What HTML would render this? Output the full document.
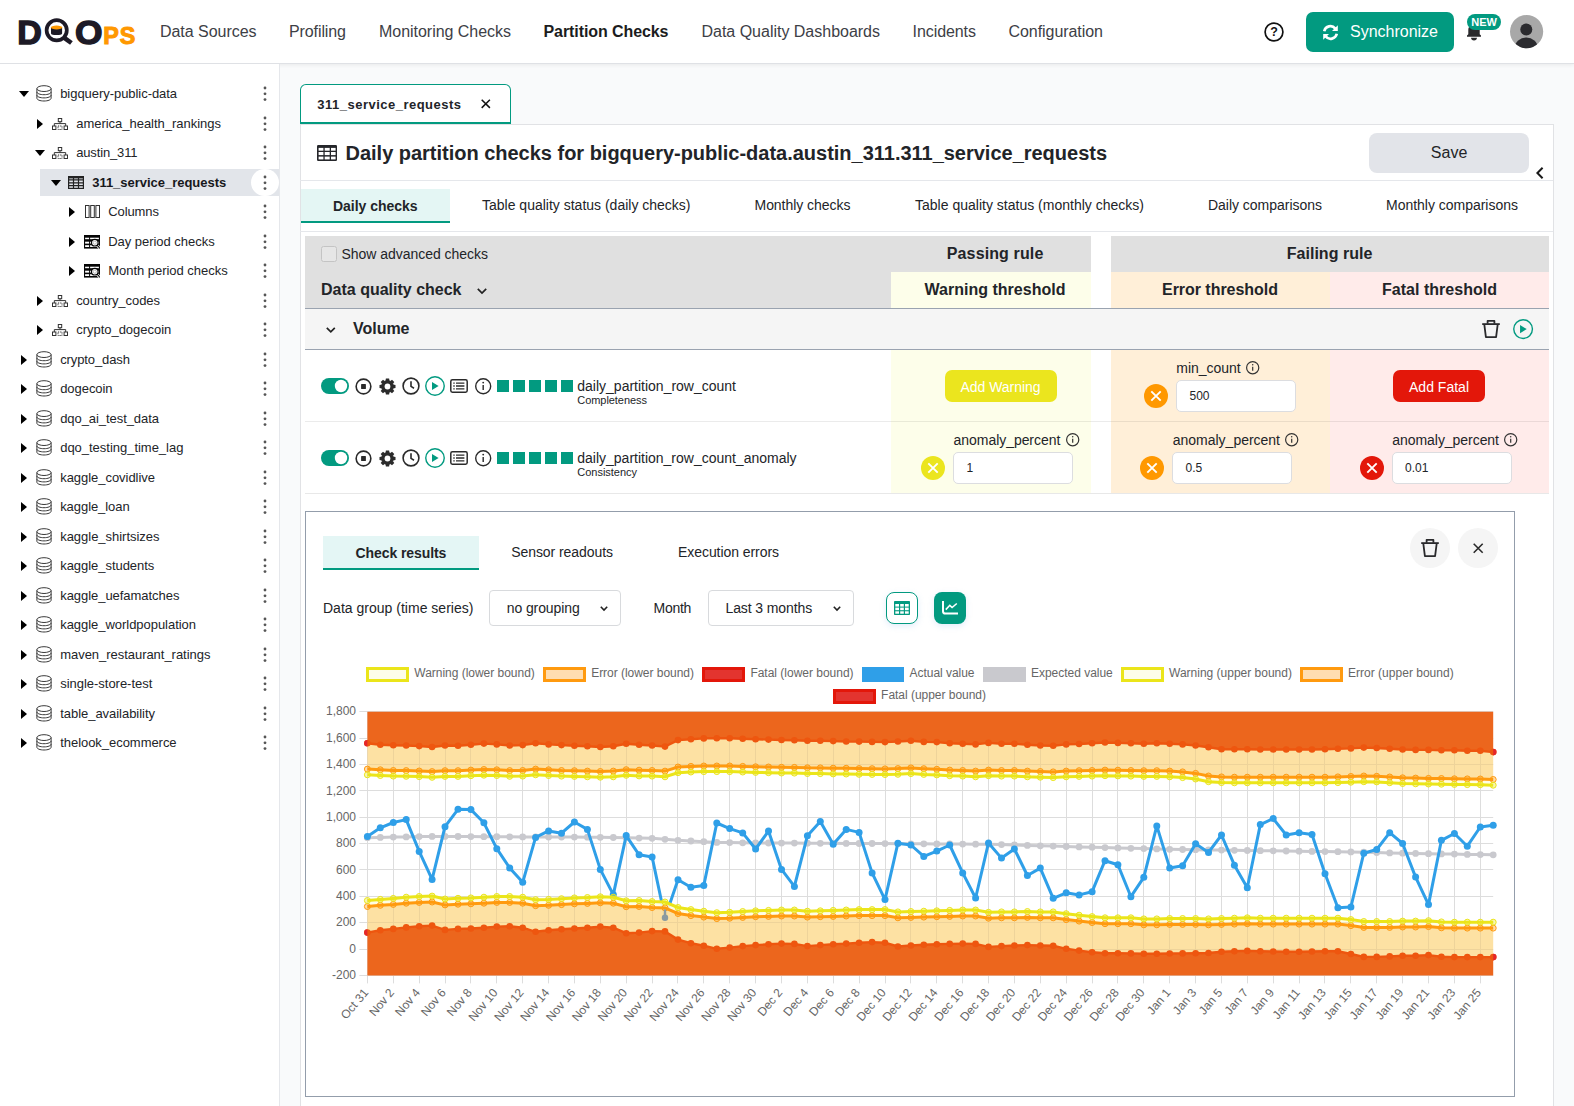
<!DOCTYPE html>
<html lang="en"><head><meta charset="utf-8"><title>DQOps - Partition Checks</title>
<style>
html,body{margin:0;padding:0}
body{width:1574px;height:1106px;overflow:hidden;background:#f9fafb;position:relative;font-family:"Liberation Sans",sans-serif;color:#1f2937}
.t{position:absolute;white-space:pre}
.b{position:absolute;box-sizing:border-box}
svg{overflow:visible}
svg text{font-family:"Liberation Sans",sans-serif}
</style></head>
<body>
<header><div class="b" style="left:0.0px;top:0.0px;width:1574.0px;height:64.0px;background:#fff;border-bottom:1px solid #dfe1e5;box-shadow:0 1px 4px rgba(0,0,0,0.07)"></div><div class="logo"><div class="t" style="left:17.3px;top:8px;font-size:34px;line-height:48px;font-weight:700;color:#1d1a26;letter-spacing:0.000px;-webkit-text-stroke:1.4px #1d1a26;">D</div><div class="t" style="left:44.0px;top:8px;font-size:34px;line-height:48px;font-weight:700;color:transparent;letter-spacing:0.000px;">Q</div><svg class="b" style="left:43.5px;top:18.0px;" width="30" height="30" viewBox="0 0 30 30"><circle cx="12.7" cy="12.3" r="10.1" fill="none" stroke="#1d1a26" stroke-width="3.7"/><path d="M19.6 19.3L27.4 25" stroke="#1d1a26" stroke-width="4.6" stroke-linecap="butt"/><path d="M7 9.8V15.4C7 16.3 9.5 17 12.55 17S18.1 16.3 18.1 15.4V9.8Z" fill="#1d1a26"/><ellipse cx="12.55" cy="9.5" rx="5.8" ry="1.9" fill="#ff9800"/></svg><div class="t" style="left:74.6px;top:8px;font-size:34px;line-height:48px;font-weight:700;color:#1d1a26;letter-spacing:0.000px;-webkit-text-stroke:1.4px #1d1a26;transform:scaleX(1.04);transform-origin:left center;">O</div><div class="t" style="left:103.2px;top:20px;font-size:23.4px;line-height:33px;font-weight:700;color:#ff9800;letter-spacing:0.897px;-webkit-text-stroke:1px #ff9800;">PS</div></div><div class="t" style="left:160.0px;top:21px;font-size:16px;line-height:22px;font-weight:400;color:#3d4046;letter-spacing:-0.040px;">Data Sources</div><div class="t" style="left:289.0px;top:21px;font-size:16px;line-height:22px;font-weight:400;color:#3d4046;letter-spacing:-0.102px;">Profiling</div><div class="t" style="left:379.0px;top:21px;font-size:16px;line-height:22px;font-weight:400;color:#3d4046;letter-spacing:-0.031px;">Monitoring Checks</div><div class="t" style="left:543.5px;top:21px;font-size:16px;line-height:22px;font-weight:700;color:#1b1c20;letter-spacing:-0.084px;">Partition Checks</div><div class="t" style="left:701.5px;top:21px;font-size:16px;line-height:22px;font-weight:400;color:#3d4046;letter-spacing:-0.012px;">Data Quality Dashboards</div><div class="t" style="left:912.5px;top:21px;font-size:16px;line-height:22px;font-weight:400;color:#3d4046;letter-spacing:-0.068px;">Incidents</div><div class="t" style="left:1008.5px;top:21px;font-size:16px;line-height:22px;font-weight:400;color:#3d4046;letter-spacing:-0.056px;">Configuration</div><svg class="b" style="left:1264.0px;top:22.0px;" width="20" height="20" viewBox="0 0 20 20"><circle cx="10" cy="10" r="8.9" fill="none" stroke="#111" stroke-width="1.7"/><text x="10" y="14.3" text-anchor="middle" font-size="12.5" font-weight="700" fill="#111">?</text></svg><div class="b" style="left:1306.0px;top:12.0px;width:148.0px;height:39.5px;background:#029a80;border-radius:7px"></div><svg class="b" style="left:1322.0px;top:23.5px;" width="17" height="17" viewBox="0 0 17 17"><g fill="none" stroke="#fff" stroke-width="2.6" stroke-linecap="butt"><path d="M2.2 7.2A6.3 6.3 0 0 1 13.3 4.6"/><path d="M14.8 9.8A6.3 6.3 0 0 1 3.7 12.4"/></g><path d="M15.8 1.2V7H10Z" fill="#fff"/><path d="M1.2 15.8V10H7Z" fill="#fff"/></svg><div class="t" style="left:1350.0px;top:21px;font-size:16px;line-height:22px;font-weight:400;color:#fff;letter-spacing:-0.005px;">Synchronize</div><svg class="b" style="left:1467.0px;top:23.5px;" width="14" height="17" viewBox="0 0 14 17"><path d="M7 0.5C3.6 0.5 1.3 2.8 1.3 6V10.2L0 11.6V12.7H14V11.6L12.7 10.2V6C12.7 2.8 10.4 0.5 7 0.5Z" fill="#2a2a2c"/><path d="M4 13.7H10C10 15.3 8.7 16.5 7 16.5S4 15.3 4 13.7Z" fill="#2a2a2c"/></svg><div class="b" style="left:1467.0px;top:14.0px;width:34.0px;height:16.0px;background:#029a80;border-radius:8px"></div><div class="t" style="left:1471.3px;top:15px;font-size:11px;line-height:15px;font-weight:700;color:#fff;letter-spacing:0.014px;">NEW</div><svg class="b" style="left:1509.8px;top:15.4px;" width="33.2" height="33.2" viewBox="0 0 33.2 33.2"><defs><clipPath id="avc"><circle cx="16.6" cy="16.6" r="16.6"/></clipPath></defs><circle cx="16.6" cy="16.6" r="16.6" fill="#a8a8a8"/><g clip-path="url(#avc)"><circle cx="16.3" cy="14.4" r="6" fill="#2b2b2f"/><ellipse cx="16.3" cy="32.8" rx="11.4" ry="10.2" fill="#2b2b2f"/></g></svg></header>
<aside><div class="b" style="left:0.0px;top:64.0px;width:279.5px;height:1042.0px;background:#fff;border-right:1px solid #e5e7eb"></div><svg class="b" style="left:19.0px;top:90.8px;" width="10" height="6" viewBox="0 0 10 6"><path d="M0 0H10L5 6Z" fill="#000"/></svg><svg class="b" style="left:36.0px;top:85.1px;" width="16" height="17" viewBox="0 0 16 17"><g fill="none" stroke="#3a3a3a" stroke-width="1"><ellipse cx="8" cy="3.6" rx="7.1" ry="2.9"/><path d="M0.9 3.6V13.2C0.9 14.8 4 16 8 16S15.1 14.8 15.1 13.2V3.6"/><path d="M0.9 6.9C0.9 8.5 4 9.7 8 9.7S15.1 8.5 15.1 6.9"/><path d="M0.9 10.1C0.9 11.7 4 12.9 8 12.9S15.1 11.7 15.1 10.1"/></g></svg><div class="t" style="left:60.2px;top:85px;font-size:13px;line-height:18px;font-weight:400;color:#222428;letter-spacing:-0.047px;">bigquery-public-data</div><svg class="b" style="left:262.5px;top:86.0px;" width="4" height="15.6" viewBox="0 0 4 15.6"><circle cx="2" cy="2" r="1.4" fill="#555"/><circle cx="2" cy="7.8" r="1.4" fill="#555"/><circle cx="2" cy="13.6" r="1.4" fill="#555"/></svg><svg class="b" style="left:36.9px;top:118.8px;" width="6" height="10" viewBox="0 0 6 10"><path d="M0 0V10L6 5Z" fill="#000"/></svg><svg class="b" style="left:52.0px;top:118.0px;" width="16" height="12" viewBox="0 0 16 12"><g fill="none" stroke="#333" stroke-width="1"><rect x="6.3" y="0.5" width="3.4" height="3.2"/><path d="M8 3.7V5.6M2.3 8V5.6H13.7V8"/><rect x="0.5" y="8" width="3.4" height="3.5"/><rect x="12.1" y="8" width="3.4" height="3.5"/><rect x="6" y="8" width="4" height="3.5" stroke-dasharray="1.2 1"/></g></svg><div class="t" style="left:76.2px;top:115px;font-size:13px;line-height:18px;font-weight:400;color:#222428;letter-spacing:-0.021px;">america_health_rankings</div><svg class="b" style="left:262.5px;top:116.0px;" width="4" height="15.6" viewBox="0 0 4 15.6"><circle cx="2" cy="2" r="1.4" fill="#555"/><circle cx="2" cy="7.8" r="1.4" fill="#555"/><circle cx="2" cy="13.6" r="1.4" fill="#555"/></svg><svg class="b" style="left:35.0px;top:149.8px;" width="10" height="6" viewBox="0 0 10 6"><path d="M0 0H10L5 6Z" fill="#000"/></svg><svg class="b" style="left:52.0px;top:147.0px;" width="16" height="12" viewBox="0 0 16 12"><g fill="none" stroke="#333" stroke-width="1"><rect x="6.3" y="0.5" width="3.4" height="3.2"/><path d="M8 3.7V5.6M2.3 8V5.6H13.7V8"/><rect x="0.5" y="8" width="3.4" height="3.5"/><rect x="12.1" y="8" width="3.4" height="3.5"/><rect x="6" y="8" width="4" height="3.5" stroke-dasharray="1.2 1"/></g></svg><div class="t" style="left:76.2px;top:144px;font-size:13px;line-height:18px;font-weight:400;color:#222428;letter-spacing:-0.151px;">austin_311</div><svg class="b" style="left:262.5px;top:145.0px;" width="4" height="15.6" viewBox="0 0 4 15.6"><circle cx="2" cy="2" r="1.4" fill="#555"/><circle cx="2" cy="7.8" r="1.4" fill="#555"/><circle cx="2" cy="13.6" r="1.4" fill="#555"/></svg><div class="b" style="left:40.0px;top:169.0px;width:239.0px;height:27.0px;background:#e2e5ea"></div><div class="b" style="left:251.0px;top:168.6px;width:27.6px;height:27.6px;background:#fff;border-radius:14px"></div><svg class="b" style="left:51.0px;top:179.8px;" width="10" height="6" viewBox="0 0 10 6"><path d="M0 0H10L5 6Z" fill="#000"/></svg><svg class="b" style="left:67.8px;top:176.2px;" width="16.0" height="13.0" viewBox="0 0 16 13"><g fill="none" stroke="#222" stroke-width="1.2"><rect x="0.6" y="0.6" width="14.8" height="11.8"/><path d="M0.6 3.9H15.4M0.6 6.8H15.4M0.6 9.7H15.4M5.5 2V12.4M10.5 2V12.4"/></g><rect x="0" y="0" width="16" height="2.4" fill="#222"/></svg><div class="t" style="left:92.2px;top:174px;font-size:13px;line-height:18px;font-weight:700;color:#17181c;letter-spacing:-0.024px;">311_service_requests</div><svg class="b" style="left:262.5px;top:175.0px;" width="4" height="15.6" viewBox="0 0 4 15.6"><circle cx="2" cy="2" r="1.4" fill="#555"/><circle cx="2" cy="7.8" r="1.4" fill="#555"/><circle cx="2" cy="13.6" r="1.4" fill="#555"/></svg><svg class="b" style="left:68.9px;top:206.8px;" width="6" height="10" viewBox="0 0 6 10"><path d="M0 0V10L6 5Z" fill="#000"/></svg><svg class="b" style="left:84.5px;top:205.3px;" width="15" height="13" viewBox="0 0 15 13"><g fill="none" stroke="#333" stroke-width="1"><rect x="0.5" y="0.5" width="3.6" height="12"/><rect x="5.7" y="0.5" width="3.6" height="12"/><rect x="10.9" y="0.5" width="3.6" height="12"/></g></svg><div class="t" style="left:108.2px;top:203px;font-size:13px;line-height:18px;font-weight:400;color:#222428;letter-spacing:-0.083px;">Columns</div><svg class="b" style="left:262.5px;top:204.0px;" width="4" height="15.6" viewBox="0 0 4 15.6"><circle cx="2" cy="2" r="1.4" fill="#555"/><circle cx="2" cy="7.8" r="1.4" fill="#555"/><circle cx="2" cy="13.6" r="1.4" fill="#555"/></svg><svg class="b" style="left:68.9px;top:236.8px;" width="6" height="10" viewBox="0 0 6 10"><path d="M0 0V10L6 5Z" fill="#000"/></svg><svg class="b" style="left:84.0px;top:235.0px;" width="16" height="13.6" viewBox="0 0 16 13.6"><rect x="0" y="0" width="16" height="13.6" fill="#050505"/><rect x="1.1" y="2.7" width="4.0" height="1.5" fill="#fff"/><rect x="1.1" y="6.7" width="4.0" height="1.9" fill="#fff"/><rect x="1.1" y="10.2" width="4.0" height="1.8" fill="#fff"/><rect x="6.1" y="2.7" width="8.8" height="1.5" fill="#fff"/><rect x="6.1" y="6.7" width="8.8" height="1.9" fill="#fff"/><rect x="6.1" y="10.2" width="8.8" height="1.8" fill="#fff"/><path d="M13 10.2L15.6 13" stroke="#fff" stroke-width="2.6"/><circle cx="10.8" cy="7.7" r="3.3" fill="#fff" stroke="#050505" stroke-width="1.2"/><circle cx="10.8" cy="7.7" r="1.6" fill="none" stroke="#999" stroke-width="0.6"/><path d="M13.1 10.2L15.6 12.9" stroke="#050505" stroke-width="1.2"/></svg><div class="t" style="left:108.2px;top:233px;font-size:13px;line-height:18px;font-weight:400;color:#222428;letter-spacing:-0.028px;">Day period checks</div><svg class="b" style="left:262.5px;top:234.0px;" width="4" height="15.6" viewBox="0 0 4 15.6"><circle cx="2" cy="2" r="1.4" fill="#555"/><circle cx="2" cy="7.8" r="1.4" fill="#555"/><circle cx="2" cy="13.6" r="1.4" fill="#555"/></svg><svg class="b" style="left:68.9px;top:265.8px;" width="6" height="10" viewBox="0 0 6 10"><path d="M0 0V10L6 5Z" fill="#000"/></svg><svg class="b" style="left:84.0px;top:264.0px;" width="16" height="13.6" viewBox="0 0 16 13.6"><rect x="0" y="0" width="16" height="13.6" fill="#050505"/><rect x="1.1" y="2.7" width="4.0" height="1.5" fill="#fff"/><rect x="1.1" y="6.7" width="4.0" height="1.9" fill="#fff"/><rect x="1.1" y="10.2" width="4.0" height="1.8" fill="#fff"/><rect x="6.1" y="2.7" width="8.8" height="1.5" fill="#fff"/><rect x="6.1" y="6.7" width="8.8" height="1.9" fill="#fff"/><rect x="6.1" y="10.2" width="8.8" height="1.8" fill="#fff"/><path d="M13 10.2L15.6 13" stroke="#fff" stroke-width="2.6"/><circle cx="10.8" cy="7.7" r="3.3" fill="#fff" stroke="#050505" stroke-width="1.2"/><circle cx="10.8" cy="7.7" r="1.6" fill="none" stroke="#999" stroke-width="0.6"/><path d="M13.1 10.2L15.6 12.9" stroke="#050505" stroke-width="1.2"/></svg><div class="t" style="left:108.2px;top:262px;font-size:13px;line-height:18px;font-weight:400;color:#222428;letter-spacing:-0.025px;">Month period checks</div><svg class="b" style="left:262.5px;top:263.0px;" width="4" height="15.6" viewBox="0 0 4 15.6"><circle cx="2" cy="2" r="1.4" fill="#555"/><circle cx="2" cy="7.8" r="1.4" fill="#555"/><circle cx="2" cy="13.6" r="1.4" fill="#555"/></svg><svg class="b" style="left:36.9px;top:295.8px;" width="6" height="10" viewBox="0 0 6 10"><path d="M0 0V10L6 5Z" fill="#000"/></svg><svg class="b" style="left:52.0px;top:295.0px;" width="16" height="12" viewBox="0 0 16 12"><g fill="none" stroke="#333" stroke-width="1"><rect x="6.3" y="0.5" width="3.4" height="3.2"/><path d="M8 3.7V5.6M2.3 8V5.6H13.7V8"/><rect x="0.5" y="8" width="3.4" height="3.5"/><rect x="12.1" y="8" width="3.4" height="3.5"/><rect x="6" y="8" width="4" height="3.5" stroke-dasharray="1.2 1"/></g></svg><div class="t" style="left:76.2px;top:292px;font-size:13px;line-height:18px;font-weight:400;color:#222428;letter-spacing:-0.064px;">country_codes</div><svg class="b" style="left:262.5px;top:293.0px;" width="4" height="15.6" viewBox="0 0 4 15.6"><circle cx="2" cy="2" r="1.4" fill="#555"/><circle cx="2" cy="7.8" r="1.4" fill="#555"/><circle cx="2" cy="13.6" r="1.4" fill="#555"/></svg><svg class="b" style="left:36.9px;top:324.8px;" width="6" height="10" viewBox="0 0 6 10"><path d="M0 0V10L6 5Z" fill="#000"/></svg><svg class="b" style="left:52.0px;top:324.0px;" width="16" height="12" viewBox="0 0 16 12"><g fill="none" stroke="#333" stroke-width="1"><rect x="6.3" y="0.5" width="3.4" height="3.2"/><path d="M8 3.7V5.6M2.3 8V5.6H13.7V8"/><rect x="0.5" y="8" width="3.4" height="3.5"/><rect x="12.1" y="8" width="3.4" height="3.5"/><rect x="6" y="8" width="4" height="3.5" stroke-dasharray="1.2 1"/></g></svg><div class="t" style="left:76.2px;top:321px;font-size:13px;line-height:18px;font-weight:400;color:#222428;letter-spacing:-0.022px;">crypto_dogecoin</div><svg class="b" style="left:262.5px;top:322.0px;" width="4" height="15.6" viewBox="0 0 4 15.6"><circle cx="2" cy="2" r="1.4" fill="#555"/><circle cx="2" cy="7.8" r="1.4" fill="#555"/><circle cx="2" cy="13.6" r="1.4" fill="#555"/></svg><svg class="b" style="left:20.9px;top:354.8px;" width="6" height="10" viewBox="0 0 6 10"><path d="M0 0V10L6 5Z" fill="#000"/></svg><svg class="b" style="left:36.0px;top:351.1px;" width="16" height="17" viewBox="0 0 16 17"><g fill="none" stroke="#3a3a3a" stroke-width="1"><ellipse cx="8" cy="3.6" rx="7.1" ry="2.9"/><path d="M0.9 3.6V13.2C0.9 14.8 4 16 8 16S15.1 14.8 15.1 13.2V3.6"/><path d="M0.9 6.9C0.9 8.5 4 9.7 8 9.7S15.1 8.5 15.1 6.9"/><path d="M0.9 10.1C0.9 11.7 4 12.9 8 12.9S15.1 11.7 15.1 10.1"/></g></svg><div class="t" style="left:60.2px;top:351px;font-size:13px;line-height:18px;font-weight:400;color:#222428;letter-spacing:-0.103px;">crypto_dash</div><svg class="b" style="left:262.5px;top:352.0px;" width="4" height="15.6" viewBox="0 0 4 15.6"><circle cx="2" cy="2" r="1.4" fill="#555"/><circle cx="2" cy="7.8" r="1.4" fill="#555"/><circle cx="2" cy="13.6" r="1.4" fill="#555"/></svg><svg class="b" style="left:20.9px;top:383.8px;" width="6" height="10" viewBox="0 0 6 10"><path d="M0 0V10L6 5Z" fill="#000"/></svg><svg class="b" style="left:36.0px;top:380.1px;" width="16" height="17" viewBox="0 0 16 17"><g fill="none" stroke="#3a3a3a" stroke-width="1"><ellipse cx="8" cy="3.6" rx="7.1" ry="2.9"/><path d="M0.9 3.6V13.2C0.9 14.8 4 16 8 16S15.1 14.8 15.1 13.2V3.6"/><path d="M0.9 6.9C0.9 8.5 4 9.7 8 9.7S15.1 8.5 15.1 6.9"/><path d="M0.9 10.1C0.9 11.7 4 12.9 8 12.9S15.1 11.7 15.1 10.1"/></g></svg><div class="t" style="left:60.2px;top:380px;font-size:13px;line-height:18px;font-weight:400;color:#222428;letter-spacing:-0.054px;">dogecoin</div><svg class="b" style="left:262.5px;top:381.0px;" width="4" height="15.6" viewBox="0 0 4 15.6"><circle cx="2" cy="2" r="1.4" fill="#555"/><circle cx="2" cy="7.8" r="1.4" fill="#555"/><circle cx="2" cy="13.6" r="1.4" fill="#555"/></svg><svg class="b" style="left:20.9px;top:413.8px;" width="6" height="10" viewBox="0 0 6 10"><path d="M0 0V10L6 5Z" fill="#000"/></svg><svg class="b" style="left:36.0px;top:410.1px;" width="16" height="17" viewBox="0 0 16 17"><g fill="none" stroke="#3a3a3a" stroke-width="1"><ellipse cx="8" cy="3.6" rx="7.1" ry="2.9"/><path d="M0.9 3.6V13.2C0.9 14.8 4 16 8 16S15.1 14.8 15.1 13.2V3.6"/><path d="M0.9 6.9C0.9 8.5 4 9.7 8 9.7S15.1 8.5 15.1 6.9"/><path d="M0.9 10.1C0.9 11.7 4 12.9 8 12.9S15.1 11.7 15.1 10.1"/></g></svg><div class="t" style="left:60.2px;top:410px;font-size:13px;line-height:18px;font-weight:400;color:#222428;letter-spacing:-0.064px;">dqo_ai_test_data</div><svg class="b" style="left:262.5px;top:411.0px;" width="4" height="15.6" viewBox="0 0 4 15.6"><circle cx="2" cy="2" r="1.4" fill="#555"/><circle cx="2" cy="7.8" r="1.4" fill="#555"/><circle cx="2" cy="13.6" r="1.4" fill="#555"/></svg><svg class="b" style="left:20.9px;top:442.8px;" width="6" height="10" viewBox="0 0 6 10"><path d="M0 0V10L6 5Z" fill="#000"/></svg><svg class="b" style="left:36.0px;top:439.1px;" width="16" height="17" viewBox="0 0 16 17"><g fill="none" stroke="#3a3a3a" stroke-width="1"><ellipse cx="8" cy="3.6" rx="7.1" ry="2.9"/><path d="M0.9 3.6V13.2C0.9 14.8 4 16 8 16S15.1 14.8 15.1 13.2V3.6"/><path d="M0.9 6.9C0.9 8.5 4 9.7 8 9.7S15.1 8.5 15.1 6.9"/><path d="M0.9 10.1C0.9 11.7 4 12.9 8 12.9S15.1 11.7 15.1 10.1"/></g></svg><div class="t" style="left:60.2px;top:439px;font-size:13px;line-height:18px;font-weight:400;color:#222428;letter-spacing:-0.021px;">dqo_testing_time_lag</div><svg class="b" style="left:262.5px;top:440.0px;" width="4" height="15.6" viewBox="0 0 4 15.6"><circle cx="2" cy="2" r="1.4" fill="#555"/><circle cx="2" cy="7.8" r="1.4" fill="#555"/><circle cx="2" cy="13.6" r="1.4" fill="#555"/></svg><svg class="b" style="left:20.9px;top:472.8px;" width="6" height="10" viewBox="0 0 6 10"><path d="M0 0V10L6 5Z" fill="#000"/></svg><svg class="b" style="left:36.0px;top:469.1px;" width="16" height="17" viewBox="0 0 16 17"><g fill="none" stroke="#3a3a3a" stroke-width="1"><ellipse cx="8" cy="3.6" rx="7.1" ry="2.9"/><path d="M0.9 3.6V13.2C0.9 14.8 4 16 8 16S15.1 14.8 15.1 13.2V3.6"/><path d="M0.9 6.9C0.9 8.5 4 9.7 8 9.7S15.1 8.5 15.1 6.9"/><path d="M0.9 10.1C0.9 11.7 4 12.9 8 12.9S15.1 11.7 15.1 10.1"/></g></svg><div class="t" style="left:60.2px;top:469px;font-size:13px;line-height:18px;font-weight:400;color:#222428;letter-spacing:-0.040px;">kaggle_covidlive</div><svg class="b" style="left:262.5px;top:470.0px;" width="4" height="15.6" viewBox="0 0 4 15.6"><circle cx="2" cy="2" r="1.4" fill="#555"/><circle cx="2" cy="7.8" r="1.4" fill="#555"/><circle cx="2" cy="13.6" r="1.4" fill="#555"/></svg><svg class="b" style="left:20.9px;top:501.8px;" width="6" height="10" viewBox="0 0 6 10"><path d="M0 0V10L6 5Z" fill="#000"/></svg><svg class="b" style="left:36.0px;top:498.1px;" width="16" height="17" viewBox="0 0 16 17"><g fill="none" stroke="#3a3a3a" stroke-width="1"><ellipse cx="8" cy="3.6" rx="7.1" ry="2.9"/><path d="M0.9 3.6V13.2C0.9 14.8 4 16 8 16S15.1 14.8 15.1 13.2V3.6"/><path d="M0.9 6.9C0.9 8.5 4 9.7 8 9.7S15.1 8.5 15.1 6.9"/><path d="M0.9 10.1C0.9 11.7 4 12.9 8 12.9S15.1 11.7 15.1 10.1"/></g></svg><div class="t" style="left:60.2px;top:498px;font-size:13px;line-height:18px;font-weight:400;color:#222428;letter-spacing:-0.063px;">kaggle_loan</div><svg class="b" style="left:262.5px;top:499.0px;" width="4" height="15.6" viewBox="0 0 4 15.6"><circle cx="2" cy="2" r="1.4" fill="#555"/><circle cx="2" cy="7.8" r="1.4" fill="#555"/><circle cx="2" cy="13.6" r="1.4" fill="#555"/></svg><svg class="b" style="left:20.9px;top:531.8px;" width="6" height="10" viewBox="0 0 6 10"><path d="M0 0V10L6 5Z" fill="#000"/></svg><svg class="b" style="left:36.0px;top:528.1px;" width="16" height="17" viewBox="0 0 16 17"><g fill="none" stroke="#3a3a3a" stroke-width="1"><ellipse cx="8" cy="3.6" rx="7.1" ry="2.9"/><path d="M0.9 3.6V13.2C0.9 14.8 4 16 8 16S15.1 14.8 15.1 13.2V3.6"/><path d="M0.9 6.9C0.9 8.5 4 9.7 8 9.7S15.1 8.5 15.1 6.9"/><path d="M0.9 10.1C0.9 11.7 4 12.9 8 12.9S15.1 11.7 15.1 10.1"/></g></svg><div class="t" style="left:60.2px;top:528px;font-size:13px;line-height:18px;font-weight:400;color:#222428;letter-spacing:-0.026px;">kaggle_shirtsizes</div><svg class="b" style="left:262.5px;top:529.0px;" width="4" height="15.6" viewBox="0 0 4 15.6"><circle cx="2" cy="2" r="1.4" fill="#555"/><circle cx="2" cy="7.8" r="1.4" fill="#555"/><circle cx="2" cy="13.6" r="1.4" fill="#555"/></svg><svg class="b" style="left:20.9px;top:560.8px;" width="6" height="10" viewBox="0 0 6 10"><path d="M0 0V10L6 5Z" fill="#000"/></svg><svg class="b" style="left:36.0px;top:557.1px;" width="16" height="17" viewBox="0 0 16 17"><g fill="none" stroke="#3a3a3a" stroke-width="1"><ellipse cx="8" cy="3.6" rx="7.1" ry="2.9"/><path d="M0.9 3.6V13.2C0.9 14.8 4 16 8 16S15.1 14.8 15.1 13.2V3.6"/><path d="M0.9 6.9C0.9 8.5 4 9.7 8 9.7S15.1 8.5 15.1 6.9"/><path d="M0.9 10.1C0.9 11.7 4 12.9 8 12.9S15.1 11.7 15.1 10.1"/></g></svg><div class="t" style="left:60.2px;top:557px;font-size:13px;line-height:18px;font-weight:400;color:#222428;letter-spacing:-0.042px;">kaggle_students</div><svg class="b" style="left:262.5px;top:558.0px;" width="4" height="15.6" viewBox="0 0 4 15.6"><circle cx="2" cy="2" r="1.4" fill="#555"/><circle cx="2" cy="7.8" r="1.4" fill="#555"/><circle cx="2" cy="13.6" r="1.4" fill="#555"/></svg><svg class="b" style="left:20.9px;top:590.8px;" width="6" height="10" viewBox="0 0 6 10"><path d="M0 0V10L6 5Z" fill="#000"/></svg><svg class="b" style="left:36.0px;top:587.1px;" width="16" height="17" viewBox="0 0 16 17"><g fill="none" stroke="#3a3a3a" stroke-width="1"><ellipse cx="8" cy="3.6" rx="7.1" ry="2.9"/><path d="M0.9 3.6V13.2C0.9 14.8 4 16 8 16S15.1 14.8 15.1 13.2V3.6"/><path d="M0.9 6.9C0.9 8.5 4 9.7 8 9.7S15.1 8.5 15.1 6.9"/><path d="M0.9 10.1C0.9 11.7 4 12.9 8 12.9S15.1 11.7 15.1 10.1"/></g></svg><div class="t" style="left:60.2px;top:587px;font-size:13px;line-height:18px;font-weight:400;color:#222428;letter-spacing:-0.046px;">kaggle_uefamatches</div><svg class="b" style="left:262.5px;top:588.0px;" width="4" height="15.6" viewBox="0 0 4 15.6"><circle cx="2" cy="2" r="1.4" fill="#555"/><circle cx="2" cy="7.8" r="1.4" fill="#555"/><circle cx="2" cy="13.6" r="1.4" fill="#555"/></svg><svg class="b" style="left:20.9px;top:619.8px;" width="6" height="10" viewBox="0 0 6 10"><path d="M0 0V10L6 5Z" fill="#000"/></svg><svg class="b" style="left:36.0px;top:616.1px;" width="16" height="17" viewBox="0 0 16 17"><g fill="none" stroke="#3a3a3a" stroke-width="1"><ellipse cx="8" cy="3.6" rx="7.1" ry="2.9"/><path d="M0.9 3.6V13.2C0.9 14.8 4 16 8 16S15.1 14.8 15.1 13.2V3.6"/><path d="M0.9 6.9C0.9 8.5 4 9.7 8 9.7S15.1 8.5 15.1 6.9"/><path d="M0.9 10.1C0.9 11.7 4 12.9 8 12.9S15.1 11.7 15.1 10.1"/></g></svg><div class="t" style="left:60.2px;top:616px;font-size:13px;line-height:18px;font-weight:400;color:#222428;letter-spacing:-0.039px;">kaggle_worldpopulation</div><svg class="b" style="left:262.5px;top:617.0px;" width="4" height="15.6" viewBox="0 0 4 15.6"><circle cx="2" cy="2" r="1.4" fill="#555"/><circle cx="2" cy="7.8" r="1.4" fill="#555"/><circle cx="2" cy="13.6" r="1.4" fill="#555"/></svg><svg class="b" style="left:20.9px;top:649.8px;" width="6" height="10" viewBox="0 0 6 10"><path d="M0 0V10L6 5Z" fill="#000"/></svg><svg class="b" style="left:36.0px;top:646.1px;" width="16" height="17" viewBox="0 0 16 17"><g fill="none" stroke="#3a3a3a" stroke-width="1"><ellipse cx="8" cy="3.6" rx="7.1" ry="2.9"/><path d="M0.9 3.6V13.2C0.9 14.8 4 16 8 16S15.1 14.8 15.1 13.2V3.6"/><path d="M0.9 6.9C0.9 8.5 4 9.7 8 9.7S15.1 8.5 15.1 6.9"/><path d="M0.9 10.1C0.9 11.7 4 12.9 8 12.9S15.1 11.7 15.1 10.1"/></g></svg><div class="t" style="left:60.2px;top:646px;font-size:13px;line-height:18px;font-weight:400;color:#222428;letter-spacing:-0.036px;">maven_restaurant_ratings</div><svg class="b" style="left:262.5px;top:647.0px;" width="4" height="15.6" viewBox="0 0 4 15.6"><circle cx="2" cy="2" r="1.4" fill="#555"/><circle cx="2" cy="7.8" r="1.4" fill="#555"/><circle cx="2" cy="13.6" r="1.4" fill="#555"/></svg><svg class="b" style="left:20.9px;top:678.8px;" width="6" height="10" viewBox="0 0 6 10"><path d="M0 0V10L6 5Z" fill="#000"/></svg><svg class="b" style="left:36.0px;top:675.1px;" width="16" height="17" viewBox="0 0 16 17"><g fill="none" stroke="#3a3a3a" stroke-width="1"><ellipse cx="8" cy="3.6" rx="7.1" ry="2.9"/><path d="M0.9 3.6V13.2C0.9 14.8 4 16 8 16S15.1 14.8 15.1 13.2V3.6"/><path d="M0.9 6.9C0.9 8.5 4 9.7 8 9.7S15.1 8.5 15.1 6.9"/><path d="M0.9 10.1C0.9 11.7 4 12.9 8 12.9S15.1 11.7 15.1 10.1"/></g></svg><div class="t" style="left:60.2px;top:675px;font-size:13px;line-height:18px;font-weight:400;color:#222428;letter-spacing:-0.024px;">single-store-test</div><svg class="b" style="left:262.5px;top:676.0px;" width="4" height="15.6" viewBox="0 0 4 15.6"><circle cx="2" cy="2" r="1.4" fill="#555"/><circle cx="2" cy="7.8" r="1.4" fill="#555"/><circle cx="2" cy="13.6" r="1.4" fill="#555"/></svg><svg class="b" style="left:20.9px;top:708.8px;" width="6" height="10" viewBox="0 0 6 10"><path d="M0 0V10L6 5Z" fill="#000"/></svg><svg class="b" style="left:36.0px;top:705.1px;" width="16" height="17" viewBox="0 0 16 17"><g fill="none" stroke="#3a3a3a" stroke-width="1"><ellipse cx="8" cy="3.6" rx="7.1" ry="2.9"/><path d="M0.9 3.6V13.2C0.9 14.8 4 16 8 16S15.1 14.8 15.1 13.2V3.6"/><path d="M0.9 6.9C0.9 8.5 4 9.7 8 9.7S15.1 8.5 15.1 6.9"/><path d="M0.9 10.1C0.9 11.7 4 12.9 8 12.9S15.1 11.7 15.1 10.1"/></g></svg><div class="t" style="left:60.2px;top:705px;font-size:13px;line-height:18px;font-weight:400;color:#222428;letter-spacing:-0.036px;">table_availability</div><svg class="b" style="left:262.5px;top:706.0px;" width="4" height="15.6" viewBox="0 0 4 15.6"><circle cx="2" cy="2" r="1.4" fill="#555"/><circle cx="2" cy="7.8" r="1.4" fill="#555"/><circle cx="2" cy="13.6" r="1.4" fill="#555"/></svg><svg class="b" style="left:20.9px;top:737.8px;" width="6" height="10" viewBox="0 0 6 10"><path d="M0 0V10L6 5Z" fill="#000"/></svg><svg class="b" style="left:36.0px;top:734.1px;" width="16" height="17" viewBox="0 0 16 17"><g fill="none" stroke="#3a3a3a" stroke-width="1"><ellipse cx="8" cy="3.6" rx="7.1" ry="2.9"/><path d="M0.9 3.6V13.2C0.9 14.8 4 16 8 16S15.1 14.8 15.1 13.2V3.6"/><path d="M0.9 6.9C0.9 8.5 4 9.7 8 9.7S15.1 8.5 15.1 6.9"/><path d="M0.9 10.1C0.9 11.7 4 12.9 8 12.9S15.1 11.7 15.1 10.1"/></g></svg><div class="t" style="left:60.2px;top:734px;font-size:13px;line-height:18px;font-weight:400;color:#222428;letter-spacing:-0.041px;">thelook_ecommerce</div><svg class="b" style="left:262.5px;top:735.0px;" width="4" height="15.6" viewBox="0 0 4 15.6"><circle cx="2" cy="2" r="1.4" fill="#555"/><circle cx="2" cy="7.8" r="1.4" fill="#555"/><circle cx="2" cy="13.6" r="1.4" fill="#555"/></svg></aside>
<main><div class="b" style="left:300.0px;top:84.0px;width:211.0px;height:40.0px;background:#fff;border:1px solid #029a80;border-bottom:2px solid #029a80;border-radius:6px 6px 0 0"></div><div class="t" style="left:317.3px;top:96px;font-size:13px;line-height:18px;font-weight:700;color:#222428;letter-spacing:0.487px;">311_service_requests</div><svg class="b" style="left:481.2px;top:99.2px;" width="9.6" height="9.6" viewBox="0 0 9.6 9.6"><path d="M0.7 0.7L8.9 8.9M8.9 0.7L0.7 8.9" stroke="#111" stroke-width="1.5" fill="none"/></svg><div class="b" style="left:300.0px;top:124.0px;width:1254.0px;height:986.0px;background:#fff;border:1px solid #e1e2e5"></div><div class="b" style="left:300.0px;top:180.0px;width:1253.0px;height:1.0px;background:#e5e7eb"></div><svg class="b" style="left:317.0px;top:145.0px;" width="20" height="16" viewBox="0 0 20 16"><rect x="0" y="0" width="20" height="16" rx="1.2" fill="#25262a"/><rect x="1.6" y="2.9" width="4.8" height="2.8" fill="#fff"/><rect x="1.6" y="7.0" width="4.8" height="3.1" fill="#fff"/><rect x="1.6" y="11.6" width="4.8" height="2.8" fill="#fff"/><rect x="7.7" y="2.9" width="5.0" height="2.8" fill="#fff"/><rect x="7.7" y="7.0" width="5.0" height="3.1" fill="#fff"/><rect x="7.7" y="11.6" width="5.0" height="2.8" fill="#fff"/><rect x="14.0" y="2.9" width="4.6" height="2.8" fill="#fff"/><rect x="14.0" y="7.0" width="4.6" height="3.1" fill="#fff"/><rect x="14.0" y="11.6" width="4.6" height="2.8" fill="#fff"/></svg><div class="t" style="left:345.5px;top:139px;font-size:20px;line-height:28px;font-weight:700;color:#222428;letter-spacing:-0.013px;">Daily partition checks for bigquery-public-data.austin_311.311_service_requests</div><div class="b" style="left:1369.0px;top:133.0px;width:160.0px;height:40.0px;background:#e2e4e9;border-radius:8px"></div><div class="t" style="left:1430.8px;top:142px;font-size:16px;line-height:22px;font-weight:400;color:#222428;letter-spacing:0.010px;">Save</div><svg class="b" style="left:1535.5px;top:167.0px;" width="7.4" height="12" viewBox="0 0 7.4 12"><path d="M6.6000000000000005 0.8L1.4 6.0L6.6000000000000005 11.2" fill="none" stroke="#1a1a1a" stroke-width="2.0"/></svg><div class="b" style="left:300.0px;top:231.0px;width:1253.0px;height:1.0px;background:#e5e7eb"></div><div class="b" style="left:301.0px;top:189.0px;width:149.0px;height:34.0px;background:#e4f6f4;border-bottom:2px solid #029a80"></div><div class="t" style="left:333.0px;top:196px;font-size:14px;line-height:20px;font-weight:700;color:#222428;letter-spacing:-0.031px;">Daily checks</div><div class="t" style="left:482.0px;top:195px;font-size:14px;line-height:20px;font-weight:400;color:#222428;letter-spacing:-0.001px;">Table quality status (daily checks)</div><div class="t" style="left:754.5px;top:195px;font-size:14px;line-height:20px;font-weight:400;color:#222428;letter-spacing:-0.037px;">Monthly checks</div><div class="t" style="left:915.0px;top:195px;font-size:14px;line-height:20px;font-weight:400;color:#222428;letter-spacing:0.007px;">Table quality status (monthly checks)</div><div class="t" style="left:1208.0px;top:195px;font-size:14px;line-height:20px;font-weight:400;color:#222428;letter-spacing:-0.023px;">Daily comparisons</div><div class="t" style="left:1386.0px;top:195px;font-size:14px;line-height:20px;font-weight:400;color:#222428;letter-spacing:-0.016px;">Monthly comparisons</div>
<section class="checks"><div class="b" style="left:305.0px;top:236.0px;width:786.0px;height:36.0px;background:#e0e0e0"></div><div class="b" style="left:1111.0px;top:236.0px;width:438.0px;height:36.0px;background:#e0e0e0"></div><div class="b" style="left:305.0px;top:272.0px;width:586.0px;height:36.0px;background:#e0e0e0"></div><div class="b" style="left:891.0px;top:272.0px;width:200.0px;height:36.0px;background:#fdfeea"></div><div class="b" style="left:1111.0px;top:272.0px;width:219.0px;height:36.0px;background:#ffefd8"></div><div class="b" style="left:1330.0px;top:272.0px;width:219.0px;height:36.0px;background:#ffebea"></div><div class="b" style="left:305.0px;top:308.0px;width:1244.0px;height:1.0px;background:#9aa3b0"></div><div class="b" style="left:321.0px;top:246.0px;width:16.0px;height:16.0px;background:#e6e6e6;border:1px solid #c4c4c4;border-radius:2.5px"></div><div class="t" style="left:341.5px;top:244px;font-size:14px;line-height:20px;font-weight:400;color:#222428;letter-spacing:-0.031px;">Show advanced checks</div><div class="t" style="left:946.8px;top:243px;font-size:16px;line-height:22px;font-weight:700;color:#222428;letter-spacing:0.122px;">Passing rule</div><div class="t" style="left:1286.8px;top:243px;font-size:16px;line-height:22px;font-weight:700;color:#222428;letter-spacing:0.014px;">Failing rule</div><div class="t" style="left:321.0px;top:279px;font-size:16px;line-height:22px;font-weight:700;color:#222428;letter-spacing:0.000px;">Data quality check</div><svg class="b" style="left:477.0px;top:288.0px;" width="10" height="6.0" viewBox="0 0 10 6.0"><path d="M0.8 0.8L5.0 5.0L9.2 0.8" fill="none" stroke="#222" stroke-width="1.7"/></svg><div class="t" style="left:924.5px;top:279px;font-size:16px;line-height:22px;font-weight:700;color:#222428;letter-spacing:0.017px;">Warning threshold</div><div class="t" style="left:1162.0px;top:279px;font-size:16px;line-height:22px;font-weight:700;color:#222428;letter-spacing:-0.033px;">Error threshold</div><div class="t" style="left:1382.0px;top:279px;font-size:16px;line-height:22px;font-weight:700;color:#222428;letter-spacing:0.022px;">Fatal threshold</div><div class="b" style="left:305.0px;top:309.0px;width:1244.0px;height:40.0px;background:#f5f5f5"></div><div class="b" style="left:305.0px;top:349.0px;width:1244.0px;height:1.0px;background:#9aa3b0"></div><svg class="b" style="left:326.2px;top:327.1px;" width="9.6" height="5.8" viewBox="0 0 9.6 5.8"><path d="M0.8 0.8L4.8 4.8L8.799999999999999 0.8" fill="none" stroke="#222" stroke-width="1.7"/></svg><div class="t" style="left:353.0px;top:318px;font-size:16px;line-height:22px;font-weight:700;color:#222428;letter-spacing:-0.022px;">Volume</div><svg class="b" style="left:1482.0px;top:320.0px;" width="18.0" height="18.0" viewBox="0 0 18 18"><g fill="none" stroke="#2a2a2c" stroke-width="1.8" stroke-linejoin="round"><path d="M0.2 4.1H17.8"/><path d="M5.6 3.8V0.9H12.4V3.8"/><path d="M2.3 4.4L3.9 17.1H14.1L15.7 4.4"/></g></svg><svg class="b" style="left:1512.9px;top:318.9px;" width="20.2" height="20.2" viewBox="0 0 20.2 20.2"><circle cx="10.1" cy="10.1" r="9.35" fill="none" stroke="#029a80" stroke-width="1.4"/><path d="M7.07 5.96L13.74 10.1L7.07 14.24Z" fill="#029a80"/></svg><div class="b" style="left:891.0px;top:350.0px;width:200.0px;height:143.0px;background:#fdfeea"></div><div class="b" style="left:1111.0px;top:350.0px;width:219.0px;height:143.0px;background:#ffefd8"></div><div class="b" style="left:1330.0px;top:350.0px;width:219.0px;height:143.0px;background:#ffebea"></div><div class="b" style="left:305.0px;top:421.0px;width:1244.0px;height:1.0px;background:rgba(0,0,0,0.08)"></div><div class="b" style="left:305.0px;top:493.0px;width:1244.0px;height:1.0px;background:rgba(0,0,0,0.09)"></div><svg class="b" style="left:321.0px;top:378.0px;" width="28" height="16" viewBox="0 0 28 16"><rect x="0" y="0" width="28" height="16" rx="8" fill="#029a80"/><circle cx="20" cy="8" r="6.2" fill="#fff"/></svg><svg class="b" style="left:354.5px;top:377.5px;" width="17" height="17" viewBox="0 0 17 17"><circle cx="8.5" cy="8.5" r="7.35" fill="none" stroke="#2a2a2a" stroke-width="1.6"/><rect x="6.1" y="6.1" width="4.8" height="4.8" rx="0.5" fill="#2a2a2a"/></svg><svg class="b" style="left:378.5px;top:377.5px;" width="17" height="17" viewBox="0 0 17 17"><g transform="translate(8.5 8.5)"><path d="M-2.1 -5.5L-1.6 -8H1.6L2.1 -5.5Z" transform="rotate(0)" fill="#2b2b2b"/><path d="M-2.1 -5.5L-1.6 -8H1.6L2.1 -5.5Z" transform="rotate(45)" fill="#2b2b2b"/><path d="M-2.1 -5.5L-1.6 -8H1.6L2.1 -5.5Z" transform="rotate(90)" fill="#2b2b2b"/><path d="M-2.1 -5.5L-1.6 -8H1.6L2.1 -5.5Z" transform="rotate(135)" fill="#2b2b2b"/><path d="M-2.1 -5.5L-1.6 -8H1.6L2.1 -5.5Z" transform="rotate(180)" fill="#2b2b2b"/><path d="M-2.1 -5.5L-1.6 -8H1.6L2.1 -5.5Z" transform="rotate(225)" fill="#2b2b2b"/><path d="M-2.1 -5.5L-1.6 -8H1.6L2.1 -5.5Z" transform="rotate(270)" fill="#2b2b2b"/><path d="M-2.1 -5.5L-1.6 -8H1.6L2.1 -5.5Z" transform="rotate(315)" fill="#2b2b2b"/><circle r="6.2" fill="#2b2b2b"/><circle r="2.9" fill="#fff"/></g></svg><svg class="b" style="left:402.0px;top:377.0px;" width="18" height="18" viewBox="0 0 18 18"><circle cx="9" cy="9" r="7.9" fill="none" stroke="#2a2a2a" stroke-width="1.6"/><path d="M9 4.2V9.4L12 11.2" fill="none" stroke="#2a2a2a" stroke-width="1.6"/></svg><svg class="b" style="left:425.0px;top:376.0px;" width="20" height="20" viewBox="0 0 20 20"><circle cx="10" cy="10" r="9.25" fill="none" stroke="#029a80" stroke-width="1.4"/><path d="M7.00 5.90L13.60 10L7.00 14.10Z" fill="#029a80"/></svg><svg class="b" style="left:450.0px;top:379.0px;" width="18" height="14" viewBox="0 0 18 14"><rect x="0.8" y="0.8" width="16.4" height="12.4" rx="1.6" fill="none" stroke="#2a2a2a" stroke-width="1.5"/><path d="M6 4.1H14.4M6 7H14.4M6 9.9H14.4" stroke="#2a2a2a" stroke-width="1.4"/><path d="M3.3 4.1H4.7M3.3 7H4.7M3.3 9.9H4.7" stroke="#2a2a2a" stroke-width="1.4"/></svg><svg class="b" style="left:474.8px;top:377.8px;" width="16.4" height="16.4" viewBox="0 0 16.4 16.4"><circle cx="8.2" cy="8.2" r="7.50" fill="none" stroke="#2a2a2a" stroke-width="1.4"/><path d="M8.2 6.97V11.99" stroke="#2a2a2a" stroke-width="1.43"/><circle cx="8.2" cy="4.61" r="0.92" fill="#2a2a2a"/></svg><div class="b" style="left:497.0px;top:379.8px;width:12.2px;height:12.2px;background:#029a80"></div><div class="b" style="left:513.0px;top:379.8px;width:12.2px;height:12.2px;background:#029a80"></div><div class="b" style="left:529.0px;top:379.8px;width:12.2px;height:12.2px;background:#029a80"></div><div class="b" style="left:545.0px;top:379.8px;width:12.2px;height:12.2px;background:#029a80"></div><div class="b" style="left:561.0px;top:379.8px;width:12.2px;height:12.2px;background:#029a80"></div><div class="t" style="left:577.3px;top:376px;font-size:14px;line-height:20px;font-weight:400;color:#222428;letter-spacing:-0.003px;">daily_partition_row_count</div><div class="t" style="left:577.3px;top:393px;font-size:11px;line-height:15px;font-weight:400;color:#222428;letter-spacing:-0.057px;">Completeness</div><svg class="b" style="left:321.0px;top:450.0px;" width="28" height="16" viewBox="0 0 28 16"><rect x="0" y="0" width="28" height="16" rx="8" fill="#029a80"/><circle cx="20" cy="8" r="6.2" fill="#fff"/></svg><svg class="b" style="left:354.5px;top:449.5px;" width="17" height="17" viewBox="0 0 17 17"><circle cx="8.5" cy="8.5" r="7.35" fill="none" stroke="#2a2a2a" stroke-width="1.6"/><rect x="6.1" y="6.1" width="4.8" height="4.8" rx="0.5" fill="#2a2a2a"/></svg><svg class="b" style="left:378.5px;top:449.5px;" width="17" height="17" viewBox="0 0 17 17"><g transform="translate(8.5 8.5)"><path d="M-2.1 -5.5L-1.6 -8H1.6L2.1 -5.5Z" transform="rotate(0)" fill="#2b2b2b"/><path d="M-2.1 -5.5L-1.6 -8H1.6L2.1 -5.5Z" transform="rotate(45)" fill="#2b2b2b"/><path d="M-2.1 -5.5L-1.6 -8H1.6L2.1 -5.5Z" transform="rotate(90)" fill="#2b2b2b"/><path d="M-2.1 -5.5L-1.6 -8H1.6L2.1 -5.5Z" transform="rotate(135)" fill="#2b2b2b"/><path d="M-2.1 -5.5L-1.6 -8H1.6L2.1 -5.5Z" transform="rotate(180)" fill="#2b2b2b"/><path d="M-2.1 -5.5L-1.6 -8H1.6L2.1 -5.5Z" transform="rotate(225)" fill="#2b2b2b"/><path d="M-2.1 -5.5L-1.6 -8H1.6L2.1 -5.5Z" transform="rotate(270)" fill="#2b2b2b"/><path d="M-2.1 -5.5L-1.6 -8H1.6L2.1 -5.5Z" transform="rotate(315)" fill="#2b2b2b"/><circle r="6.2" fill="#2b2b2b"/><circle r="2.9" fill="#fff"/></g></svg><svg class="b" style="left:402.0px;top:449.0px;" width="18" height="18" viewBox="0 0 18 18"><circle cx="9" cy="9" r="7.9" fill="none" stroke="#2a2a2a" stroke-width="1.6"/><path d="M9 4.2V9.4L12 11.2" fill="none" stroke="#2a2a2a" stroke-width="1.6"/></svg><svg class="b" style="left:425.0px;top:448.0px;" width="20" height="20" viewBox="0 0 20 20"><circle cx="10" cy="10" r="9.25" fill="none" stroke="#029a80" stroke-width="1.4"/><path d="M7.00 5.90L13.60 10L7.00 14.10Z" fill="#029a80"/></svg><svg class="b" style="left:450.0px;top:451.0px;" width="18" height="14" viewBox="0 0 18 14"><rect x="0.8" y="0.8" width="16.4" height="12.4" rx="1.6" fill="none" stroke="#2a2a2a" stroke-width="1.5"/><path d="M6 4.1H14.4M6 7H14.4M6 9.9H14.4" stroke="#2a2a2a" stroke-width="1.4"/><path d="M3.3 4.1H4.7M3.3 7H4.7M3.3 9.9H4.7" stroke="#2a2a2a" stroke-width="1.4"/></svg><svg class="b" style="left:474.8px;top:449.8px;" width="16.4" height="16.4" viewBox="0 0 16.4 16.4"><circle cx="8.2" cy="8.2" r="7.50" fill="none" stroke="#2a2a2a" stroke-width="1.4"/><path d="M8.2 6.97V11.99" stroke="#2a2a2a" stroke-width="1.43"/><circle cx="8.2" cy="4.61" r="0.92" fill="#2a2a2a"/></svg><div class="b" style="left:497.0px;top:451.8px;width:12.2px;height:12.2px;background:#029a80"></div><div class="b" style="left:513.0px;top:451.8px;width:12.2px;height:12.2px;background:#029a80"></div><div class="b" style="left:529.0px;top:451.8px;width:12.2px;height:12.2px;background:#029a80"></div><div class="b" style="left:545.0px;top:451.8px;width:12.2px;height:12.2px;background:#029a80"></div><div class="b" style="left:561.0px;top:451.8px;width:12.2px;height:12.2px;background:#029a80"></div><div class="t" style="left:577.3px;top:448px;font-size:14px;line-height:20px;font-weight:400;color:#222428;letter-spacing:-0.008px;">daily_partition_row_count_anomaly</div><div class="t" style="left:577.3px;top:465px;font-size:11px;line-height:15px;font-weight:400;color:#222428;letter-spacing:-0.022px;">Consistency</div><div class="b" style="left:945.0px;top:370.0px;width:112.0px;height:32.0px;background:#ebe51e;border-radius:7px"></div><div class="t" style="left:960.5px;top:377px;font-size:14px;line-height:20px;font-weight:400;color:#fff;letter-spacing:-0.042px;">Add Warning</div><div class="t" style="left:1176.3px;top:358px;font-size:14px;line-height:20px;font-weight:400;color:#222428;letter-spacing:-0.024px;">min_count</div><svg class="b" style="left:1246.3px;top:361.3px;" width="13.4" height="13.4" viewBox="0 0 13.4 13.4"><circle cx="6.7" cy="6.7" r="6.10" fill="none" stroke="#333" stroke-width="1.2"/><path d="M6.7 5.70V9.80" stroke="#333" stroke-width="1.21"/><circle cx="6.7" cy="3.77" r="0.78" fill="#333"/></svg><svg class="b" style="left:1144.0px;top:383.8px;" width="24" height="24" viewBox="0 0 24 24"><circle cx="12" cy="12" r="12" fill="#ff9800"/><path d="M7.3 7.3L16.7 16.7M16.7 7.3L7.3 16.7" stroke="#fff" stroke-width="1.9" fill="none"/></svg><div class="b" style="left:1176.0px;top:380.0px;width:120.0px;height:32.0px;background:#fff;border:1px solid #dcdde0;border-radius:5px"></div><div class="t" style="left:1189.5px;top:388px;font-size:12px;line-height:17px;font-weight:400;color:#222428;letter-spacing:0.000px;">500</div><div class="b" style="left:1393.0px;top:370.0px;width:92.0px;height:32.0px;background:#e3170a;border-radius:7px"></div><div class="t" style="left:1409.0px;top:377px;font-size:14px;line-height:20px;font-weight:400;color:#fff;letter-spacing:0.008px;">Add Fatal</div><div class="t" style="left:953.6px;top:430px;font-size:14px;line-height:20px;font-weight:400;color:#222428;letter-spacing:-0.050px;">anomaly_percent</div><svg class="b" style="left:1065.9px;top:433.2px;" width="13.4" height="13.4" viewBox="0 0 13.4 13.4"><circle cx="6.7" cy="6.7" r="6.10" fill="none" stroke="#333" stroke-width="1.2"/><path d="M6.7 5.70V9.80" stroke="#333" stroke-width="1.21"/><circle cx="6.7" cy="3.77" r="0.78" fill="#333"/></svg><svg class="b" style="left:921.1px;top:456.1px;" width="24" height="24" viewBox="0 0 24 24"><circle cx="12" cy="12" r="12" fill="#ebe51e"/><path d="M7.3 7.3L16.7 16.7M16.7 7.3L7.3 16.7" stroke="#fff" stroke-width="1.9" fill="none"/></svg><div class="b" style="left:953.0px;top:452.0px;width:120.0px;height:32.0px;background:#fff;border:1px solid #dcdde0;border-radius:5px"></div><div class="t" style="left:966.5px;top:460px;font-size:12px;line-height:17px;font-weight:400;color:#222428;letter-spacing:0.000px;">1</div><div class="t" style="left:1172.8px;top:430px;font-size:14px;line-height:20px;font-weight:400;color:#222428;letter-spacing:-0.015px;">anomaly_percent</div><svg class="b" style="left:1284.9px;top:433.2px;" width="13.4" height="13.4" viewBox="0 0 13.4 13.4"><circle cx="6.7" cy="6.7" r="6.10" fill="none" stroke="#333" stroke-width="1.2"/><path d="M6.7 5.70V9.80" stroke="#333" stroke-width="1.21"/><circle cx="6.7" cy="3.77" r="0.78" fill="#333"/></svg><svg class="b" style="left:1140.0px;top:456.1px;" width="24" height="24" viewBox="0 0 24 24"><circle cx="12" cy="12" r="12" fill="#ff9800"/><path d="M7.3 7.3L16.7 16.7M16.7 7.3L7.3 16.7" stroke="#fff" stroke-width="1.9" fill="none"/></svg><div class="b" style="left:1172.0px;top:452.0px;width:120.0px;height:32.0px;background:#fff;border:1px solid #dcdde0;border-radius:5px"></div><div class="t" style="left:1185.5px;top:460px;font-size:12px;line-height:17px;font-weight:400;color:#222428;letter-spacing:0.000px;">0.5</div><div class="t" style="left:1392.3px;top:430px;font-size:14px;line-height:20px;font-weight:400;color:#222428;letter-spacing:-0.050px;">anomaly_percent</div><svg class="b" style="left:1504.1px;top:433.2px;" width="13.4" height="13.4" viewBox="0 0 13.4 13.4"><circle cx="6.7" cy="6.7" r="6.10" fill="none" stroke="#333" stroke-width="1.2"/><path d="M6.7 5.70V9.80" stroke="#333" stroke-width="1.21"/><circle cx="6.7" cy="3.77" r="0.78" fill="#333"/></svg><svg class="b" style="left:1360.0px;top:456.1px;" width="24" height="24" viewBox="0 0 24 24"><circle cx="12" cy="12" r="12" fill="#e3170a"/><path d="M7.3 7.3L16.7 16.7M16.7 7.3L7.3 16.7" stroke="#fff" stroke-width="1.9" fill="none"/></svg><div class="b" style="left:1392.0px;top:452.0px;width:120.0px;height:32.0px;background:#fff;border:1px solid #dcdde0;border-radius:5px"></div><div class="t" style="left:1405.0px;top:460px;font-size:12px;line-height:17px;font-weight:400;color:#222428;letter-spacing:0.000px;">0.01</div></section>
<section class="results"><div class="b" style="left:305.0px;top:511.0px;width:1210.0px;height:586.0px;background:#fff;border:1px solid #939dab"></div><div class="b" style="left:323.0px;top:536.0px;width:156.0px;height:34.0px;background:#e4f6f5;border-bottom:2px solid #029a80"></div><div class="t" style="left:355.6px;top:543px;font-size:14px;line-height:20px;font-weight:700;color:#222428;letter-spacing:-0.094px;">Check results</div><div class="t" style="left:511.2px;top:542px;font-size:14px;line-height:20px;font-weight:400;color:#222428;letter-spacing:-0.067px;">Sensor readouts</div><div class="t" style="left:678.0px;top:542px;font-size:14px;line-height:20px;font-weight:400;color:#222428;letter-spacing:-0.062px;">Execution errors</div><div class="b" style="left:1410.0px;top:528.0px;width:40.0px;height:40.0px;background:#f5f5f5;border-radius:20px"></div><svg class="b" style="left:1421.0px;top:539.0px;" width="18.0" height="18.0" viewBox="0 0 18 18"><g fill="none" stroke="#2a2a2c" stroke-width="1.8" stroke-linejoin="round"><path d="M0.2 4.1H17.8"/><path d="M5.6 3.8V0.9H12.4V3.8"/><path d="M2.3 4.4L3.9 17.1H14.1L15.7 4.4"/></g></svg><div class="b" style="left:1458.0px;top:528.0px;width:40.0px;height:40.0px;background:#f5f5f5;border-radius:20px"></div><svg class="b" style="left:1472.8px;top:542.9px;" width="10.4" height="10.4" viewBox="0 0 10.4 10.4"><path d="M0.7 0.7L9.700000000000001 9.700000000000001M9.700000000000001 0.7L0.7 9.700000000000001" stroke="#2a2a2a" stroke-width="1.6" fill="none"/></svg><div class="t" style="left:323.0px;top:598px;font-size:14px;line-height:20px;font-weight:400;color:#222428;letter-spacing:0.010px;">Data group (time series)</div><div class="b" style="left:489.0px;top:590.0px;width:132.0px;height:36.0px;background:#fff;border:1px solid #d8dadd;border-radius:4px"></div><div class="t" style="left:506.8px;top:598px;font-size:14px;line-height:20px;font-weight:400;color:#222428;letter-spacing:-0.105px;">no grouping</div><svg class="b" style="left:600.0px;top:606.3px;" width="8" height="5.0" viewBox="0 0 8 5.0"><path d="M0.8 0.8L4.0 4.0L7.2 0.8" fill="none" stroke="#222" stroke-width="1.6"/></svg><div class="t" style="left:653.5px;top:598px;font-size:14px;line-height:20px;font-weight:400;color:#222428;letter-spacing:-0.280px;">Month</div><div class="b" style="left:708.0px;top:590.0px;width:146.0px;height:36.0px;background:#fff;border:1px solid #d8dadd;border-radius:4px"></div><div class="t" style="left:725.5px;top:598px;font-size:14px;line-height:20px;font-weight:400;color:#222428;letter-spacing:-0.103px;">Last 3 months</div><svg class="b" style="left:833.3px;top:606.3px;" width="8" height="5.0" viewBox="0 0 8 5.0"><path d="M0.8 0.8L4.0 4.0L7.2 0.8" fill="none" stroke="#222" stroke-width="1.6"/></svg><div class="b" style="left:886.0px;top:592.0px;width:32.0px;height:32.0px;background:#fff;border:1px solid #029a80;border-radius:8px;box-shadow:0 2px 6px rgba(120,170,230,0.22)"></div><svg class="b" style="left:894.0px;top:601.0px;" width="16" height="14" viewBox="0 0 16 14"><rect x="0" y="0" width="16" height="14" rx="0.8" fill="#029a80"/><rect x="1.3" y="3.0" width="3.7" height="2.6" fill="#fff"/><rect x="1.3" y="6.6" width="3.7" height="2.6" fill="#fff"/><rect x="1.3" y="10.3" width="3.7" height="2.4" fill="#fff"/><rect x="6.2" y="3.0" width="3.6" height="2.6" fill="#fff"/><rect x="6.2" y="6.6" width="3.6" height="2.6" fill="#fff"/><rect x="6.2" y="10.3" width="3.6" height="2.4" fill="#fff"/><rect x="11" y="3.0" width="3.7" height="2.6" fill="#fff"/><rect x="11" y="6.6" width="3.7" height="2.6" fill="#fff"/><rect x="11" y="10.3" width="3.7" height="2.4" fill="#fff"/></svg><div class="b" style="left:934.0px;top:592.0px;width:32.0px;height:32.0px;background:#029a80;border-radius:8px;box-shadow:0 2px 6px rgba(120,170,230,0.22)"></div><svg class="b" style="left:941.6px;top:601.2px;" width="17" height="14" viewBox="0 0 17 14"><path d="M1 0V10.2Q1 12.6 3.4 12.6H16" fill="none" stroke="#fff" stroke-width="2"/><path d="M3.8 8.6L7.8 4.3L10.1 6.5L14.8 2.5" fill="none" stroke="#fff" stroke-width="1.6"/></svg>
<div class="chart"><svg class="b" style="left:0;top:0" width="1574" height="1106" viewBox="0 0 1574 1106"><path d="M359.4 711.5H1493.2" stroke="#dddddd" stroke-width="1"/><path d="M359.4 738.5H1493.2" stroke="#dddddd" stroke-width="1"/><path d="M359.4 764.5H1493.2" stroke="#dddddd" stroke-width="1"/><path d="M359.4 790.5H1493.2" stroke="#dddddd" stroke-width="1"/><path d="M359.4 817.5H1493.2" stroke="#dddddd" stroke-width="1"/><path d="M359.4 843.5H1493.2" stroke="#dddddd" stroke-width="1"/><path d="M359.4 869.5H1493.2" stroke="#dddddd" stroke-width="1"/><path d="M359.4 896.5H1493.2" stroke="#dddddd" stroke-width="1"/><path d="M359.4 922.5H1493.2" stroke="#dddddd" stroke-width="1"/><path d="M359.4 949.5H1493.2" stroke="#dddddd" stroke-width="1"/><path d="M359.4 975.5H1493.2" stroke="#dddddd" stroke-width="1"/><path d="M367.5 711.8V983.4" stroke="#dddddd" stroke-width="1"/><path d="M393.5 711.8V983.4" stroke="#dddddd" stroke-width="1"/><path d="M419.5 711.8V983.4" stroke="#dddddd" stroke-width="1"/><path d="M445.5 711.8V983.4" stroke="#dddddd" stroke-width="1"/><path d="M470.5 711.8V983.4" stroke="#dddddd" stroke-width="1"/><path d="M496.5 711.8V983.4" stroke="#dddddd" stroke-width="1"/><path d="M522.5 711.8V983.4" stroke="#dddddd" stroke-width="1"/><path d="M548.5 711.8V983.4" stroke="#dddddd" stroke-width="1"/><path d="M574.5 711.8V983.4" stroke="#dddddd" stroke-width="1"/><path d="M600.5 711.8V983.4" stroke="#dddddd" stroke-width="1"/><path d="M626.5 711.8V983.4" stroke="#dddddd" stroke-width="1"/><path d="M652.5 711.8V983.4" stroke="#dddddd" stroke-width="1"/><path d="M677.5 711.8V983.4" stroke="#dddddd" stroke-width="1"/><path d="M703.5 711.8V983.4" stroke="#dddddd" stroke-width="1"/><path d="M729.5 711.8V983.4" stroke="#dddddd" stroke-width="1"/><path d="M755.5 711.8V983.4" stroke="#dddddd" stroke-width="1"/><path d="M781.5 711.8V983.4" stroke="#dddddd" stroke-width="1"/><path d="M807.5 711.8V983.4" stroke="#dddddd" stroke-width="1"/><path d="M833.5 711.8V983.4" stroke="#dddddd" stroke-width="1"/><path d="M859.5 711.8V983.4" stroke="#dddddd" stroke-width="1"/><path d="M885.5 711.8V983.4" stroke="#dddddd" stroke-width="1"/><path d="M910.5 711.8V983.4" stroke="#dddddd" stroke-width="1"/><path d="M936.5 711.8V983.4" stroke="#dddddd" stroke-width="1"/><path d="M962.5 711.8V983.4" stroke="#dddddd" stroke-width="1"/><path d="M988.5 711.8V983.4" stroke="#dddddd" stroke-width="1"/><path d="M1014.5 711.8V983.4" stroke="#dddddd" stroke-width="1"/><path d="M1040.5 711.8V983.4" stroke="#dddddd" stroke-width="1"/><path d="M1066.5 711.8V983.4" stroke="#dddddd" stroke-width="1"/><path d="M1092.5 711.8V983.4" stroke="#dddddd" stroke-width="1"/><path d="M1117.5 711.8V983.4" stroke="#dddddd" stroke-width="1"/><path d="M1143.5 711.8V983.4" stroke="#dddddd" stroke-width="1"/><path d="M1169.5 711.8V983.4" stroke="#dddddd" stroke-width="1"/><path d="M1195.5 711.8V983.4" stroke="#dddddd" stroke-width="1"/><path d="M1221.5 711.8V983.4" stroke="#dddddd" stroke-width="1"/><path d="M1247.5 711.8V983.4" stroke="#dddddd" stroke-width="1"/><path d="M1273.5 711.8V983.4" stroke="#dddddd" stroke-width="1"/><path d="M1299.5 711.8V983.4" stroke="#dddddd" stroke-width="1"/><path d="M1324.5 711.8V983.4" stroke="#dddddd" stroke-width="1"/><path d="M1350.5 711.8V983.4" stroke="#dddddd" stroke-width="1"/><path d="M1376.5 711.8V983.4" stroke="#dddddd" stroke-width="1"/><path d="M1402.5 711.8V983.4" stroke="#dddddd" stroke-width="1"/><path d="M1428.5 711.8V983.4" stroke="#dddddd" stroke-width="1"/><path d="M1454.5 711.8V983.4" stroke="#dddddd" stroke-width="1"/><path d="M1480.5 711.8V983.4" stroke="#dddddd" stroke-width="1"/><polyline points="367.4,837.7 380.3,837.4 393.3,837.1 406.2,836.9 419.2,836.6 432.1,836.4 445.0,836.4 458.0,836.5 470.9,836.6 483.9,836.7 496.8,836.7 509.7,836.8 522.7,836.9 535.6,836.9 548.6,837.0 561.5,837.1 574.4,837.1 587.4,837.2 600.3,837.3 613.3,837.5 626.2,837.8 639.1,838.1 652.1,838.3 665.0,839.3 678.0,840.3 690.9,841.0 703.8,841.7 716.8,842.4 729.7,842.6 742.7,842.8 755.6,842.9 768.5,843.0 781.5,843.1 794.4,843.1 807.4,843.2 820.3,843.3 833.2,843.3 846.2,843.4 859.1,843.5 872.1,843.5 885.0,843.6 897.9,843.7 910.9,843.8 923.8,843.8 936.8,843.9 949.7,844.0 962.7,844.1 975.6,844.2 988.5,844.3 1001.5,844.6 1014.4,845.0 1027.4,845.4 1040.3,845.8 1053.2,846.1 1066.2,846.5 1079.1,846.9 1092.1,847.2 1105.0,847.6 1117.9,847.9 1130.9,848.3 1143.8,848.6 1156.8,848.9 1169.7,849.3 1182.6,849.5 1195.6,849.7 1208.5,849.9 1221.5,850.1 1234.4,850.3 1247.3,850.5 1260.3,850.7 1273.2,850.8 1286.2,851.0 1299.1,851.2 1312.0,851.4 1325.0,851.6 1337.9,851.7 1350.9,851.9 1363.8,852.2 1376.7,852.6 1389.7,852.9 1402.6,853.2 1415.6,853.4 1428.5,853.7 1441.4,853.9 1454.4,854.1 1467.3,854.4 1480.3,854.6 1493.2,854.8" fill="none" stroke="#c9c9ce" stroke-width="3"/><circle cx="367.4" cy="837.7" r="3.4" fill="#c9c9ce"/><circle cx="380.3" cy="837.4" r="3.4" fill="#c9c9ce"/><circle cx="393.3" cy="837.1" r="3.4" fill="#c9c9ce"/><circle cx="406.2" cy="836.9" r="3.4" fill="#c9c9ce"/><circle cx="419.2" cy="836.6" r="3.4" fill="#c9c9ce"/><circle cx="432.1" cy="836.4" r="3.4" fill="#c9c9ce"/><circle cx="445.0" cy="836.4" r="3.4" fill="#c9c9ce"/><circle cx="458.0" cy="836.5" r="3.4" fill="#c9c9ce"/><circle cx="470.9" cy="836.6" r="3.4" fill="#c9c9ce"/><circle cx="483.9" cy="836.7" r="3.4" fill="#c9c9ce"/><circle cx="496.8" cy="836.7" r="3.4" fill="#c9c9ce"/><circle cx="509.7" cy="836.8" r="3.4" fill="#c9c9ce"/><circle cx="522.7" cy="836.9" r="3.4" fill="#c9c9ce"/><circle cx="535.6" cy="836.9" r="3.4" fill="#c9c9ce"/><circle cx="548.6" cy="837.0" r="3.4" fill="#c9c9ce"/><circle cx="561.5" cy="837.1" r="3.4" fill="#c9c9ce"/><circle cx="574.4" cy="837.1" r="3.4" fill="#c9c9ce"/><circle cx="587.4" cy="837.2" r="3.4" fill="#c9c9ce"/><circle cx="600.3" cy="837.3" r="3.4" fill="#c9c9ce"/><circle cx="613.3" cy="837.5" r="3.4" fill="#c9c9ce"/><circle cx="626.2" cy="837.8" r="3.4" fill="#c9c9ce"/><circle cx="639.1" cy="838.1" r="3.4" fill="#c9c9ce"/><circle cx="652.1" cy="838.3" r="3.4" fill="#c9c9ce"/><circle cx="665.0" cy="839.3" r="3.4" fill="#c9c9ce"/><circle cx="678.0" cy="840.3" r="3.4" fill="#c9c9ce"/><circle cx="690.9" cy="841.0" r="3.4" fill="#c9c9ce"/><circle cx="703.8" cy="841.7" r="3.4" fill="#c9c9ce"/><circle cx="716.8" cy="842.4" r="3.4" fill="#c9c9ce"/><circle cx="729.7" cy="842.6" r="3.4" fill="#c9c9ce"/><circle cx="742.7" cy="842.8" r="3.4" fill="#c9c9ce"/><circle cx="755.6" cy="842.9" r="3.4" fill="#c9c9ce"/><circle cx="768.5" cy="843.0" r="3.4" fill="#c9c9ce"/><circle cx="781.5" cy="843.1" r="3.4" fill="#c9c9ce"/><circle cx="794.4" cy="843.1" r="3.4" fill="#c9c9ce"/><circle cx="807.4" cy="843.2" r="3.4" fill="#c9c9ce"/><circle cx="820.3" cy="843.3" r="3.4" fill="#c9c9ce"/><circle cx="833.2" cy="843.3" r="3.4" fill="#c9c9ce"/><circle cx="846.2" cy="843.4" r="3.4" fill="#c9c9ce"/><circle cx="859.1" cy="843.5" r="3.4" fill="#c9c9ce"/><circle cx="872.1" cy="843.5" r="3.4" fill="#c9c9ce"/><circle cx="885.0" cy="843.6" r="3.4" fill="#c9c9ce"/><circle cx="897.9" cy="843.7" r="3.4" fill="#c9c9ce"/><circle cx="910.9" cy="843.8" r="3.4" fill="#c9c9ce"/><circle cx="923.8" cy="843.8" r="3.4" fill="#c9c9ce"/><circle cx="936.8" cy="843.9" r="3.4" fill="#c9c9ce"/><circle cx="949.7" cy="844.0" r="3.4" fill="#c9c9ce"/><circle cx="962.7" cy="844.1" r="3.4" fill="#c9c9ce"/><circle cx="975.6" cy="844.2" r="3.4" fill="#c9c9ce"/><circle cx="988.5" cy="844.3" r="3.4" fill="#c9c9ce"/><circle cx="1001.5" cy="844.6" r="3.4" fill="#c9c9ce"/><circle cx="1014.4" cy="845.0" r="3.4" fill="#c9c9ce"/><circle cx="1027.4" cy="845.4" r="3.4" fill="#c9c9ce"/><circle cx="1040.3" cy="845.8" r="3.4" fill="#c9c9ce"/><circle cx="1053.2" cy="846.1" r="3.4" fill="#c9c9ce"/><circle cx="1066.2" cy="846.5" r="3.4" fill="#c9c9ce"/><circle cx="1079.1" cy="846.9" r="3.4" fill="#c9c9ce"/><circle cx="1092.1" cy="847.2" r="3.4" fill="#c9c9ce"/><circle cx="1105.0" cy="847.6" r="3.4" fill="#c9c9ce"/><circle cx="1117.9" cy="847.9" r="3.4" fill="#c9c9ce"/><circle cx="1130.9" cy="848.3" r="3.4" fill="#c9c9ce"/><circle cx="1143.8" cy="848.6" r="3.4" fill="#c9c9ce"/><circle cx="1156.8" cy="848.9" r="3.4" fill="#c9c9ce"/><circle cx="1169.7" cy="849.3" r="3.4" fill="#c9c9ce"/><circle cx="1182.6" cy="849.5" r="3.4" fill="#c9c9ce"/><circle cx="1195.6" cy="849.7" r="3.4" fill="#c9c9ce"/><circle cx="1208.5" cy="849.9" r="3.4" fill="#c9c9ce"/><circle cx="1221.5" cy="850.1" r="3.4" fill="#c9c9ce"/><circle cx="1234.4" cy="850.3" r="3.4" fill="#c9c9ce"/><circle cx="1247.3" cy="850.5" r="3.4" fill="#c9c9ce"/><circle cx="1260.3" cy="850.7" r="3.4" fill="#c9c9ce"/><circle cx="1273.2" cy="850.8" r="3.4" fill="#c9c9ce"/><circle cx="1286.2" cy="851.0" r="3.4" fill="#c9c9ce"/><circle cx="1299.1" cy="851.2" r="3.4" fill="#c9c9ce"/><circle cx="1312.0" cy="851.4" r="3.4" fill="#c9c9ce"/><circle cx="1325.0" cy="851.6" r="3.4" fill="#c9c9ce"/><circle cx="1337.9" cy="851.7" r="3.4" fill="#c9c9ce"/><circle cx="1350.9" cy="851.9" r="3.4" fill="#c9c9ce"/><circle cx="1363.8" cy="852.2" r="3.4" fill="#c9c9ce"/><circle cx="1376.7" cy="852.6" r="3.4" fill="#c9c9ce"/><circle cx="1389.7" cy="852.9" r="3.4" fill="#c9c9ce"/><circle cx="1402.6" cy="853.2" r="3.4" fill="#c9c9ce"/><circle cx="1415.6" cy="853.4" r="3.4" fill="#c9c9ce"/><circle cx="1428.5" cy="853.7" r="3.4" fill="#c9c9ce"/><circle cx="1441.4" cy="853.9" r="3.4" fill="#c9c9ce"/><circle cx="1454.4" cy="854.1" r="3.4" fill="#c9c9ce"/><circle cx="1467.3" cy="854.4" r="3.4" fill="#c9c9ce"/><circle cx="1480.3" cy="854.6" r="3.4" fill="#c9c9ce"/><circle cx="1493.2" cy="854.8" r="3.4" fill="#c9c9ce"/><polyline points="367.4,836.4 380.3,827.8 393.3,822.5 406.2,819.6 419.2,851.4 432.1,879.4 445.0,826.7 458.0,809.3 470.9,809.6 483.9,822.8 496.8,848.7 509.7,867.9 522.7,882.3 535.6,837.4 548.6,830.9 561.5,833.2 574.4,822.0 587.4,829.4 600.3,869.4 613.3,894.6 626.2,835.6 639.1,854.8 652.1,856.9 665.0,917.7 678.0,879.7 690.9,887.2 703.8,885.4 716.8,823.0 729.7,828.6 742.7,832.9 755.6,849.0 768.5,831.1 781.5,869.4 794.4,886.4 807.4,835.8 820.3,821.5 833.2,844.3 846.2,829.4 859.1,832.4 872.1,872.9 885.0,899.6 897.9,843.2 910.9,845.0 923.8,856.4 936.8,851.1 949.7,845.0 962.7,872.9 975.6,898.0 988.5,842.9 1001.5,858.1 1014.4,849.0 1027.4,875.5 1040.3,868.1 1053.2,898.3 1066.2,892.8 1079.1,894.9 1092.1,891.7 1105.0,860.7 1117.9,864.7 1130.9,896.7 1143.8,877.3 1156.8,825.9 1169.7,867.9 1182.6,865.7 1195.6,843.7 1208.5,852.4 1221.5,835.0 1234.4,865.2 1247.3,887.8 1260.3,824.6 1273.2,818.6 1286.2,835.0 1299.1,832.7 1312.0,834.5 1325.0,873.7 1337.9,907.8 1350.9,907.0 1363.8,853.2 1376.7,849.5 1389.7,832.7 1402.6,843.5 1415.6,877.1 1428.5,904.6 1441.4,840.3 1454.4,833.5 1467.3,846.2 1480.3,827.0 1493.2,825.3" fill="none" stroke="#2f9fe8" stroke-width="3" stroke-linejoin="round"/><circle cx="367.4" cy="836.4" r="3.5" fill="#2f9fe8"/><circle cx="380.3" cy="827.8" r="3.5" fill="#2f9fe8"/><circle cx="393.3" cy="822.5" r="3.5" fill="#2f9fe8"/><circle cx="406.2" cy="819.6" r="3.5" fill="#2f9fe8"/><circle cx="419.2" cy="851.4" r="3.5" fill="#2f9fe8"/><circle cx="432.1" cy="879.4" r="3.5" fill="#2f9fe8"/><circle cx="445.0" cy="826.7" r="3.5" fill="#2f9fe8"/><circle cx="458.0" cy="809.3" r="3.5" fill="#2f9fe8"/><circle cx="470.9" cy="809.6" r="3.5" fill="#2f9fe8"/><circle cx="483.9" cy="822.8" r="3.5" fill="#2f9fe8"/><circle cx="496.8" cy="848.7" r="3.5" fill="#2f9fe8"/><circle cx="509.7" cy="867.9" r="3.5" fill="#2f9fe8"/><circle cx="522.7" cy="882.3" r="3.5" fill="#2f9fe8"/><circle cx="535.6" cy="837.4" r="3.5" fill="#2f9fe8"/><circle cx="548.6" cy="830.9" r="3.5" fill="#2f9fe8"/><circle cx="561.5" cy="833.2" r="3.5" fill="#2f9fe8"/><circle cx="574.4" cy="822.0" r="3.5" fill="#2f9fe8"/><circle cx="587.4" cy="829.4" r="3.5" fill="#2f9fe8"/><circle cx="600.3" cy="869.4" r="3.5" fill="#2f9fe8"/><circle cx="613.3" cy="894.6" r="3.5" fill="#2f9fe8"/><circle cx="626.2" cy="835.6" r="3.5" fill="#2f9fe8"/><circle cx="639.1" cy="854.8" r="3.5" fill="#2f9fe8"/><circle cx="652.1" cy="856.9" r="3.5" fill="#2f9fe8"/><circle cx="665.0" cy="917.7" r="3.5" fill="#2f9fe8"/><circle cx="678.0" cy="879.7" r="3.5" fill="#2f9fe8"/><circle cx="690.9" cy="887.2" r="3.5" fill="#2f9fe8"/><circle cx="703.8" cy="885.4" r="3.5" fill="#2f9fe8"/><circle cx="716.8" cy="823.0" r="3.5" fill="#2f9fe8"/><circle cx="729.7" cy="828.6" r="3.5" fill="#2f9fe8"/><circle cx="742.7" cy="832.9" r="3.5" fill="#2f9fe8"/><circle cx="755.6" cy="849.0" r="3.5" fill="#2f9fe8"/><circle cx="768.5" cy="831.1" r="3.5" fill="#2f9fe8"/><circle cx="781.5" cy="869.4" r="3.5" fill="#2f9fe8"/><circle cx="794.4" cy="886.4" r="3.5" fill="#2f9fe8"/><circle cx="807.4" cy="835.8" r="3.5" fill="#2f9fe8"/><circle cx="820.3" cy="821.5" r="3.5" fill="#2f9fe8"/><circle cx="833.2" cy="844.3" r="3.5" fill="#2f9fe8"/><circle cx="846.2" cy="829.4" r="3.5" fill="#2f9fe8"/><circle cx="859.1" cy="832.4" r="3.5" fill="#2f9fe8"/><circle cx="872.1" cy="872.9" r="3.5" fill="#2f9fe8"/><circle cx="885.0" cy="899.6" r="3.5" fill="#2f9fe8"/><circle cx="897.9" cy="843.2" r="3.5" fill="#2f9fe8"/><circle cx="910.9" cy="845.0" r="3.5" fill="#2f9fe8"/><circle cx="923.8" cy="856.4" r="3.5" fill="#2f9fe8"/><circle cx="936.8" cy="851.1" r="3.5" fill="#2f9fe8"/><circle cx="949.7" cy="845.0" r="3.5" fill="#2f9fe8"/><circle cx="962.7" cy="872.9" r="3.5" fill="#2f9fe8"/><circle cx="975.6" cy="898.0" r="3.5" fill="#2f9fe8"/><circle cx="988.5" cy="842.9" r="3.5" fill="#2f9fe8"/><circle cx="1001.5" cy="858.1" r="3.5" fill="#2f9fe8"/><circle cx="1014.4" cy="849.0" r="3.5" fill="#2f9fe8"/><circle cx="1027.4" cy="875.5" r="3.5" fill="#2f9fe8"/><circle cx="1040.3" cy="868.1" r="3.5" fill="#2f9fe8"/><circle cx="1053.2" cy="898.3" r="3.5" fill="#2f9fe8"/><circle cx="1066.2" cy="892.8" r="3.5" fill="#2f9fe8"/><circle cx="1079.1" cy="894.9" r="3.5" fill="#2f9fe8"/><circle cx="1092.1" cy="891.7" r="3.5" fill="#2f9fe8"/><circle cx="1105.0" cy="860.7" r="3.5" fill="#2f9fe8"/><circle cx="1117.9" cy="864.7" r="3.5" fill="#2f9fe8"/><circle cx="1130.9" cy="896.7" r="3.5" fill="#2f9fe8"/><circle cx="1143.8" cy="877.3" r="3.5" fill="#2f9fe8"/><circle cx="1156.8" cy="825.9" r="3.5" fill="#2f9fe8"/><circle cx="1169.7" cy="867.9" r="3.5" fill="#2f9fe8"/><circle cx="1182.6" cy="865.7" r="3.5" fill="#2f9fe8"/><circle cx="1195.6" cy="843.7" r="3.5" fill="#2f9fe8"/><circle cx="1208.5" cy="852.4" r="3.5" fill="#2f9fe8"/><circle cx="1221.5" cy="835.0" r="3.5" fill="#2f9fe8"/><circle cx="1234.4" cy="865.2" r="3.5" fill="#2f9fe8"/><circle cx="1247.3" cy="887.8" r="3.5" fill="#2f9fe8"/><circle cx="1260.3" cy="824.6" r="3.5" fill="#2f9fe8"/><circle cx="1273.2" cy="818.6" r="3.5" fill="#2f9fe8"/><circle cx="1286.2" cy="835.0" r="3.5" fill="#2f9fe8"/><circle cx="1299.1" cy="832.7" r="3.5" fill="#2f9fe8"/><circle cx="1312.0" cy="834.5" r="3.5" fill="#2f9fe8"/><circle cx="1325.0" cy="873.7" r="3.5" fill="#2f9fe8"/><circle cx="1337.9" cy="907.8" r="3.5" fill="#2f9fe8"/><circle cx="1350.9" cy="907.0" r="3.5" fill="#2f9fe8"/><circle cx="1363.8" cy="853.2" r="3.5" fill="#2f9fe8"/><circle cx="1376.7" cy="849.5" r="3.5" fill="#2f9fe8"/><circle cx="1389.7" cy="832.7" r="3.5" fill="#2f9fe8"/><circle cx="1402.6" cy="843.5" r="3.5" fill="#2f9fe8"/><circle cx="1415.6" cy="877.1" r="3.5" fill="#2f9fe8"/><circle cx="1428.5" cy="904.6" r="3.5" fill="#2f9fe8"/><circle cx="1441.4" cy="840.3" r="3.5" fill="#2f9fe8"/><circle cx="1454.4" cy="833.5" r="3.5" fill="#2f9fe8"/><circle cx="1467.3" cy="846.2" r="3.5" fill="#2f9fe8"/><circle cx="1480.3" cy="827.0" r="3.5" fill="#2f9fe8"/><circle cx="1493.2" cy="825.3" r="3.5" fill="#2f9fe8"/><polygon points="367.4,711.8 1493.2,711.8 1493.2,752.1 1480.3,750.7 1467.3,750.7 1454.4,750.3 1441.4,750.3 1428.5,749.9 1415.6,749.9 1402.6,749.5 1389.7,748.8 1376.7,748.0 1363.8,747.6 1350.9,748.4 1337.9,748.8 1325.0,749.2 1312.0,749.5 1299.1,749.5 1286.2,749.5 1273.2,749.5 1260.3,749.5 1247.3,749.2 1234.4,749.2 1221.5,749.2 1208.5,747.3 1195.6,745.5 1182.6,744.4 1169.7,743.7 1156.8,743.3 1143.8,743.7 1130.9,743.3 1117.9,742.9 1105.0,742.5 1092.1,743.3 1079.1,744.0 1066.2,744.4 1053.2,745.8 1040.3,745.5 1027.4,744.8 1014.4,743.7 1001.5,743.7 988.5,742.9 975.6,744.4 962.7,743.7 949.7,743.3 936.8,742.1 923.8,741.9 910.9,740.7 897.9,741.5 885.0,742.1 872.1,741.9 859.1,741.6 846.2,741.5 833.2,741.1 820.3,740.7 807.4,740.7 794.4,740.3 781.5,740.0 768.5,739.6 755.6,739.2 742.7,738.7 729.7,738.2 716.8,738.2 703.8,738.4 690.9,739.2 678.0,740.1 665.0,746.6 652.1,745.5 639.1,744.8 626.2,743.8 613.3,746.2 600.3,747.0 587.4,746.2 574.4,745.8 561.5,745.1 548.6,744.4 535.6,743.3 522.7,745.1 509.7,745.5 496.8,744.4 483.9,743.6 470.9,744.8 458.0,745.8 445.0,745.5 432.1,747.0 419.2,746.1 406.2,745.5 393.3,745.3 380.3,744.8 367.4,743.3" fill="#ec661d"/><polygon points="367.4,743.3 380.3,744.8 393.3,745.3 406.2,745.5 419.2,746.1 432.1,747.0 445.0,745.5 458.0,745.8 470.9,744.8 483.9,743.6 496.8,744.4 509.7,745.5 522.7,745.1 535.6,743.3 548.6,744.4 561.5,745.1 574.4,745.8 587.4,746.2 600.3,747.0 613.3,746.2 626.2,743.8 639.1,744.8 652.1,745.5 665.0,746.6 678.0,740.1 690.9,739.2 703.8,738.4 716.8,738.2 729.7,738.2 742.7,738.7 755.6,739.2 768.5,739.6 781.5,740.0 794.4,740.3 807.4,740.7 820.3,740.7 833.2,741.1 846.2,741.5 859.1,741.6 872.1,741.9 885.0,742.1 897.9,741.5 910.9,740.7 923.8,741.9 936.8,742.1 949.7,743.3 962.7,743.7 975.6,744.4 988.5,742.9 1001.5,743.7 1014.4,743.7 1027.4,744.8 1040.3,745.5 1053.2,745.8 1066.2,744.4 1079.1,744.0 1092.1,743.3 1105.0,742.5 1117.9,742.9 1130.9,743.3 1143.8,743.7 1156.8,743.3 1169.7,743.7 1182.6,744.4 1195.6,745.5 1208.5,747.3 1221.5,749.2 1234.4,749.2 1247.3,749.2 1260.3,749.5 1273.2,749.5 1286.2,749.5 1299.1,749.5 1312.0,749.5 1325.0,749.2 1337.9,748.8 1350.9,748.4 1363.8,747.6 1376.7,748.0 1389.7,748.8 1402.6,749.5 1415.6,749.9 1428.5,749.9 1441.4,750.3 1454.4,750.3 1467.3,750.7 1480.3,750.7 1493.2,752.1 1493.2,779.5 1480.3,779.0 1467.3,778.9 1454.4,778.8 1441.4,778.5 1428.5,778.4 1415.6,778.1 1402.6,777.8 1389.7,777.0 1376.7,776.3 1363.8,776.0 1350.9,776.5 1337.9,776.9 1325.0,777.2 1312.0,777.2 1299.1,777.2 1286.2,777.2 1273.2,777.2 1260.3,777.2 1247.3,777.2 1234.4,777.2 1221.5,776.9 1208.5,776.0 1195.6,773.4 1182.6,771.9 1169.7,771.1 1156.8,770.7 1143.8,770.7 1130.9,770.5 1117.9,770.2 1105.0,770.1 1092.1,770.5 1079.1,770.7 1066.2,771.1 1053.2,771.9 1040.3,771.5 1027.4,771.1 1014.4,770.5 1001.5,770.5 988.5,770.1 975.6,771.1 962.7,770.5 949.7,770.1 936.8,769.3 923.8,768.7 910.9,767.9 897.9,768.6 885.0,768.9 872.1,768.7 859.1,768.6 846.2,768.3 833.2,768.2 820.3,767.9 807.4,767.8 794.4,767.4 781.5,767.3 768.5,767.0 755.6,766.8 742.7,766.4 729.7,766.0 716.8,766.0 703.8,766.0 690.9,766.4 678.0,767.0 665.0,771.1 652.1,770.5 639.1,770.2 626.2,769.7 613.3,771.1 600.3,771.5 587.4,771.1 574.4,770.7 561.5,770.5 548.6,769.8 535.6,769.1 522.7,770.5 509.7,770.6 496.8,769.8 483.9,769.5 470.9,770.1 458.0,770.7 445.0,770.7 432.1,771.6 419.2,771.0 406.2,770.6 393.3,770.5 380.3,769.8 367.4,769.1" fill="#fde1a0" fill-opacity="0.96"/><polygon points="367.4,769.1 380.3,769.8 393.3,770.5 406.2,770.6 419.2,771.0 432.1,771.6 445.0,770.7 458.0,770.7 470.9,770.1 483.9,769.5 496.8,769.8 509.7,770.6 522.7,770.5 535.6,769.1 548.6,769.8 561.5,770.5 574.4,770.7 587.4,771.1 600.3,771.5 613.3,771.1 626.2,769.7 639.1,770.2 652.1,770.5 665.0,771.1 678.0,767.0 690.9,766.4 703.8,766.0 716.8,766.0 729.7,766.0 742.7,766.4 755.6,766.8 768.5,767.0 781.5,767.3 794.4,767.4 807.4,767.8 820.3,767.9 833.2,768.2 846.2,768.3 859.1,768.6 872.1,768.7 885.0,768.9 897.9,768.6 910.9,767.9 923.8,768.7 936.8,769.3 949.7,770.1 962.7,770.5 975.6,771.1 988.5,770.1 1001.5,770.5 1014.4,770.5 1027.4,771.1 1040.3,771.5 1053.2,771.9 1066.2,771.1 1079.1,770.7 1092.1,770.5 1105.0,770.1 1117.9,770.2 1130.9,770.5 1143.8,770.7 1156.8,770.7 1169.7,771.1 1182.6,771.9 1195.6,773.4 1208.5,776.0 1221.5,776.9 1234.4,777.2 1247.3,777.2 1260.3,777.2 1273.2,777.2 1286.2,777.2 1299.1,777.2 1312.0,777.2 1325.0,777.2 1337.9,776.9 1350.9,776.5 1363.8,776.0 1376.7,776.3 1389.7,777.0 1402.6,777.8 1415.6,778.1 1428.5,778.4 1441.4,778.5 1454.4,778.8 1467.3,778.9 1480.3,779.0 1493.2,779.5 1493.2,785.2 1480.3,784.7 1467.3,784.6 1454.4,784.4 1441.4,784.2 1428.5,784.0 1415.6,783.8 1402.6,783.5 1389.7,782.7 1376.7,781.9 1363.8,781.7 1350.9,782.2 1337.9,782.6 1325.0,782.8 1312.0,782.8 1299.1,782.8 1286.2,782.8 1273.2,782.8 1260.3,782.8 1247.3,782.8 1234.4,782.8 1221.5,782.6 1208.5,781.7 1195.6,779.0 1182.6,777.6 1169.7,776.8 1156.8,776.4 1143.8,776.4 1130.9,776.1 1117.9,775.9 1105.0,775.7 1092.1,776.1 1079.1,776.4 1066.2,776.8 1053.2,777.6 1040.3,777.2 1027.4,776.8 1014.4,776.1 1001.5,776.1 988.5,775.7 975.6,776.8 962.7,776.1 949.7,775.7 936.8,774.9 923.8,774.4 910.9,773.6 897.9,774.3 885.0,774.5 872.1,774.4 859.1,774.3 846.2,774.0 833.2,773.9 820.3,773.6 807.4,773.5 794.4,773.1 781.5,773.0 768.5,772.7 755.6,772.4 742.7,772.0 729.7,771.6 716.8,771.6 703.8,771.6 690.9,772.0 678.0,772.7 665.0,776.8 652.1,776.1 639.1,775.9 626.2,775.3 613.3,776.8 600.3,777.2 587.4,776.8 574.4,776.4 561.5,776.1 548.6,775.5 535.6,774.8 522.7,776.1 509.7,776.3 496.8,775.5 483.9,775.2 470.9,775.7 458.0,776.4 445.0,776.4 432.1,777.3 419.2,776.6 406.2,776.3 393.3,776.1 380.3,775.5 367.4,774.8" fill="#fffde0" fill-opacity="0.9"/><polygon points="367.4,975.4 1493.2,975.4 1493.2,957.1 1480.3,957.1 1467.3,957.1 1454.4,957.1 1441.4,956.7 1428.5,955.1 1415.6,955.8 1402.6,955.8 1389.7,956.4 1376.7,956.9 1363.8,956.9 1350.9,954.0 1337.9,951.3 1325.0,951.3 1312.0,951.5 1299.1,951.8 1286.2,951.8 1273.2,951.5 1260.3,951.3 1247.3,950.9 1234.4,951.3 1221.5,951.7 1208.5,953.0 1195.6,953.3 1182.6,953.4 1169.7,953.5 1156.8,953.8 1143.8,953.8 1130.9,953.4 1117.9,953.3 1105.0,953.3 1092.1,952.2 1079.1,950.6 1066.2,948.8 1053.2,945.7 1040.3,945.5 1027.4,945.1 1014.4,945.5 1001.5,946.1 988.5,946.9 975.6,943.9 962.7,943.6 949.7,943.9 936.8,944.3 923.8,944.7 910.9,945.5 897.9,946.5 885.0,942.8 872.1,942.1 859.1,942.8 846.2,943.6 833.2,944.3 820.3,945.1 807.4,946.1 794.4,943.9 781.5,943.6 768.5,944.3 755.6,945.1 742.7,946.1 729.7,947.6 716.8,948.8 703.8,945.7 690.9,943.2 678.0,939.6 665.0,931.4 652.1,931.1 639.1,932.6 626.2,933.2 613.3,927.7 600.3,926.6 587.4,927.7 574.4,928.5 561.5,929.3 548.6,930.3 535.6,931.8 522.7,927.7 509.7,926.2 496.8,926.6 483.9,927.7 470.9,928.5 458.0,928.9 445.0,929.9 432.1,925.6 419.2,926.2 406.2,927.4 393.3,928.9 380.3,930.3 367.4,932.6" fill="#ec661d"/><polygon points="367.4,932.6 380.3,930.3 393.3,928.9 406.2,927.4 419.2,926.2 432.1,925.6 445.0,929.9 458.0,928.9 470.9,928.5 483.9,927.7 496.8,926.6 509.7,926.2 522.7,927.7 535.6,931.8 548.6,930.3 561.5,929.3 574.4,928.5 587.4,927.7 600.3,926.6 613.3,927.7 626.2,933.2 639.1,932.6 652.1,931.1 665.0,931.4 678.0,939.6 690.9,943.2 703.8,945.7 716.8,948.8 729.7,947.6 742.7,946.1 755.6,945.1 768.5,944.3 781.5,943.6 794.4,943.9 807.4,946.1 820.3,945.1 833.2,944.3 846.2,943.6 859.1,942.8 872.1,942.1 885.0,942.8 897.9,946.5 910.9,945.5 923.8,944.7 936.8,944.3 949.7,943.9 962.7,943.6 975.6,943.9 988.5,946.9 1001.5,946.1 1014.4,945.5 1027.4,945.1 1040.3,945.5 1053.2,945.7 1066.2,948.8 1079.1,950.6 1092.1,952.2 1105.0,953.3 1117.9,953.3 1130.9,953.4 1143.8,953.8 1156.8,953.8 1169.7,953.5 1182.6,953.4 1195.6,953.3 1208.5,953.0 1221.5,951.7 1234.4,951.3 1247.3,950.9 1260.3,951.3 1273.2,951.5 1286.2,951.8 1299.1,951.8 1312.0,951.5 1325.0,951.3 1337.9,951.3 1350.9,954.0 1363.8,956.9 1376.7,956.9 1389.7,956.4 1402.6,955.8 1415.6,955.8 1428.5,955.1 1441.4,956.7 1454.4,957.1 1467.3,957.1 1480.3,957.1 1493.2,957.1 1493.2,928.1 1480.3,928.1 1467.3,928.1 1454.4,928.1 1441.4,927.8 1428.5,926.6 1415.6,927.0 1402.6,927.0 1389.7,927.4 1376.7,927.4 1363.8,927.4 1350.9,925.6 1337.9,924.1 1325.0,924.1 1312.0,924.1 1299.1,924.1 1286.2,924.1 1273.2,924.1 1260.3,924.1 1247.3,923.7 1234.4,924.1 1221.5,924.4 1208.5,924.8 1195.6,924.4 1182.6,924.4 1169.7,924.4 1156.8,924.8 1143.8,924.8 1130.9,923.7 1117.9,923.7 1105.0,923.7 1092.1,922.5 1079.1,921.1 1066.2,919.6 1053.2,917.8 1040.3,917.8 1027.4,917.4 1014.4,917.8 1001.5,917.8 988.5,918.2 975.6,916.0 962.7,916.0 949.7,916.4 936.8,916.7 923.8,917.1 910.9,917.4 897.9,917.8 885.0,915.6 872.1,915.6 859.1,915.6 846.2,916.0 833.2,916.4 820.3,916.7 807.4,917.1 794.4,916.0 781.5,916.0 768.5,916.4 755.6,916.7 742.7,917.4 729.7,918.2 716.8,918.6 703.8,917.1 690.9,915.6 678.0,913.5 665.0,907.9 652.1,907.5 639.1,906.5 626.2,906.7 613.3,903.2 600.3,902.8 587.4,903.4 574.4,903.8 561.5,904.6 548.6,905.3 535.6,905.7 522.7,903.2 509.7,902.4 496.8,902.4 483.9,903.2 470.9,903.8 458.0,904.2 445.0,904.9 432.1,902.0 419.2,902.4 406.2,903.2 393.3,904.4 380.3,905.3 367.4,906.5" fill="#fde1a0" fill-opacity="0.96"/><polygon points="367.4,906.5 380.3,905.3 393.3,904.4 406.2,903.2 419.2,902.4 432.1,902.0 445.0,904.9 458.0,904.2 470.9,903.8 483.9,903.2 496.8,902.4 509.7,902.4 522.7,903.2 535.6,905.7 548.6,905.3 561.5,904.6 574.4,903.8 587.4,903.4 600.3,902.8 613.3,903.2 626.2,906.7 639.1,906.5 652.1,907.5 665.0,907.9 678.0,913.5 690.9,915.6 703.8,917.1 716.8,918.6 729.7,918.2 742.7,917.4 755.6,916.7 768.5,916.4 781.5,916.0 794.4,916.0 807.4,917.1 820.3,916.7 833.2,916.4 846.2,916.0 859.1,915.6 872.1,915.6 885.0,915.6 897.9,917.8 910.9,917.4 923.8,917.1 936.8,916.7 949.7,916.4 962.7,916.0 975.6,916.0 988.5,918.2 1001.5,917.8 1014.4,917.8 1027.4,917.4 1040.3,917.8 1053.2,917.8 1066.2,919.6 1079.1,921.1 1092.1,922.5 1105.0,923.7 1117.9,923.7 1130.9,923.7 1143.8,924.8 1156.8,924.8 1169.7,924.4 1182.6,924.4 1195.6,924.4 1208.5,924.8 1221.5,924.4 1234.4,924.1 1247.3,923.7 1260.3,924.1 1273.2,924.1 1286.2,924.1 1299.1,924.1 1312.0,924.1 1325.0,924.1 1337.9,924.1 1350.9,925.6 1363.8,927.4 1376.7,927.4 1389.7,927.4 1402.6,927.0 1415.6,927.0 1428.5,926.6 1441.4,927.8 1454.4,928.1 1467.3,928.1 1480.3,928.1 1493.2,928.1 1493.2,922.2 1480.3,922.2 1467.3,922.2 1454.4,922.2 1441.4,921.9 1428.5,920.7 1415.6,921.1 1402.6,921.1 1389.7,921.5 1376.7,921.5 1363.8,921.5 1350.9,919.6 1337.9,918.2 1325.0,918.2 1312.0,918.2 1299.1,918.2 1286.2,918.2 1273.2,918.2 1260.3,918.2 1247.3,917.8 1234.4,918.2 1221.5,918.5 1208.5,918.9 1195.6,918.5 1182.6,918.5 1169.7,918.5 1156.8,918.9 1143.8,918.9 1130.9,917.8 1117.9,917.8 1105.0,917.8 1092.1,916.6 1079.1,915.2 1066.2,913.7 1053.2,911.9 1040.3,911.9 1027.4,911.5 1014.4,911.9 1001.5,911.9 988.5,912.3 975.6,910.0 962.7,910.0 949.7,910.4 936.8,910.8 923.8,911.2 910.9,911.5 897.9,911.9 885.0,909.6 872.1,909.6 859.1,909.6 846.2,910.0 833.2,910.4 820.3,910.8 807.4,911.2 794.4,910.0 781.5,910.0 768.5,910.4 755.6,910.8 742.7,911.5 729.7,912.3 716.8,912.7 703.8,911.2 690.9,909.6 678.0,907.5 665.0,902.0 652.1,901.6 639.1,900.5 626.2,900.8 613.3,897.2 600.3,896.8 587.4,897.5 574.4,897.9 561.5,898.7 548.6,899.4 535.6,899.7 522.7,897.2 509.7,896.5 496.8,896.5 483.9,897.2 470.9,897.9 458.0,898.3 445.0,899.0 432.1,896.1 419.2,896.5 406.2,897.2 393.3,898.4 380.3,899.4 367.4,900.5" fill="#fffde0" fill-opacity="0.9"/><defs><clipPath id="lb"><polygon points="367.4,743.3 380.3,744.8 393.3,745.3 406.2,745.5 419.2,746.1 432.1,747.0 445.0,745.5 458.0,745.8 470.9,744.8 483.9,743.6 496.8,744.4 509.7,745.5 522.7,745.1 535.6,743.3 548.6,744.4 561.5,745.1 574.4,745.8 587.4,746.2 600.3,747.0 613.3,746.2 626.2,743.8 639.1,744.8 652.1,745.5 665.0,746.6 678.0,740.1 690.9,739.2 703.8,738.4 716.8,738.2 729.7,738.2 742.7,738.7 755.6,739.2 768.5,739.6 781.5,740.0 794.4,740.3 807.4,740.7 820.3,740.7 833.2,741.1 846.2,741.5 859.1,741.6 872.1,741.9 885.0,742.1 897.9,741.5 910.9,740.7 923.8,741.9 936.8,742.1 949.7,743.3 962.7,743.7 975.6,744.4 988.5,742.9 1001.5,743.7 1014.4,743.7 1027.4,744.8 1040.3,745.5 1053.2,745.8 1066.2,744.4 1079.1,744.0 1092.1,743.3 1105.0,742.5 1117.9,742.9 1130.9,743.3 1143.8,743.7 1156.8,743.3 1169.7,743.7 1182.6,744.4 1195.6,745.5 1208.5,747.3 1221.5,749.2 1234.4,749.2 1247.3,749.2 1260.3,749.5 1273.2,749.5 1286.2,749.5 1299.1,749.5 1312.0,749.5 1325.0,749.2 1337.9,748.8 1350.9,748.4 1363.8,747.6 1376.7,748.0 1389.7,748.8 1402.6,749.5 1415.6,749.9 1428.5,749.9 1441.4,750.3 1454.4,750.3 1467.3,750.7 1480.3,750.7 1493.2,752.1 1493.2,785.2 1480.3,784.7 1467.3,784.6 1454.4,784.4 1441.4,784.2 1428.5,784.0 1415.6,783.8 1402.6,783.5 1389.7,782.7 1376.7,781.9 1363.8,781.7 1350.9,782.2 1337.9,782.6 1325.0,782.8 1312.0,782.8 1299.1,782.8 1286.2,782.8 1273.2,782.8 1260.3,782.8 1247.3,782.8 1234.4,782.8 1221.5,782.6 1208.5,781.7 1195.6,779.0 1182.6,777.6 1169.7,776.8 1156.8,776.4 1143.8,776.4 1130.9,776.1 1117.9,775.9 1105.0,775.7 1092.1,776.1 1079.1,776.4 1066.2,776.8 1053.2,777.6 1040.3,777.2 1027.4,776.8 1014.4,776.1 1001.5,776.1 988.5,775.7 975.6,776.8 962.7,776.1 949.7,775.7 936.8,774.9 923.8,774.4 910.9,773.6 897.9,774.3 885.0,774.5 872.1,774.4 859.1,774.3 846.2,774.0 833.2,773.9 820.3,773.6 807.4,773.5 794.4,773.1 781.5,773.0 768.5,772.7 755.6,772.4 742.7,772.0 729.7,771.6 716.8,771.6 703.8,771.6 690.9,772.0 678.0,772.7 665.0,776.8 652.1,776.1 639.1,775.9 626.2,775.3 613.3,776.8 600.3,777.2 587.4,776.8 574.4,776.4 561.5,776.1 548.6,775.5 535.6,774.8 522.7,776.1 509.7,776.3 496.8,775.5 483.9,775.2 470.9,775.7 458.0,776.4 445.0,776.4 432.1,777.3 419.2,776.6 406.2,776.3 393.3,776.1 380.3,775.5 367.4,774.8"/><polygon points="367.4,900.5 380.3,899.4 393.3,898.4 406.2,897.2 419.2,896.5 432.1,896.1 445.0,899.0 458.0,898.3 470.9,897.9 483.9,897.2 496.8,896.5 509.7,896.5 522.7,897.2 535.6,899.7 548.6,899.4 561.5,898.7 574.4,897.9 587.4,897.5 600.3,896.8 613.3,897.2 626.2,900.8 639.1,900.5 652.1,901.6 665.0,902.0 678.0,907.5 690.9,909.6 703.8,911.2 716.8,912.7 729.7,912.3 742.7,911.5 755.6,910.8 768.5,910.4 781.5,910.0 794.4,910.0 807.4,911.2 820.3,910.8 833.2,910.4 846.2,910.0 859.1,909.6 872.1,909.6 885.0,909.6 897.9,911.9 910.9,911.5 923.8,911.2 936.8,910.8 949.7,910.4 962.7,910.0 975.6,910.0 988.5,912.3 1001.5,911.9 1014.4,911.9 1027.4,911.5 1040.3,911.9 1053.2,911.9 1066.2,913.7 1079.1,915.2 1092.1,916.6 1105.0,917.8 1117.9,917.8 1130.9,917.8 1143.8,918.9 1156.8,918.9 1169.7,918.5 1182.6,918.5 1195.6,918.5 1208.5,918.9 1221.5,918.5 1234.4,918.2 1247.3,917.8 1260.3,918.2 1273.2,918.2 1286.2,918.2 1299.1,918.2 1312.0,918.2 1325.0,918.2 1337.9,918.2 1350.9,919.6 1363.8,921.5 1376.7,921.5 1389.7,921.5 1402.6,921.1 1415.6,921.1 1428.5,920.7 1441.4,921.9 1454.4,922.2 1467.3,922.2 1480.3,922.2 1493.2,922.2 1493.2,957.1 1480.3,957.1 1467.3,957.1 1454.4,957.1 1441.4,956.7 1428.5,955.1 1415.6,955.8 1402.6,955.8 1389.7,956.4 1376.7,956.9 1363.8,956.9 1350.9,954.0 1337.9,951.3 1325.0,951.3 1312.0,951.5 1299.1,951.8 1286.2,951.8 1273.2,951.5 1260.3,951.3 1247.3,950.9 1234.4,951.3 1221.5,951.7 1208.5,953.0 1195.6,953.3 1182.6,953.4 1169.7,953.5 1156.8,953.8 1143.8,953.8 1130.9,953.4 1117.9,953.3 1105.0,953.3 1092.1,952.2 1079.1,950.6 1066.2,948.8 1053.2,945.7 1040.3,945.5 1027.4,945.1 1014.4,945.5 1001.5,946.1 988.5,946.9 975.6,943.9 962.7,943.6 949.7,943.9 936.8,944.3 923.8,944.7 910.9,945.5 897.9,946.5 885.0,942.8 872.1,942.1 859.1,942.8 846.2,943.6 833.2,944.3 820.3,945.1 807.4,946.1 794.4,943.9 781.5,943.6 768.5,944.3 755.6,945.1 742.7,946.1 729.7,947.6 716.8,948.8 703.8,945.7 690.9,943.2 678.0,939.6 665.0,931.4 652.1,931.1 639.1,932.6 626.2,933.2 613.3,927.7 600.3,926.6 587.4,927.7 574.4,928.5 561.5,929.3 548.6,930.3 535.6,931.8 522.7,927.7 509.7,926.2 496.8,926.6 483.9,927.7 470.9,928.5 458.0,928.9 445.0,929.9 432.1,925.6 419.2,926.2 406.2,927.4 393.3,928.9 380.3,930.3 367.4,932.6"/></clipPath></defs><g clip-path="url(#lb)" opacity="0.4"><path d="M359.4 711.5H1493.2" stroke="#d9bf8c" stroke-width="1"/><path d="M359.4 738.5H1493.2" stroke="#d9bf8c" stroke-width="1"/><path d="M359.4 764.5H1493.2" stroke="#d9bf8c" stroke-width="1"/><path d="M359.4 790.5H1493.2" stroke="#d9bf8c" stroke-width="1"/><path d="M359.4 817.5H1493.2" stroke="#d9bf8c" stroke-width="1"/><path d="M359.4 843.5H1493.2" stroke="#d9bf8c" stroke-width="1"/><path d="M359.4 869.5H1493.2" stroke="#d9bf8c" stroke-width="1"/><path d="M359.4 896.5H1493.2" stroke="#d9bf8c" stroke-width="1"/><path d="M359.4 922.5H1493.2" stroke="#d9bf8c" stroke-width="1"/><path d="M359.4 949.5H1493.2" stroke="#d9bf8c" stroke-width="1"/><path d="M359.4 975.5H1493.2" stroke="#d9bf8c" stroke-width="1"/><path d="M367.5 711.8V983.4" stroke="#d9bf8c" stroke-width="1"/><path d="M393.5 711.8V983.4" stroke="#d9bf8c" stroke-width="1"/><path d="M419.5 711.8V983.4" stroke="#d9bf8c" stroke-width="1"/><path d="M445.5 711.8V983.4" stroke="#d9bf8c" stroke-width="1"/><path d="M470.5 711.8V983.4" stroke="#d9bf8c" stroke-width="1"/><path d="M496.5 711.8V983.4" stroke="#d9bf8c" stroke-width="1"/><path d="M522.5 711.8V983.4" stroke="#d9bf8c" stroke-width="1"/><path d="M548.5 711.8V983.4" stroke="#d9bf8c" stroke-width="1"/><path d="M574.5 711.8V983.4" stroke="#d9bf8c" stroke-width="1"/><path d="M600.5 711.8V983.4" stroke="#d9bf8c" stroke-width="1"/><path d="M626.5 711.8V983.4" stroke="#d9bf8c" stroke-width="1"/><path d="M652.5 711.8V983.4" stroke="#d9bf8c" stroke-width="1"/><path d="M677.5 711.8V983.4" stroke="#d9bf8c" stroke-width="1"/><path d="M703.5 711.8V983.4" stroke="#d9bf8c" stroke-width="1"/><path d="M729.5 711.8V983.4" stroke="#d9bf8c" stroke-width="1"/><path d="M755.5 711.8V983.4" stroke="#d9bf8c" stroke-width="1"/><path d="M781.5 711.8V983.4" stroke="#d9bf8c" stroke-width="1"/><path d="M807.5 711.8V983.4" stroke="#d9bf8c" stroke-width="1"/><path d="M833.5 711.8V983.4" stroke="#d9bf8c" stroke-width="1"/><path d="M859.5 711.8V983.4" stroke="#d9bf8c" stroke-width="1"/><path d="M885.5 711.8V983.4" stroke="#d9bf8c" stroke-width="1"/><path d="M910.5 711.8V983.4" stroke="#d9bf8c" stroke-width="1"/><path d="M936.5 711.8V983.4" stroke="#d9bf8c" stroke-width="1"/><path d="M962.5 711.8V983.4" stroke="#d9bf8c" stroke-width="1"/><path d="M988.5 711.8V983.4" stroke="#d9bf8c" stroke-width="1"/><path d="M1014.5 711.8V983.4" stroke="#d9bf8c" stroke-width="1"/><path d="M1040.5 711.8V983.4" stroke="#d9bf8c" stroke-width="1"/><path d="M1066.5 711.8V983.4" stroke="#d9bf8c" stroke-width="1"/><path d="M1092.5 711.8V983.4" stroke="#d9bf8c" stroke-width="1"/><path d="M1117.5 711.8V983.4" stroke="#d9bf8c" stroke-width="1"/><path d="M1143.5 711.8V983.4" stroke="#d9bf8c" stroke-width="1"/><path d="M1169.5 711.8V983.4" stroke="#d9bf8c" stroke-width="1"/><path d="M1195.5 711.8V983.4" stroke="#d9bf8c" stroke-width="1"/><path d="M1221.5 711.8V983.4" stroke="#d9bf8c" stroke-width="1"/><path d="M1247.5 711.8V983.4" stroke="#d9bf8c" stroke-width="1"/><path d="M1273.5 711.8V983.4" stroke="#d9bf8c" stroke-width="1"/><path d="M1299.5 711.8V983.4" stroke="#d9bf8c" stroke-width="1"/><path d="M1324.5 711.8V983.4" stroke="#d9bf8c" stroke-width="1"/><path d="M1350.5 711.8V983.4" stroke="#d9bf8c" stroke-width="1"/><path d="M1376.5 711.8V983.4" stroke="#d9bf8c" stroke-width="1"/><path d="M1402.5 711.8V983.4" stroke="#d9bf8c" stroke-width="1"/><path d="M1428.5 711.8V983.4" stroke="#d9bf8c" stroke-width="1"/><path d="M1454.5 711.8V983.4" stroke="#d9bf8c" stroke-width="1"/><path d="M1480.5 711.8V983.4" stroke="#d9bf8c" stroke-width="1"/></g><polyline points="367.4,743.3 380.3,744.8 393.3,745.3 406.2,745.5 419.2,746.1 432.1,747.0 445.0,745.5 458.0,745.8 470.9,744.8 483.9,743.6 496.8,744.4 509.7,745.5 522.7,745.1 535.6,743.3 548.6,744.4 561.5,745.1 574.4,745.8 587.4,746.2 600.3,747.0 613.3,746.2 626.2,743.8 639.1,744.8 652.1,745.5 665.0,746.6 678.0,740.1 690.9,739.2 703.8,738.4 716.8,738.2 729.7,738.2 742.7,738.7 755.6,739.2 768.5,739.6 781.5,740.0 794.4,740.3 807.4,740.7 820.3,740.7 833.2,741.1 846.2,741.5 859.1,741.6 872.1,741.9 885.0,742.1 897.9,741.5 910.9,740.7 923.8,741.9 936.8,742.1 949.7,743.3 962.7,743.7 975.6,744.4 988.5,742.9 1001.5,743.7 1014.4,743.7 1027.4,744.8 1040.3,745.5 1053.2,745.8 1066.2,744.4 1079.1,744.0 1092.1,743.3 1105.0,742.5 1117.9,742.9 1130.9,743.3 1143.8,743.7 1156.8,743.3 1169.7,743.7 1182.6,744.4 1195.6,745.5 1208.5,747.3 1221.5,749.2 1234.4,749.2 1247.3,749.2 1260.3,749.5 1273.2,749.5 1286.2,749.5 1299.1,749.5 1312.0,749.5 1325.0,749.2 1337.9,748.8 1350.9,748.4 1363.8,747.6 1376.7,748.0 1389.7,748.8 1402.6,749.5 1415.6,749.9 1428.5,749.9 1441.4,750.3 1454.4,750.3 1467.3,750.7 1480.3,750.7 1493.2,752.1" fill="none" stroke="#ee560f" stroke-width="2.4"/><circle cx="367.4" cy="743.3" r="3.3" fill="#ee560f"/><circle cx="380.3" cy="744.8" r="3.3" fill="#ee560f"/><circle cx="393.3" cy="745.3" r="3.3" fill="#ee560f"/><circle cx="406.2" cy="745.5" r="3.3" fill="#ee560f"/><circle cx="419.2" cy="746.1" r="3.3" fill="#ee560f"/><circle cx="432.1" cy="747.0" r="3.3" fill="#ee560f"/><circle cx="445.0" cy="745.5" r="3.3" fill="#ee560f"/><circle cx="458.0" cy="745.8" r="3.3" fill="#ee560f"/><circle cx="470.9" cy="744.8" r="3.3" fill="#ee560f"/><circle cx="483.9" cy="743.6" r="3.3" fill="#ee560f"/><circle cx="496.8" cy="744.4" r="3.3" fill="#ee560f"/><circle cx="509.7" cy="745.5" r="3.3" fill="#ee560f"/><circle cx="522.7" cy="745.1" r="3.3" fill="#ee560f"/><circle cx="535.6" cy="743.3" r="3.3" fill="#ee560f"/><circle cx="548.6" cy="744.4" r="3.3" fill="#ee560f"/><circle cx="561.5" cy="745.1" r="3.3" fill="#ee560f"/><circle cx="574.4" cy="745.8" r="3.3" fill="#ee560f"/><circle cx="587.4" cy="746.2" r="3.3" fill="#ee560f"/><circle cx="600.3" cy="747.0" r="3.3" fill="#ee560f"/><circle cx="613.3" cy="746.2" r="3.3" fill="#ee560f"/><circle cx="626.2" cy="743.8" r="3.3" fill="#ee560f"/><circle cx="639.1" cy="744.8" r="3.3" fill="#ee560f"/><circle cx="652.1" cy="745.5" r="3.3" fill="#ee560f"/><circle cx="665.0" cy="746.6" r="3.3" fill="#ee560f"/><circle cx="678.0" cy="740.1" r="3.3" fill="#ee560f"/><circle cx="690.9" cy="739.2" r="3.3" fill="#ee560f"/><circle cx="703.8" cy="738.4" r="3.3" fill="#ee560f"/><circle cx="716.8" cy="738.2" r="3.3" fill="#ee560f"/><circle cx="729.7" cy="738.2" r="3.3" fill="#ee560f"/><circle cx="742.7" cy="738.7" r="3.3" fill="#ee560f"/><circle cx="755.6" cy="739.2" r="3.3" fill="#ee560f"/><circle cx="768.5" cy="739.6" r="3.3" fill="#ee560f"/><circle cx="781.5" cy="740.0" r="3.3" fill="#ee560f"/><circle cx="794.4" cy="740.3" r="3.3" fill="#ee560f"/><circle cx="807.4" cy="740.7" r="3.3" fill="#ee560f"/><circle cx="820.3" cy="740.7" r="3.3" fill="#ee560f"/><circle cx="833.2" cy="741.1" r="3.3" fill="#ee560f"/><circle cx="846.2" cy="741.5" r="3.3" fill="#ee560f"/><circle cx="859.1" cy="741.6" r="3.3" fill="#ee560f"/><circle cx="872.1" cy="741.9" r="3.3" fill="#ee560f"/><circle cx="885.0" cy="742.1" r="3.3" fill="#ee560f"/><circle cx="897.9" cy="741.5" r="3.3" fill="#ee560f"/><circle cx="910.9" cy="740.7" r="3.3" fill="#ee560f"/><circle cx="923.8" cy="741.9" r="3.3" fill="#ee560f"/><circle cx="936.8" cy="742.1" r="3.3" fill="#ee560f"/><circle cx="949.7" cy="743.3" r="3.3" fill="#ee560f"/><circle cx="962.7" cy="743.7" r="3.3" fill="#ee560f"/><circle cx="975.6" cy="744.4" r="3.3" fill="#ee560f"/><circle cx="988.5" cy="742.9" r="3.3" fill="#ee560f"/><circle cx="1001.5" cy="743.7" r="3.3" fill="#ee560f"/><circle cx="1014.4" cy="743.7" r="3.3" fill="#ee560f"/><circle cx="1027.4" cy="744.8" r="3.3" fill="#ee560f"/><circle cx="1040.3" cy="745.5" r="3.3" fill="#ee560f"/><circle cx="1053.2" cy="745.8" r="3.3" fill="#ee560f"/><circle cx="1066.2" cy="744.4" r="3.3" fill="#ee560f"/><circle cx="1079.1" cy="744.0" r="3.3" fill="#ee560f"/><circle cx="1092.1" cy="743.3" r="3.3" fill="#ee560f"/><circle cx="1105.0" cy="742.5" r="3.3" fill="#ee560f"/><circle cx="1117.9" cy="742.9" r="3.3" fill="#ee560f"/><circle cx="1130.9" cy="743.3" r="3.3" fill="#ee560f"/><circle cx="1143.8" cy="743.7" r="3.3" fill="#ee560f"/><circle cx="1156.8" cy="743.3" r="3.3" fill="#ee560f"/><circle cx="1169.7" cy="743.7" r="3.3" fill="#ee560f"/><circle cx="1182.6" cy="744.4" r="3.3" fill="#ee560f"/><circle cx="1195.6" cy="745.5" r="3.3" fill="#ee560f"/><circle cx="1208.5" cy="747.3" r="3.3" fill="#ee560f"/><circle cx="1221.5" cy="749.2" r="3.3" fill="#ee560f"/><circle cx="1234.4" cy="749.2" r="3.3" fill="#ee560f"/><circle cx="1247.3" cy="749.2" r="3.3" fill="#ee560f"/><circle cx="1260.3" cy="749.5" r="3.3" fill="#ee560f"/><circle cx="1273.2" cy="749.5" r="3.3" fill="#ee560f"/><circle cx="1286.2" cy="749.5" r="3.3" fill="#ee560f"/><circle cx="1299.1" cy="749.5" r="3.3" fill="#ee560f"/><circle cx="1312.0" cy="749.5" r="3.3" fill="#ee560f"/><circle cx="1325.0" cy="749.2" r="3.3" fill="#ee560f"/><circle cx="1337.9" cy="748.8" r="3.3" fill="#ee560f"/><circle cx="1350.9" cy="748.4" r="3.3" fill="#ee560f"/><circle cx="1363.8" cy="747.6" r="3.3" fill="#ee560f"/><circle cx="1376.7" cy="748.0" r="3.3" fill="#ee560f"/><circle cx="1389.7" cy="748.8" r="3.3" fill="#ee560f"/><circle cx="1402.6" cy="749.5" r="3.3" fill="#ee560f"/><circle cx="1415.6" cy="749.9" r="3.3" fill="#ee560f"/><circle cx="1428.5" cy="749.9" r="3.3" fill="#ee560f"/><circle cx="1441.4" cy="750.3" r="3.3" fill="#ee560f"/><circle cx="1454.4" cy="750.3" r="3.3" fill="#ee560f"/><circle cx="1467.3" cy="750.7" r="3.3" fill="#ee560f"/><circle cx="1480.3" cy="750.7" r="3.3" fill="#ee560f"/><circle cx="1493.2" cy="752.1" r="3.3" fill="#ee560f"/><path d="M367.4 740.0A3.3 3.3 0 0 0 367.4 746.6Z" fill="#e5262a"/><path d="M1493.2 748.8A3.3 3.3 0 0 1 1493.2 755.4Z" fill="#e5262a"/><polyline points="367.4,932.6 380.3,930.3 393.3,928.9 406.2,927.4 419.2,926.2 432.1,925.6 445.0,929.9 458.0,928.9 470.9,928.5 483.9,927.7 496.8,926.6 509.7,926.2 522.7,927.7 535.6,931.8 548.6,930.3 561.5,929.3 574.4,928.5 587.4,927.7 600.3,926.6 613.3,927.7 626.2,933.2 639.1,932.6 652.1,931.1 665.0,931.4 678.0,939.6 690.9,943.2 703.8,945.7 716.8,948.8 729.7,947.6 742.7,946.1 755.6,945.1 768.5,944.3 781.5,943.6 794.4,943.9 807.4,946.1 820.3,945.1 833.2,944.3 846.2,943.6 859.1,942.8 872.1,942.1 885.0,942.8 897.9,946.5 910.9,945.5 923.8,944.7 936.8,944.3 949.7,943.9 962.7,943.6 975.6,943.9 988.5,946.9 1001.5,946.1 1014.4,945.5 1027.4,945.1 1040.3,945.5 1053.2,945.7 1066.2,948.8 1079.1,950.6 1092.1,952.2 1105.0,953.3 1117.9,953.3 1130.9,953.4 1143.8,953.8 1156.8,953.8 1169.7,953.5 1182.6,953.4 1195.6,953.3 1208.5,953.0 1221.5,951.7 1234.4,951.3 1247.3,950.9 1260.3,951.3 1273.2,951.5 1286.2,951.8 1299.1,951.8 1312.0,951.5 1325.0,951.3 1337.9,951.3 1350.9,954.0 1363.8,956.9 1376.7,956.9 1389.7,956.4 1402.6,955.8 1415.6,955.8 1428.5,955.1 1441.4,956.7 1454.4,957.1 1467.3,957.1 1480.3,957.1 1493.2,957.1" fill="none" stroke="#ee560f" stroke-width="2.4"/><circle cx="367.4" cy="932.6" r="3.3" fill="#ee560f"/><circle cx="380.3" cy="930.3" r="3.3" fill="#ee560f"/><circle cx="393.3" cy="928.9" r="3.3" fill="#ee560f"/><circle cx="406.2" cy="927.4" r="3.3" fill="#ee560f"/><circle cx="419.2" cy="926.2" r="3.3" fill="#ee560f"/><circle cx="432.1" cy="925.6" r="3.3" fill="#ee560f"/><circle cx="445.0" cy="929.9" r="3.3" fill="#ee560f"/><circle cx="458.0" cy="928.9" r="3.3" fill="#ee560f"/><circle cx="470.9" cy="928.5" r="3.3" fill="#ee560f"/><circle cx="483.9" cy="927.7" r="3.3" fill="#ee560f"/><circle cx="496.8" cy="926.6" r="3.3" fill="#ee560f"/><circle cx="509.7" cy="926.2" r="3.3" fill="#ee560f"/><circle cx="522.7" cy="927.7" r="3.3" fill="#ee560f"/><circle cx="535.6" cy="931.8" r="3.3" fill="#ee560f"/><circle cx="548.6" cy="930.3" r="3.3" fill="#ee560f"/><circle cx="561.5" cy="929.3" r="3.3" fill="#ee560f"/><circle cx="574.4" cy="928.5" r="3.3" fill="#ee560f"/><circle cx="587.4" cy="927.7" r="3.3" fill="#ee560f"/><circle cx="600.3" cy="926.6" r="3.3" fill="#ee560f"/><circle cx="613.3" cy="927.7" r="3.3" fill="#ee560f"/><circle cx="626.2" cy="933.2" r="3.3" fill="#ee560f"/><circle cx="639.1" cy="932.6" r="3.3" fill="#ee560f"/><circle cx="652.1" cy="931.1" r="3.3" fill="#ee560f"/><circle cx="665.0" cy="931.4" r="3.3" fill="#ee560f"/><circle cx="678.0" cy="939.6" r="3.3" fill="#ee560f"/><circle cx="690.9" cy="943.2" r="3.3" fill="#ee560f"/><circle cx="703.8" cy="945.7" r="3.3" fill="#ee560f"/><circle cx="716.8" cy="948.8" r="3.3" fill="#ee560f"/><circle cx="729.7" cy="947.6" r="3.3" fill="#ee560f"/><circle cx="742.7" cy="946.1" r="3.3" fill="#ee560f"/><circle cx="755.6" cy="945.1" r="3.3" fill="#ee560f"/><circle cx="768.5" cy="944.3" r="3.3" fill="#ee560f"/><circle cx="781.5" cy="943.6" r="3.3" fill="#ee560f"/><circle cx="794.4" cy="943.9" r="3.3" fill="#ee560f"/><circle cx="807.4" cy="946.1" r="3.3" fill="#ee560f"/><circle cx="820.3" cy="945.1" r="3.3" fill="#ee560f"/><circle cx="833.2" cy="944.3" r="3.3" fill="#ee560f"/><circle cx="846.2" cy="943.6" r="3.3" fill="#ee560f"/><circle cx="859.1" cy="942.8" r="3.3" fill="#ee560f"/><circle cx="872.1" cy="942.1" r="3.3" fill="#ee560f"/><circle cx="885.0" cy="942.8" r="3.3" fill="#ee560f"/><circle cx="897.9" cy="946.5" r="3.3" fill="#ee560f"/><circle cx="910.9" cy="945.5" r="3.3" fill="#ee560f"/><circle cx="923.8" cy="944.7" r="3.3" fill="#ee560f"/><circle cx="936.8" cy="944.3" r="3.3" fill="#ee560f"/><circle cx="949.7" cy="943.9" r="3.3" fill="#ee560f"/><circle cx="962.7" cy="943.6" r="3.3" fill="#ee560f"/><circle cx="975.6" cy="943.9" r="3.3" fill="#ee560f"/><circle cx="988.5" cy="946.9" r="3.3" fill="#ee560f"/><circle cx="1001.5" cy="946.1" r="3.3" fill="#ee560f"/><circle cx="1014.4" cy="945.5" r="3.3" fill="#ee560f"/><circle cx="1027.4" cy="945.1" r="3.3" fill="#ee560f"/><circle cx="1040.3" cy="945.5" r="3.3" fill="#ee560f"/><circle cx="1053.2" cy="945.7" r="3.3" fill="#ee560f"/><circle cx="1066.2" cy="948.8" r="3.3" fill="#ee560f"/><circle cx="1079.1" cy="950.6" r="3.3" fill="#ee560f"/><circle cx="1092.1" cy="952.2" r="3.3" fill="#ee560f"/><circle cx="1105.0" cy="953.3" r="3.3" fill="#ee560f"/><circle cx="1117.9" cy="953.3" r="3.3" fill="#ee560f"/><circle cx="1130.9" cy="953.4" r="3.3" fill="#ee560f"/><circle cx="1143.8" cy="953.8" r="3.3" fill="#ee560f"/><circle cx="1156.8" cy="953.8" r="3.3" fill="#ee560f"/><circle cx="1169.7" cy="953.5" r="3.3" fill="#ee560f"/><circle cx="1182.6" cy="953.4" r="3.3" fill="#ee560f"/><circle cx="1195.6" cy="953.3" r="3.3" fill="#ee560f"/><circle cx="1208.5" cy="953.0" r="3.3" fill="#ee560f"/><circle cx="1221.5" cy="951.7" r="3.3" fill="#ee560f"/><circle cx="1234.4" cy="951.3" r="3.3" fill="#ee560f"/><circle cx="1247.3" cy="950.9" r="3.3" fill="#ee560f"/><circle cx="1260.3" cy="951.3" r="3.3" fill="#ee560f"/><circle cx="1273.2" cy="951.5" r="3.3" fill="#ee560f"/><circle cx="1286.2" cy="951.8" r="3.3" fill="#ee560f"/><circle cx="1299.1" cy="951.8" r="3.3" fill="#ee560f"/><circle cx="1312.0" cy="951.5" r="3.3" fill="#ee560f"/><circle cx="1325.0" cy="951.3" r="3.3" fill="#ee560f"/><circle cx="1337.9" cy="951.3" r="3.3" fill="#ee560f"/><circle cx="1350.9" cy="954.0" r="3.3" fill="#ee560f"/><circle cx="1363.8" cy="956.9" r="3.3" fill="#ee560f"/><circle cx="1376.7" cy="956.9" r="3.3" fill="#ee560f"/><circle cx="1389.7" cy="956.4" r="3.3" fill="#ee560f"/><circle cx="1402.6" cy="955.8" r="3.3" fill="#ee560f"/><circle cx="1415.6" cy="955.8" r="3.3" fill="#ee560f"/><circle cx="1428.5" cy="955.1" r="3.3" fill="#ee560f"/><circle cx="1441.4" cy="956.7" r="3.3" fill="#ee560f"/><circle cx="1454.4" cy="957.1" r="3.3" fill="#ee560f"/><circle cx="1467.3" cy="957.1" r="3.3" fill="#ee560f"/><circle cx="1480.3" cy="957.1" r="3.3" fill="#ee560f"/><circle cx="1493.2" cy="957.1" r="3.3" fill="#ee560f"/><path d="M367.4 929.3A3.3 3.3 0 0 0 367.4 935.9Z" fill="#e5262a"/><path d="M1493.2 953.8A3.3 3.3 0 0 1 1493.2 960.4Z" fill="#e5262a"/><polyline points="367.4,769.1 380.3,769.8 393.3,770.5 406.2,770.6 419.2,771.0 432.1,771.6 445.0,770.7 458.0,770.7 470.9,770.1 483.9,769.5 496.8,769.8 509.7,770.6 522.7,770.5 535.6,769.1 548.6,769.8 561.5,770.5 574.4,770.7 587.4,771.1 600.3,771.5 613.3,771.1 626.2,769.7 639.1,770.2 652.1,770.5 665.0,771.1 678.0,767.0 690.9,766.4 703.8,766.0 716.8,766.0 729.7,766.0 742.7,766.4 755.6,766.8 768.5,767.0 781.5,767.3 794.4,767.4 807.4,767.8 820.3,767.9 833.2,768.2 846.2,768.3 859.1,768.6 872.1,768.7 885.0,768.9 897.9,768.6 910.9,767.9 923.8,768.7 936.8,769.3 949.7,770.1 962.7,770.5 975.6,771.1 988.5,770.1 1001.5,770.5 1014.4,770.5 1027.4,771.1 1040.3,771.5 1053.2,771.9 1066.2,771.1 1079.1,770.7 1092.1,770.5 1105.0,770.1 1117.9,770.2 1130.9,770.5 1143.8,770.7 1156.8,770.7 1169.7,771.1 1182.6,771.9 1195.6,773.4 1208.5,776.0 1221.5,776.9 1234.4,777.2 1247.3,777.2 1260.3,777.2 1273.2,777.2 1286.2,777.2 1299.1,777.2 1312.0,777.2 1325.0,777.2 1337.9,776.9 1350.9,776.5 1363.8,776.0 1376.7,776.3 1389.7,777.0 1402.6,777.8 1415.6,778.1 1428.5,778.4 1441.4,778.5 1454.4,778.8 1467.3,778.9 1480.3,779.0 1493.2,779.5" fill="none" stroke="#ff9a0f" stroke-width="3"/><circle cx="367.4" cy="769.1" r="3" fill="#ff9a0f" fill-opacity="0.35" stroke="#ff9a0f" stroke-width="1"/><circle cx="380.3" cy="769.8" r="3" fill="#ff9a0f" fill-opacity="0.35" stroke="#ff9a0f" stroke-width="1"/><circle cx="393.3" cy="770.5" r="3" fill="#ff9a0f" fill-opacity="0.35" stroke="#ff9a0f" stroke-width="1"/><circle cx="406.2" cy="770.6" r="3" fill="#ff9a0f" fill-opacity="0.35" stroke="#ff9a0f" stroke-width="1"/><circle cx="419.2" cy="771.0" r="3" fill="#ff9a0f" fill-opacity="0.35" stroke="#ff9a0f" stroke-width="1"/><circle cx="432.1" cy="771.6" r="3" fill="#ff9a0f" fill-opacity="0.35" stroke="#ff9a0f" stroke-width="1"/><circle cx="445.0" cy="770.7" r="3" fill="#ff9a0f" fill-opacity="0.35" stroke="#ff9a0f" stroke-width="1"/><circle cx="458.0" cy="770.7" r="3" fill="#ff9a0f" fill-opacity="0.35" stroke="#ff9a0f" stroke-width="1"/><circle cx="470.9" cy="770.1" r="3" fill="#ff9a0f" fill-opacity="0.35" stroke="#ff9a0f" stroke-width="1"/><circle cx="483.9" cy="769.5" r="3" fill="#ff9a0f" fill-opacity="0.35" stroke="#ff9a0f" stroke-width="1"/><circle cx="496.8" cy="769.8" r="3" fill="#ff9a0f" fill-opacity="0.35" stroke="#ff9a0f" stroke-width="1"/><circle cx="509.7" cy="770.6" r="3" fill="#ff9a0f" fill-opacity="0.35" stroke="#ff9a0f" stroke-width="1"/><circle cx="522.7" cy="770.5" r="3" fill="#ff9a0f" fill-opacity="0.35" stroke="#ff9a0f" stroke-width="1"/><circle cx="535.6" cy="769.1" r="3" fill="#ff9a0f" fill-opacity="0.35" stroke="#ff9a0f" stroke-width="1"/><circle cx="548.6" cy="769.8" r="3" fill="#ff9a0f" fill-opacity="0.35" stroke="#ff9a0f" stroke-width="1"/><circle cx="561.5" cy="770.5" r="3" fill="#ff9a0f" fill-opacity="0.35" stroke="#ff9a0f" stroke-width="1"/><circle cx="574.4" cy="770.7" r="3" fill="#ff9a0f" fill-opacity="0.35" stroke="#ff9a0f" stroke-width="1"/><circle cx="587.4" cy="771.1" r="3" fill="#ff9a0f" fill-opacity="0.35" stroke="#ff9a0f" stroke-width="1"/><circle cx="600.3" cy="771.5" r="3" fill="#ff9a0f" fill-opacity="0.35" stroke="#ff9a0f" stroke-width="1"/><circle cx="613.3" cy="771.1" r="3" fill="#ff9a0f" fill-opacity="0.35" stroke="#ff9a0f" stroke-width="1"/><circle cx="626.2" cy="769.7" r="3" fill="#ff9a0f" fill-opacity="0.35" stroke="#ff9a0f" stroke-width="1"/><circle cx="639.1" cy="770.2" r="3" fill="#ff9a0f" fill-opacity="0.35" stroke="#ff9a0f" stroke-width="1"/><circle cx="652.1" cy="770.5" r="3" fill="#ff9a0f" fill-opacity="0.35" stroke="#ff9a0f" stroke-width="1"/><circle cx="665.0" cy="771.1" r="3" fill="#ff9a0f" fill-opacity="0.35" stroke="#ff9a0f" stroke-width="1"/><circle cx="678.0" cy="767.0" r="3" fill="#ff9a0f" fill-opacity="0.35" stroke="#ff9a0f" stroke-width="1"/><circle cx="690.9" cy="766.4" r="3" fill="#ff9a0f" fill-opacity="0.35" stroke="#ff9a0f" stroke-width="1"/><circle cx="703.8" cy="766.0" r="3" fill="#ff9a0f" fill-opacity="0.35" stroke="#ff9a0f" stroke-width="1"/><circle cx="716.8" cy="766.0" r="3" fill="#ff9a0f" fill-opacity="0.35" stroke="#ff9a0f" stroke-width="1"/><circle cx="729.7" cy="766.0" r="3" fill="#ff9a0f" fill-opacity="0.35" stroke="#ff9a0f" stroke-width="1"/><circle cx="742.7" cy="766.4" r="3" fill="#ff9a0f" fill-opacity="0.35" stroke="#ff9a0f" stroke-width="1"/><circle cx="755.6" cy="766.8" r="3" fill="#ff9a0f" fill-opacity="0.35" stroke="#ff9a0f" stroke-width="1"/><circle cx="768.5" cy="767.0" r="3" fill="#ff9a0f" fill-opacity="0.35" stroke="#ff9a0f" stroke-width="1"/><circle cx="781.5" cy="767.3" r="3" fill="#ff9a0f" fill-opacity="0.35" stroke="#ff9a0f" stroke-width="1"/><circle cx="794.4" cy="767.4" r="3" fill="#ff9a0f" fill-opacity="0.35" stroke="#ff9a0f" stroke-width="1"/><circle cx="807.4" cy="767.8" r="3" fill="#ff9a0f" fill-opacity="0.35" stroke="#ff9a0f" stroke-width="1"/><circle cx="820.3" cy="767.9" r="3" fill="#ff9a0f" fill-opacity="0.35" stroke="#ff9a0f" stroke-width="1"/><circle cx="833.2" cy="768.2" r="3" fill="#ff9a0f" fill-opacity="0.35" stroke="#ff9a0f" stroke-width="1"/><circle cx="846.2" cy="768.3" r="3" fill="#ff9a0f" fill-opacity="0.35" stroke="#ff9a0f" stroke-width="1"/><circle cx="859.1" cy="768.6" r="3" fill="#ff9a0f" fill-opacity="0.35" stroke="#ff9a0f" stroke-width="1"/><circle cx="872.1" cy="768.7" r="3" fill="#ff9a0f" fill-opacity="0.35" stroke="#ff9a0f" stroke-width="1"/><circle cx="885.0" cy="768.9" r="3" fill="#ff9a0f" fill-opacity="0.35" stroke="#ff9a0f" stroke-width="1"/><circle cx="897.9" cy="768.6" r="3" fill="#ff9a0f" fill-opacity="0.35" stroke="#ff9a0f" stroke-width="1"/><circle cx="910.9" cy="767.9" r="3" fill="#ff9a0f" fill-opacity="0.35" stroke="#ff9a0f" stroke-width="1"/><circle cx="923.8" cy="768.7" r="3" fill="#ff9a0f" fill-opacity="0.35" stroke="#ff9a0f" stroke-width="1"/><circle cx="936.8" cy="769.3" r="3" fill="#ff9a0f" fill-opacity="0.35" stroke="#ff9a0f" stroke-width="1"/><circle cx="949.7" cy="770.1" r="3" fill="#ff9a0f" fill-opacity="0.35" stroke="#ff9a0f" stroke-width="1"/><circle cx="962.7" cy="770.5" r="3" fill="#ff9a0f" fill-opacity="0.35" stroke="#ff9a0f" stroke-width="1"/><circle cx="975.6" cy="771.1" r="3" fill="#ff9a0f" fill-opacity="0.35" stroke="#ff9a0f" stroke-width="1"/><circle cx="988.5" cy="770.1" r="3" fill="#ff9a0f" fill-opacity="0.35" stroke="#ff9a0f" stroke-width="1"/><circle cx="1001.5" cy="770.5" r="3" fill="#ff9a0f" fill-opacity="0.35" stroke="#ff9a0f" stroke-width="1"/><circle cx="1014.4" cy="770.5" r="3" fill="#ff9a0f" fill-opacity="0.35" stroke="#ff9a0f" stroke-width="1"/><circle cx="1027.4" cy="771.1" r="3" fill="#ff9a0f" fill-opacity="0.35" stroke="#ff9a0f" stroke-width="1"/><circle cx="1040.3" cy="771.5" r="3" fill="#ff9a0f" fill-opacity="0.35" stroke="#ff9a0f" stroke-width="1"/><circle cx="1053.2" cy="771.9" r="3" fill="#ff9a0f" fill-opacity="0.35" stroke="#ff9a0f" stroke-width="1"/><circle cx="1066.2" cy="771.1" r="3" fill="#ff9a0f" fill-opacity="0.35" stroke="#ff9a0f" stroke-width="1"/><circle cx="1079.1" cy="770.7" r="3" fill="#ff9a0f" fill-opacity="0.35" stroke="#ff9a0f" stroke-width="1"/><circle cx="1092.1" cy="770.5" r="3" fill="#ff9a0f" fill-opacity="0.35" stroke="#ff9a0f" stroke-width="1"/><circle cx="1105.0" cy="770.1" r="3" fill="#ff9a0f" fill-opacity="0.35" stroke="#ff9a0f" stroke-width="1"/><circle cx="1117.9" cy="770.2" r="3" fill="#ff9a0f" fill-opacity="0.35" stroke="#ff9a0f" stroke-width="1"/><circle cx="1130.9" cy="770.5" r="3" fill="#ff9a0f" fill-opacity="0.35" stroke="#ff9a0f" stroke-width="1"/><circle cx="1143.8" cy="770.7" r="3" fill="#ff9a0f" fill-opacity="0.35" stroke="#ff9a0f" stroke-width="1"/><circle cx="1156.8" cy="770.7" r="3" fill="#ff9a0f" fill-opacity="0.35" stroke="#ff9a0f" stroke-width="1"/><circle cx="1169.7" cy="771.1" r="3" fill="#ff9a0f" fill-opacity="0.35" stroke="#ff9a0f" stroke-width="1"/><circle cx="1182.6" cy="771.9" r="3" fill="#ff9a0f" fill-opacity="0.35" stroke="#ff9a0f" stroke-width="1"/><circle cx="1195.6" cy="773.4" r="3" fill="#ff9a0f" fill-opacity="0.35" stroke="#ff9a0f" stroke-width="1"/><circle cx="1208.5" cy="776.0" r="3" fill="#ff9a0f" fill-opacity="0.35" stroke="#ff9a0f" stroke-width="1"/><circle cx="1221.5" cy="776.9" r="3" fill="#ff9a0f" fill-opacity="0.35" stroke="#ff9a0f" stroke-width="1"/><circle cx="1234.4" cy="777.2" r="3" fill="#ff9a0f" fill-opacity="0.35" stroke="#ff9a0f" stroke-width="1"/><circle cx="1247.3" cy="777.2" r="3" fill="#ff9a0f" fill-opacity="0.35" stroke="#ff9a0f" stroke-width="1"/><circle cx="1260.3" cy="777.2" r="3" fill="#ff9a0f" fill-opacity="0.35" stroke="#ff9a0f" stroke-width="1"/><circle cx="1273.2" cy="777.2" r="3" fill="#ff9a0f" fill-opacity="0.35" stroke="#ff9a0f" stroke-width="1"/><circle cx="1286.2" cy="777.2" r="3" fill="#ff9a0f" fill-opacity="0.35" stroke="#ff9a0f" stroke-width="1"/><circle cx="1299.1" cy="777.2" r="3" fill="#ff9a0f" fill-opacity="0.35" stroke="#ff9a0f" stroke-width="1"/><circle cx="1312.0" cy="777.2" r="3" fill="#ff9a0f" fill-opacity="0.35" stroke="#ff9a0f" stroke-width="1"/><circle cx="1325.0" cy="777.2" r="3" fill="#ff9a0f" fill-opacity="0.35" stroke="#ff9a0f" stroke-width="1"/><circle cx="1337.9" cy="776.9" r="3" fill="#ff9a0f" fill-opacity="0.35" stroke="#ff9a0f" stroke-width="1"/><circle cx="1350.9" cy="776.5" r="3" fill="#ff9a0f" fill-opacity="0.35" stroke="#ff9a0f" stroke-width="1"/><circle cx="1363.8" cy="776.0" r="3" fill="#ff9a0f" fill-opacity="0.35" stroke="#ff9a0f" stroke-width="1"/><circle cx="1376.7" cy="776.3" r="3" fill="#ff9a0f" fill-opacity="0.35" stroke="#ff9a0f" stroke-width="1"/><circle cx="1389.7" cy="777.0" r="3" fill="#ff9a0f" fill-opacity="0.35" stroke="#ff9a0f" stroke-width="1"/><circle cx="1402.6" cy="777.8" r="3" fill="#ff9a0f" fill-opacity="0.35" stroke="#ff9a0f" stroke-width="1"/><circle cx="1415.6" cy="778.1" r="3" fill="#ff9a0f" fill-opacity="0.35" stroke="#ff9a0f" stroke-width="1"/><circle cx="1428.5" cy="778.4" r="3" fill="#ff9a0f" fill-opacity="0.35" stroke="#ff9a0f" stroke-width="1"/><circle cx="1441.4" cy="778.5" r="3" fill="#ff9a0f" fill-opacity="0.35" stroke="#ff9a0f" stroke-width="1"/><circle cx="1454.4" cy="778.8" r="3" fill="#ff9a0f" fill-opacity="0.35" stroke="#ff9a0f" stroke-width="1"/><circle cx="1467.3" cy="778.9" r="3" fill="#ff9a0f" fill-opacity="0.35" stroke="#ff9a0f" stroke-width="1"/><circle cx="1480.3" cy="779.0" r="3" fill="#ff9a0f" fill-opacity="0.35" stroke="#ff9a0f" stroke-width="1"/><circle cx="1493.2" cy="779.5" r="3" fill="#ff9a0f" fill-opacity="0.35" stroke="#ff9a0f" stroke-width="1"/><polyline points="367.4,906.5 380.3,905.3 393.3,904.4 406.2,903.2 419.2,902.4 432.1,902.0 445.0,904.9 458.0,904.2 470.9,903.8 483.9,903.2 496.8,902.4 509.7,902.4 522.7,903.2 535.6,905.7 548.6,905.3 561.5,904.6 574.4,903.8 587.4,903.4 600.3,902.8 613.3,903.2 626.2,906.7 639.1,906.5 652.1,907.5 665.0,907.9 678.0,913.5 690.9,915.6 703.8,917.1 716.8,918.6 729.7,918.2 742.7,917.4 755.6,916.7 768.5,916.4 781.5,916.0 794.4,916.0 807.4,917.1 820.3,916.7 833.2,916.4 846.2,916.0 859.1,915.6 872.1,915.6 885.0,915.6 897.9,917.8 910.9,917.4 923.8,917.1 936.8,916.7 949.7,916.4 962.7,916.0 975.6,916.0 988.5,918.2 1001.5,917.8 1014.4,917.8 1027.4,917.4 1040.3,917.8 1053.2,917.8 1066.2,919.6 1079.1,921.1 1092.1,922.5 1105.0,923.7 1117.9,923.7 1130.9,923.7 1143.8,924.8 1156.8,924.8 1169.7,924.4 1182.6,924.4 1195.6,924.4 1208.5,924.8 1221.5,924.4 1234.4,924.1 1247.3,923.7 1260.3,924.1 1273.2,924.1 1286.2,924.1 1299.1,924.1 1312.0,924.1 1325.0,924.1 1337.9,924.1 1350.9,925.6 1363.8,927.4 1376.7,927.4 1389.7,927.4 1402.6,927.0 1415.6,927.0 1428.5,926.6 1441.4,927.8 1454.4,928.1 1467.3,928.1 1480.3,928.1 1493.2,928.1" fill="none" stroke="#ff9a0f" stroke-width="3"/><circle cx="367.4" cy="906.5" r="3" fill="#ff9a0f" fill-opacity="0.35" stroke="#ff9a0f" stroke-width="1"/><circle cx="380.3" cy="905.3" r="3" fill="#ff9a0f" fill-opacity="0.35" stroke="#ff9a0f" stroke-width="1"/><circle cx="393.3" cy="904.4" r="3" fill="#ff9a0f" fill-opacity="0.35" stroke="#ff9a0f" stroke-width="1"/><circle cx="406.2" cy="903.2" r="3" fill="#ff9a0f" fill-opacity="0.35" stroke="#ff9a0f" stroke-width="1"/><circle cx="419.2" cy="902.4" r="3" fill="#ff9a0f" fill-opacity="0.35" stroke="#ff9a0f" stroke-width="1"/><circle cx="432.1" cy="902.0" r="3" fill="#ff9a0f" fill-opacity="0.35" stroke="#ff9a0f" stroke-width="1"/><circle cx="445.0" cy="904.9" r="3" fill="#ff9a0f" fill-opacity="0.35" stroke="#ff9a0f" stroke-width="1"/><circle cx="458.0" cy="904.2" r="3" fill="#ff9a0f" fill-opacity="0.35" stroke="#ff9a0f" stroke-width="1"/><circle cx="470.9" cy="903.8" r="3" fill="#ff9a0f" fill-opacity="0.35" stroke="#ff9a0f" stroke-width="1"/><circle cx="483.9" cy="903.2" r="3" fill="#ff9a0f" fill-opacity="0.35" stroke="#ff9a0f" stroke-width="1"/><circle cx="496.8" cy="902.4" r="3" fill="#ff9a0f" fill-opacity="0.35" stroke="#ff9a0f" stroke-width="1"/><circle cx="509.7" cy="902.4" r="3" fill="#ff9a0f" fill-opacity="0.35" stroke="#ff9a0f" stroke-width="1"/><circle cx="522.7" cy="903.2" r="3" fill="#ff9a0f" fill-opacity="0.35" stroke="#ff9a0f" stroke-width="1"/><circle cx="535.6" cy="905.7" r="3" fill="#ff9a0f" fill-opacity="0.35" stroke="#ff9a0f" stroke-width="1"/><circle cx="548.6" cy="905.3" r="3" fill="#ff9a0f" fill-opacity="0.35" stroke="#ff9a0f" stroke-width="1"/><circle cx="561.5" cy="904.6" r="3" fill="#ff9a0f" fill-opacity="0.35" stroke="#ff9a0f" stroke-width="1"/><circle cx="574.4" cy="903.8" r="3" fill="#ff9a0f" fill-opacity="0.35" stroke="#ff9a0f" stroke-width="1"/><circle cx="587.4" cy="903.4" r="3" fill="#ff9a0f" fill-opacity="0.35" stroke="#ff9a0f" stroke-width="1"/><circle cx="600.3" cy="902.8" r="3" fill="#ff9a0f" fill-opacity="0.35" stroke="#ff9a0f" stroke-width="1"/><circle cx="613.3" cy="903.2" r="3" fill="#ff9a0f" fill-opacity="0.35" stroke="#ff9a0f" stroke-width="1"/><circle cx="626.2" cy="906.7" r="3" fill="#ff9a0f" fill-opacity="0.35" stroke="#ff9a0f" stroke-width="1"/><circle cx="639.1" cy="906.5" r="3" fill="#ff9a0f" fill-opacity="0.35" stroke="#ff9a0f" stroke-width="1"/><circle cx="652.1" cy="907.5" r="3" fill="#ff9a0f" fill-opacity="0.35" stroke="#ff9a0f" stroke-width="1"/><circle cx="665.0" cy="907.9" r="3" fill="#ff9a0f" fill-opacity="0.35" stroke="#ff9a0f" stroke-width="1"/><circle cx="678.0" cy="913.5" r="3" fill="#ff9a0f" fill-opacity="0.35" stroke="#ff9a0f" stroke-width="1"/><circle cx="690.9" cy="915.6" r="3" fill="#ff9a0f" fill-opacity="0.35" stroke="#ff9a0f" stroke-width="1"/><circle cx="703.8" cy="917.1" r="3" fill="#ff9a0f" fill-opacity="0.35" stroke="#ff9a0f" stroke-width="1"/><circle cx="716.8" cy="918.6" r="3" fill="#ff9a0f" fill-opacity="0.35" stroke="#ff9a0f" stroke-width="1"/><circle cx="729.7" cy="918.2" r="3" fill="#ff9a0f" fill-opacity="0.35" stroke="#ff9a0f" stroke-width="1"/><circle cx="742.7" cy="917.4" r="3" fill="#ff9a0f" fill-opacity="0.35" stroke="#ff9a0f" stroke-width="1"/><circle cx="755.6" cy="916.7" r="3" fill="#ff9a0f" fill-opacity="0.35" stroke="#ff9a0f" stroke-width="1"/><circle cx="768.5" cy="916.4" r="3" fill="#ff9a0f" fill-opacity="0.35" stroke="#ff9a0f" stroke-width="1"/><circle cx="781.5" cy="916.0" r="3" fill="#ff9a0f" fill-opacity="0.35" stroke="#ff9a0f" stroke-width="1"/><circle cx="794.4" cy="916.0" r="3" fill="#ff9a0f" fill-opacity="0.35" stroke="#ff9a0f" stroke-width="1"/><circle cx="807.4" cy="917.1" r="3" fill="#ff9a0f" fill-opacity="0.35" stroke="#ff9a0f" stroke-width="1"/><circle cx="820.3" cy="916.7" r="3" fill="#ff9a0f" fill-opacity="0.35" stroke="#ff9a0f" stroke-width="1"/><circle cx="833.2" cy="916.4" r="3" fill="#ff9a0f" fill-opacity="0.35" stroke="#ff9a0f" stroke-width="1"/><circle cx="846.2" cy="916.0" r="3" fill="#ff9a0f" fill-opacity="0.35" stroke="#ff9a0f" stroke-width="1"/><circle cx="859.1" cy="915.6" r="3" fill="#ff9a0f" fill-opacity="0.35" stroke="#ff9a0f" stroke-width="1"/><circle cx="872.1" cy="915.6" r="3" fill="#ff9a0f" fill-opacity="0.35" stroke="#ff9a0f" stroke-width="1"/><circle cx="885.0" cy="915.6" r="3" fill="#ff9a0f" fill-opacity="0.35" stroke="#ff9a0f" stroke-width="1"/><circle cx="897.9" cy="917.8" r="3" fill="#ff9a0f" fill-opacity="0.35" stroke="#ff9a0f" stroke-width="1"/><circle cx="910.9" cy="917.4" r="3" fill="#ff9a0f" fill-opacity="0.35" stroke="#ff9a0f" stroke-width="1"/><circle cx="923.8" cy="917.1" r="3" fill="#ff9a0f" fill-opacity="0.35" stroke="#ff9a0f" stroke-width="1"/><circle cx="936.8" cy="916.7" r="3" fill="#ff9a0f" fill-opacity="0.35" stroke="#ff9a0f" stroke-width="1"/><circle cx="949.7" cy="916.4" r="3" fill="#ff9a0f" fill-opacity="0.35" stroke="#ff9a0f" stroke-width="1"/><circle cx="962.7" cy="916.0" r="3" fill="#ff9a0f" fill-opacity="0.35" stroke="#ff9a0f" stroke-width="1"/><circle cx="975.6" cy="916.0" r="3" fill="#ff9a0f" fill-opacity="0.35" stroke="#ff9a0f" stroke-width="1"/><circle cx="988.5" cy="918.2" r="3" fill="#ff9a0f" fill-opacity="0.35" stroke="#ff9a0f" stroke-width="1"/><circle cx="1001.5" cy="917.8" r="3" fill="#ff9a0f" fill-opacity="0.35" stroke="#ff9a0f" stroke-width="1"/><circle cx="1014.4" cy="917.8" r="3" fill="#ff9a0f" fill-opacity="0.35" stroke="#ff9a0f" stroke-width="1"/><circle cx="1027.4" cy="917.4" r="3" fill="#ff9a0f" fill-opacity="0.35" stroke="#ff9a0f" stroke-width="1"/><circle cx="1040.3" cy="917.8" r="3" fill="#ff9a0f" fill-opacity="0.35" stroke="#ff9a0f" stroke-width="1"/><circle cx="1053.2" cy="917.8" r="3" fill="#ff9a0f" fill-opacity="0.35" stroke="#ff9a0f" stroke-width="1"/><circle cx="1066.2" cy="919.6" r="3" fill="#ff9a0f" fill-opacity="0.35" stroke="#ff9a0f" stroke-width="1"/><circle cx="1079.1" cy="921.1" r="3" fill="#ff9a0f" fill-opacity="0.35" stroke="#ff9a0f" stroke-width="1"/><circle cx="1092.1" cy="922.5" r="3" fill="#ff9a0f" fill-opacity="0.35" stroke="#ff9a0f" stroke-width="1"/><circle cx="1105.0" cy="923.7" r="3" fill="#ff9a0f" fill-opacity="0.35" stroke="#ff9a0f" stroke-width="1"/><circle cx="1117.9" cy="923.7" r="3" fill="#ff9a0f" fill-opacity="0.35" stroke="#ff9a0f" stroke-width="1"/><circle cx="1130.9" cy="923.7" r="3" fill="#ff9a0f" fill-opacity="0.35" stroke="#ff9a0f" stroke-width="1"/><circle cx="1143.8" cy="924.8" r="3" fill="#ff9a0f" fill-opacity="0.35" stroke="#ff9a0f" stroke-width="1"/><circle cx="1156.8" cy="924.8" r="3" fill="#ff9a0f" fill-opacity="0.35" stroke="#ff9a0f" stroke-width="1"/><circle cx="1169.7" cy="924.4" r="3" fill="#ff9a0f" fill-opacity="0.35" stroke="#ff9a0f" stroke-width="1"/><circle cx="1182.6" cy="924.4" r="3" fill="#ff9a0f" fill-opacity="0.35" stroke="#ff9a0f" stroke-width="1"/><circle cx="1195.6" cy="924.4" r="3" fill="#ff9a0f" fill-opacity="0.35" stroke="#ff9a0f" stroke-width="1"/><circle cx="1208.5" cy="924.8" r="3" fill="#ff9a0f" fill-opacity="0.35" stroke="#ff9a0f" stroke-width="1"/><circle cx="1221.5" cy="924.4" r="3" fill="#ff9a0f" fill-opacity="0.35" stroke="#ff9a0f" stroke-width="1"/><circle cx="1234.4" cy="924.1" r="3" fill="#ff9a0f" fill-opacity="0.35" stroke="#ff9a0f" stroke-width="1"/><circle cx="1247.3" cy="923.7" r="3" fill="#ff9a0f" fill-opacity="0.35" stroke="#ff9a0f" stroke-width="1"/><circle cx="1260.3" cy="924.1" r="3" fill="#ff9a0f" fill-opacity="0.35" stroke="#ff9a0f" stroke-width="1"/><circle cx="1273.2" cy="924.1" r="3" fill="#ff9a0f" fill-opacity="0.35" stroke="#ff9a0f" stroke-width="1"/><circle cx="1286.2" cy="924.1" r="3" fill="#ff9a0f" fill-opacity="0.35" stroke="#ff9a0f" stroke-width="1"/><circle cx="1299.1" cy="924.1" r="3" fill="#ff9a0f" fill-opacity="0.35" stroke="#ff9a0f" stroke-width="1"/><circle cx="1312.0" cy="924.1" r="3" fill="#ff9a0f" fill-opacity="0.35" stroke="#ff9a0f" stroke-width="1"/><circle cx="1325.0" cy="924.1" r="3" fill="#ff9a0f" fill-opacity="0.35" stroke="#ff9a0f" stroke-width="1"/><circle cx="1337.9" cy="924.1" r="3" fill="#ff9a0f" fill-opacity="0.35" stroke="#ff9a0f" stroke-width="1"/><circle cx="1350.9" cy="925.6" r="3" fill="#ff9a0f" fill-opacity="0.35" stroke="#ff9a0f" stroke-width="1"/><circle cx="1363.8" cy="927.4" r="3" fill="#ff9a0f" fill-opacity="0.35" stroke="#ff9a0f" stroke-width="1"/><circle cx="1376.7" cy="927.4" r="3" fill="#ff9a0f" fill-opacity="0.35" stroke="#ff9a0f" stroke-width="1"/><circle cx="1389.7" cy="927.4" r="3" fill="#ff9a0f" fill-opacity="0.35" stroke="#ff9a0f" stroke-width="1"/><circle cx="1402.6" cy="927.0" r="3" fill="#ff9a0f" fill-opacity="0.35" stroke="#ff9a0f" stroke-width="1"/><circle cx="1415.6" cy="927.0" r="3" fill="#ff9a0f" fill-opacity="0.35" stroke="#ff9a0f" stroke-width="1"/><circle cx="1428.5" cy="926.6" r="3" fill="#ff9a0f" fill-opacity="0.35" stroke="#ff9a0f" stroke-width="1"/><circle cx="1441.4" cy="927.8" r="3" fill="#ff9a0f" fill-opacity="0.35" stroke="#ff9a0f" stroke-width="1"/><circle cx="1454.4" cy="928.1" r="3" fill="#ff9a0f" fill-opacity="0.35" stroke="#ff9a0f" stroke-width="1"/><circle cx="1467.3" cy="928.1" r="3" fill="#ff9a0f" fill-opacity="0.35" stroke="#ff9a0f" stroke-width="1"/><circle cx="1480.3" cy="928.1" r="3" fill="#ff9a0f" fill-opacity="0.35" stroke="#ff9a0f" stroke-width="1"/><circle cx="1493.2" cy="928.1" r="3" fill="#ff9a0f" fill-opacity="0.35" stroke="#ff9a0f" stroke-width="1"/><polyline points="367.4,774.8 380.3,775.5 393.3,776.1 406.2,776.3 419.2,776.6 432.1,777.3 445.0,776.4 458.0,776.4 470.9,775.7 483.9,775.2 496.8,775.5 509.7,776.3 522.7,776.1 535.6,774.8 548.6,775.5 561.5,776.1 574.4,776.4 587.4,776.8 600.3,777.2 613.3,776.8 626.2,775.3 639.1,775.9 652.1,776.1 665.0,776.8 678.0,772.7 690.9,772.0 703.8,771.6 716.8,771.6 729.7,771.6 742.7,772.0 755.6,772.4 768.5,772.7 781.5,773.0 794.4,773.1 807.4,773.5 820.3,773.6 833.2,773.9 846.2,774.0 859.1,774.3 872.1,774.4 885.0,774.5 897.9,774.3 910.9,773.6 923.8,774.4 936.8,774.9 949.7,775.7 962.7,776.1 975.6,776.8 988.5,775.7 1001.5,776.1 1014.4,776.1 1027.4,776.8 1040.3,777.2 1053.2,777.6 1066.2,776.8 1079.1,776.4 1092.1,776.1 1105.0,775.7 1117.9,775.9 1130.9,776.1 1143.8,776.4 1156.8,776.4 1169.7,776.8 1182.6,777.6 1195.6,779.0 1208.5,781.7 1221.5,782.6 1234.4,782.8 1247.3,782.8 1260.3,782.8 1273.2,782.8 1286.2,782.8 1299.1,782.8 1312.0,782.8 1325.0,782.8 1337.9,782.6 1350.9,782.2 1363.8,781.7 1376.7,781.9 1389.7,782.7 1402.6,783.5 1415.6,783.8 1428.5,784.0 1441.4,784.2 1454.4,784.4 1467.3,784.6 1480.3,784.7 1493.2,785.2" fill="none" stroke="#ebe51a" stroke-width="3"/><circle cx="367.4" cy="774.8" r="3" fill="#ebe51a" fill-opacity="0.35" stroke="#ebe51a" stroke-width="1"/><circle cx="380.3" cy="775.5" r="3" fill="#ebe51a" fill-opacity="0.35" stroke="#ebe51a" stroke-width="1"/><circle cx="393.3" cy="776.1" r="3" fill="#ebe51a" fill-opacity="0.35" stroke="#ebe51a" stroke-width="1"/><circle cx="406.2" cy="776.3" r="3" fill="#ebe51a" fill-opacity="0.35" stroke="#ebe51a" stroke-width="1"/><circle cx="419.2" cy="776.6" r="3" fill="#ebe51a" fill-opacity="0.35" stroke="#ebe51a" stroke-width="1"/><circle cx="432.1" cy="777.3" r="3" fill="#ebe51a" fill-opacity="0.35" stroke="#ebe51a" stroke-width="1"/><circle cx="445.0" cy="776.4" r="3" fill="#ebe51a" fill-opacity="0.35" stroke="#ebe51a" stroke-width="1"/><circle cx="458.0" cy="776.4" r="3" fill="#ebe51a" fill-opacity="0.35" stroke="#ebe51a" stroke-width="1"/><circle cx="470.9" cy="775.7" r="3" fill="#ebe51a" fill-opacity="0.35" stroke="#ebe51a" stroke-width="1"/><circle cx="483.9" cy="775.2" r="3" fill="#ebe51a" fill-opacity="0.35" stroke="#ebe51a" stroke-width="1"/><circle cx="496.8" cy="775.5" r="3" fill="#ebe51a" fill-opacity="0.35" stroke="#ebe51a" stroke-width="1"/><circle cx="509.7" cy="776.3" r="3" fill="#ebe51a" fill-opacity="0.35" stroke="#ebe51a" stroke-width="1"/><circle cx="522.7" cy="776.1" r="3" fill="#ebe51a" fill-opacity="0.35" stroke="#ebe51a" stroke-width="1"/><circle cx="535.6" cy="774.8" r="3" fill="#ebe51a" fill-opacity="0.35" stroke="#ebe51a" stroke-width="1"/><circle cx="548.6" cy="775.5" r="3" fill="#ebe51a" fill-opacity="0.35" stroke="#ebe51a" stroke-width="1"/><circle cx="561.5" cy="776.1" r="3" fill="#ebe51a" fill-opacity="0.35" stroke="#ebe51a" stroke-width="1"/><circle cx="574.4" cy="776.4" r="3" fill="#ebe51a" fill-opacity="0.35" stroke="#ebe51a" stroke-width="1"/><circle cx="587.4" cy="776.8" r="3" fill="#ebe51a" fill-opacity="0.35" stroke="#ebe51a" stroke-width="1"/><circle cx="600.3" cy="777.2" r="3" fill="#ebe51a" fill-opacity="0.35" stroke="#ebe51a" stroke-width="1"/><circle cx="613.3" cy="776.8" r="3" fill="#ebe51a" fill-opacity="0.35" stroke="#ebe51a" stroke-width="1"/><circle cx="626.2" cy="775.3" r="3" fill="#ebe51a" fill-opacity="0.35" stroke="#ebe51a" stroke-width="1"/><circle cx="639.1" cy="775.9" r="3" fill="#ebe51a" fill-opacity="0.35" stroke="#ebe51a" stroke-width="1"/><circle cx="652.1" cy="776.1" r="3" fill="#ebe51a" fill-opacity="0.35" stroke="#ebe51a" stroke-width="1"/><circle cx="665.0" cy="776.8" r="3" fill="#ebe51a" fill-opacity="0.35" stroke="#ebe51a" stroke-width="1"/><circle cx="678.0" cy="772.7" r="3" fill="#ebe51a" fill-opacity="0.35" stroke="#ebe51a" stroke-width="1"/><circle cx="690.9" cy="772.0" r="3" fill="#ebe51a" fill-opacity="0.35" stroke="#ebe51a" stroke-width="1"/><circle cx="703.8" cy="771.6" r="3" fill="#ebe51a" fill-opacity="0.35" stroke="#ebe51a" stroke-width="1"/><circle cx="716.8" cy="771.6" r="3" fill="#ebe51a" fill-opacity="0.35" stroke="#ebe51a" stroke-width="1"/><circle cx="729.7" cy="771.6" r="3" fill="#ebe51a" fill-opacity="0.35" stroke="#ebe51a" stroke-width="1"/><circle cx="742.7" cy="772.0" r="3" fill="#ebe51a" fill-opacity="0.35" stroke="#ebe51a" stroke-width="1"/><circle cx="755.6" cy="772.4" r="3" fill="#ebe51a" fill-opacity="0.35" stroke="#ebe51a" stroke-width="1"/><circle cx="768.5" cy="772.7" r="3" fill="#ebe51a" fill-opacity="0.35" stroke="#ebe51a" stroke-width="1"/><circle cx="781.5" cy="773.0" r="3" fill="#ebe51a" fill-opacity="0.35" stroke="#ebe51a" stroke-width="1"/><circle cx="794.4" cy="773.1" r="3" fill="#ebe51a" fill-opacity="0.35" stroke="#ebe51a" stroke-width="1"/><circle cx="807.4" cy="773.5" r="3" fill="#ebe51a" fill-opacity="0.35" stroke="#ebe51a" stroke-width="1"/><circle cx="820.3" cy="773.6" r="3" fill="#ebe51a" fill-opacity="0.35" stroke="#ebe51a" stroke-width="1"/><circle cx="833.2" cy="773.9" r="3" fill="#ebe51a" fill-opacity="0.35" stroke="#ebe51a" stroke-width="1"/><circle cx="846.2" cy="774.0" r="3" fill="#ebe51a" fill-opacity="0.35" stroke="#ebe51a" stroke-width="1"/><circle cx="859.1" cy="774.3" r="3" fill="#ebe51a" fill-opacity="0.35" stroke="#ebe51a" stroke-width="1"/><circle cx="872.1" cy="774.4" r="3" fill="#ebe51a" fill-opacity="0.35" stroke="#ebe51a" stroke-width="1"/><circle cx="885.0" cy="774.5" r="3" fill="#ebe51a" fill-opacity="0.35" stroke="#ebe51a" stroke-width="1"/><circle cx="897.9" cy="774.3" r="3" fill="#ebe51a" fill-opacity="0.35" stroke="#ebe51a" stroke-width="1"/><circle cx="910.9" cy="773.6" r="3" fill="#ebe51a" fill-opacity="0.35" stroke="#ebe51a" stroke-width="1"/><circle cx="923.8" cy="774.4" r="3" fill="#ebe51a" fill-opacity="0.35" stroke="#ebe51a" stroke-width="1"/><circle cx="936.8" cy="774.9" r="3" fill="#ebe51a" fill-opacity="0.35" stroke="#ebe51a" stroke-width="1"/><circle cx="949.7" cy="775.7" r="3" fill="#ebe51a" fill-opacity="0.35" stroke="#ebe51a" stroke-width="1"/><circle cx="962.7" cy="776.1" r="3" fill="#ebe51a" fill-opacity="0.35" stroke="#ebe51a" stroke-width="1"/><circle cx="975.6" cy="776.8" r="3" fill="#ebe51a" fill-opacity="0.35" stroke="#ebe51a" stroke-width="1"/><circle cx="988.5" cy="775.7" r="3" fill="#ebe51a" fill-opacity="0.35" stroke="#ebe51a" stroke-width="1"/><circle cx="1001.5" cy="776.1" r="3" fill="#ebe51a" fill-opacity="0.35" stroke="#ebe51a" stroke-width="1"/><circle cx="1014.4" cy="776.1" r="3" fill="#ebe51a" fill-opacity="0.35" stroke="#ebe51a" stroke-width="1"/><circle cx="1027.4" cy="776.8" r="3" fill="#ebe51a" fill-opacity="0.35" stroke="#ebe51a" stroke-width="1"/><circle cx="1040.3" cy="777.2" r="3" fill="#ebe51a" fill-opacity="0.35" stroke="#ebe51a" stroke-width="1"/><circle cx="1053.2" cy="777.6" r="3" fill="#ebe51a" fill-opacity="0.35" stroke="#ebe51a" stroke-width="1"/><circle cx="1066.2" cy="776.8" r="3" fill="#ebe51a" fill-opacity="0.35" stroke="#ebe51a" stroke-width="1"/><circle cx="1079.1" cy="776.4" r="3" fill="#ebe51a" fill-opacity="0.35" stroke="#ebe51a" stroke-width="1"/><circle cx="1092.1" cy="776.1" r="3" fill="#ebe51a" fill-opacity="0.35" stroke="#ebe51a" stroke-width="1"/><circle cx="1105.0" cy="775.7" r="3" fill="#ebe51a" fill-opacity="0.35" stroke="#ebe51a" stroke-width="1"/><circle cx="1117.9" cy="775.9" r="3" fill="#ebe51a" fill-opacity="0.35" stroke="#ebe51a" stroke-width="1"/><circle cx="1130.9" cy="776.1" r="3" fill="#ebe51a" fill-opacity="0.35" stroke="#ebe51a" stroke-width="1"/><circle cx="1143.8" cy="776.4" r="3" fill="#ebe51a" fill-opacity="0.35" stroke="#ebe51a" stroke-width="1"/><circle cx="1156.8" cy="776.4" r="3" fill="#ebe51a" fill-opacity="0.35" stroke="#ebe51a" stroke-width="1"/><circle cx="1169.7" cy="776.8" r="3" fill="#ebe51a" fill-opacity="0.35" stroke="#ebe51a" stroke-width="1"/><circle cx="1182.6" cy="777.6" r="3" fill="#ebe51a" fill-opacity="0.35" stroke="#ebe51a" stroke-width="1"/><circle cx="1195.6" cy="779.0" r="3" fill="#ebe51a" fill-opacity="0.35" stroke="#ebe51a" stroke-width="1"/><circle cx="1208.5" cy="781.7" r="3" fill="#ebe51a" fill-opacity="0.35" stroke="#ebe51a" stroke-width="1"/><circle cx="1221.5" cy="782.6" r="3" fill="#ebe51a" fill-opacity="0.35" stroke="#ebe51a" stroke-width="1"/><circle cx="1234.4" cy="782.8" r="3" fill="#ebe51a" fill-opacity="0.35" stroke="#ebe51a" stroke-width="1"/><circle cx="1247.3" cy="782.8" r="3" fill="#ebe51a" fill-opacity="0.35" stroke="#ebe51a" stroke-width="1"/><circle cx="1260.3" cy="782.8" r="3" fill="#ebe51a" fill-opacity="0.35" stroke="#ebe51a" stroke-width="1"/><circle cx="1273.2" cy="782.8" r="3" fill="#ebe51a" fill-opacity="0.35" stroke="#ebe51a" stroke-width="1"/><circle cx="1286.2" cy="782.8" r="3" fill="#ebe51a" fill-opacity="0.35" stroke="#ebe51a" stroke-width="1"/><circle cx="1299.1" cy="782.8" r="3" fill="#ebe51a" fill-opacity="0.35" stroke="#ebe51a" stroke-width="1"/><circle cx="1312.0" cy="782.8" r="3" fill="#ebe51a" fill-opacity="0.35" stroke="#ebe51a" stroke-width="1"/><circle cx="1325.0" cy="782.8" r="3" fill="#ebe51a" fill-opacity="0.35" stroke="#ebe51a" stroke-width="1"/><circle cx="1337.9" cy="782.6" r="3" fill="#ebe51a" fill-opacity="0.35" stroke="#ebe51a" stroke-width="1"/><circle cx="1350.9" cy="782.2" r="3" fill="#ebe51a" fill-opacity="0.35" stroke="#ebe51a" stroke-width="1"/><circle cx="1363.8" cy="781.7" r="3" fill="#ebe51a" fill-opacity="0.35" stroke="#ebe51a" stroke-width="1"/><circle cx="1376.7" cy="781.9" r="3" fill="#ebe51a" fill-opacity="0.35" stroke="#ebe51a" stroke-width="1"/><circle cx="1389.7" cy="782.7" r="3" fill="#ebe51a" fill-opacity="0.35" stroke="#ebe51a" stroke-width="1"/><circle cx="1402.6" cy="783.5" r="3" fill="#ebe51a" fill-opacity="0.35" stroke="#ebe51a" stroke-width="1"/><circle cx="1415.6" cy="783.8" r="3" fill="#ebe51a" fill-opacity="0.35" stroke="#ebe51a" stroke-width="1"/><circle cx="1428.5" cy="784.0" r="3" fill="#ebe51a" fill-opacity="0.35" stroke="#ebe51a" stroke-width="1"/><circle cx="1441.4" cy="784.2" r="3" fill="#ebe51a" fill-opacity="0.35" stroke="#ebe51a" stroke-width="1"/><circle cx="1454.4" cy="784.4" r="3" fill="#ebe51a" fill-opacity="0.35" stroke="#ebe51a" stroke-width="1"/><circle cx="1467.3" cy="784.6" r="3" fill="#ebe51a" fill-opacity="0.35" stroke="#ebe51a" stroke-width="1"/><circle cx="1480.3" cy="784.7" r="3" fill="#ebe51a" fill-opacity="0.35" stroke="#ebe51a" stroke-width="1"/><circle cx="1493.2" cy="785.2" r="3" fill="#ebe51a" fill-opacity="0.35" stroke="#ebe51a" stroke-width="1"/><polyline points="367.4,900.5 380.3,899.4 393.3,898.4 406.2,897.2 419.2,896.5 432.1,896.1 445.0,899.0 458.0,898.3 470.9,897.9 483.9,897.2 496.8,896.5 509.7,896.5 522.7,897.2 535.6,899.7 548.6,899.4 561.5,898.7 574.4,897.9 587.4,897.5 600.3,896.8 613.3,897.2 626.2,900.8 639.1,900.5 652.1,901.6 665.0,902.0 678.0,907.5 690.9,909.6 703.8,911.2 716.8,912.7 729.7,912.3 742.7,911.5 755.6,910.8 768.5,910.4 781.5,910.0 794.4,910.0 807.4,911.2 820.3,910.8 833.2,910.4 846.2,910.0 859.1,909.6 872.1,909.6 885.0,909.6 897.9,911.9 910.9,911.5 923.8,911.2 936.8,910.8 949.7,910.4 962.7,910.0 975.6,910.0 988.5,912.3 1001.5,911.9 1014.4,911.9 1027.4,911.5 1040.3,911.9 1053.2,911.9 1066.2,913.7 1079.1,915.2 1092.1,916.6 1105.0,917.8 1117.9,917.8 1130.9,917.8 1143.8,918.9 1156.8,918.9 1169.7,918.5 1182.6,918.5 1195.6,918.5 1208.5,918.9 1221.5,918.5 1234.4,918.2 1247.3,917.8 1260.3,918.2 1273.2,918.2 1286.2,918.2 1299.1,918.2 1312.0,918.2 1325.0,918.2 1337.9,918.2 1350.9,919.6 1363.8,921.5 1376.7,921.5 1389.7,921.5 1402.6,921.1 1415.6,921.1 1428.5,920.7 1441.4,921.9 1454.4,922.2 1467.3,922.2 1480.3,922.2 1493.2,922.2" fill="none" stroke="#ebe51a" stroke-width="3"/><circle cx="367.4" cy="900.5" r="3" fill="#ebe51a" fill-opacity="0.35" stroke="#ebe51a" stroke-width="1"/><circle cx="380.3" cy="899.4" r="3" fill="#ebe51a" fill-opacity="0.35" stroke="#ebe51a" stroke-width="1"/><circle cx="393.3" cy="898.4" r="3" fill="#ebe51a" fill-opacity="0.35" stroke="#ebe51a" stroke-width="1"/><circle cx="406.2" cy="897.2" r="3" fill="#ebe51a" fill-opacity="0.35" stroke="#ebe51a" stroke-width="1"/><circle cx="419.2" cy="896.5" r="3" fill="#ebe51a" fill-opacity="0.35" stroke="#ebe51a" stroke-width="1"/><circle cx="432.1" cy="896.1" r="3" fill="#ebe51a" fill-opacity="0.35" stroke="#ebe51a" stroke-width="1"/><circle cx="445.0" cy="899.0" r="3" fill="#ebe51a" fill-opacity="0.35" stroke="#ebe51a" stroke-width="1"/><circle cx="458.0" cy="898.3" r="3" fill="#ebe51a" fill-opacity="0.35" stroke="#ebe51a" stroke-width="1"/><circle cx="470.9" cy="897.9" r="3" fill="#ebe51a" fill-opacity="0.35" stroke="#ebe51a" stroke-width="1"/><circle cx="483.9" cy="897.2" r="3" fill="#ebe51a" fill-opacity="0.35" stroke="#ebe51a" stroke-width="1"/><circle cx="496.8" cy="896.5" r="3" fill="#ebe51a" fill-opacity="0.35" stroke="#ebe51a" stroke-width="1"/><circle cx="509.7" cy="896.5" r="3" fill="#ebe51a" fill-opacity="0.35" stroke="#ebe51a" stroke-width="1"/><circle cx="522.7" cy="897.2" r="3" fill="#ebe51a" fill-opacity="0.35" stroke="#ebe51a" stroke-width="1"/><circle cx="535.6" cy="899.7" r="3" fill="#ebe51a" fill-opacity="0.35" stroke="#ebe51a" stroke-width="1"/><circle cx="548.6" cy="899.4" r="3" fill="#ebe51a" fill-opacity="0.35" stroke="#ebe51a" stroke-width="1"/><circle cx="561.5" cy="898.7" r="3" fill="#ebe51a" fill-opacity="0.35" stroke="#ebe51a" stroke-width="1"/><circle cx="574.4" cy="897.9" r="3" fill="#ebe51a" fill-opacity="0.35" stroke="#ebe51a" stroke-width="1"/><circle cx="587.4" cy="897.5" r="3" fill="#ebe51a" fill-opacity="0.35" stroke="#ebe51a" stroke-width="1"/><circle cx="600.3" cy="896.8" r="3" fill="#ebe51a" fill-opacity="0.35" stroke="#ebe51a" stroke-width="1"/><circle cx="613.3" cy="897.2" r="3" fill="#ebe51a" fill-opacity="0.35" stroke="#ebe51a" stroke-width="1"/><circle cx="626.2" cy="900.8" r="3" fill="#ebe51a" fill-opacity="0.35" stroke="#ebe51a" stroke-width="1"/><circle cx="639.1" cy="900.5" r="3" fill="#ebe51a" fill-opacity="0.35" stroke="#ebe51a" stroke-width="1"/><circle cx="652.1" cy="901.6" r="3" fill="#ebe51a" fill-opacity="0.35" stroke="#ebe51a" stroke-width="1"/><circle cx="665.0" cy="902.0" r="3" fill="#ebe51a" fill-opacity="0.35" stroke="#ebe51a" stroke-width="1"/><circle cx="678.0" cy="907.5" r="3" fill="#ebe51a" fill-opacity="0.35" stroke="#ebe51a" stroke-width="1"/><circle cx="690.9" cy="909.6" r="3" fill="#ebe51a" fill-opacity="0.35" stroke="#ebe51a" stroke-width="1"/><circle cx="703.8" cy="911.2" r="3" fill="#ebe51a" fill-opacity="0.35" stroke="#ebe51a" stroke-width="1"/><circle cx="716.8" cy="912.7" r="3" fill="#ebe51a" fill-opacity="0.35" stroke="#ebe51a" stroke-width="1"/><circle cx="729.7" cy="912.3" r="3" fill="#ebe51a" fill-opacity="0.35" stroke="#ebe51a" stroke-width="1"/><circle cx="742.7" cy="911.5" r="3" fill="#ebe51a" fill-opacity="0.35" stroke="#ebe51a" stroke-width="1"/><circle cx="755.6" cy="910.8" r="3" fill="#ebe51a" fill-opacity="0.35" stroke="#ebe51a" stroke-width="1"/><circle cx="768.5" cy="910.4" r="3" fill="#ebe51a" fill-opacity="0.35" stroke="#ebe51a" stroke-width="1"/><circle cx="781.5" cy="910.0" r="3" fill="#ebe51a" fill-opacity="0.35" stroke="#ebe51a" stroke-width="1"/><circle cx="794.4" cy="910.0" r="3" fill="#ebe51a" fill-opacity="0.35" stroke="#ebe51a" stroke-width="1"/><circle cx="807.4" cy="911.2" r="3" fill="#ebe51a" fill-opacity="0.35" stroke="#ebe51a" stroke-width="1"/><circle cx="820.3" cy="910.8" r="3" fill="#ebe51a" fill-opacity="0.35" stroke="#ebe51a" stroke-width="1"/><circle cx="833.2" cy="910.4" r="3" fill="#ebe51a" fill-opacity="0.35" stroke="#ebe51a" stroke-width="1"/><circle cx="846.2" cy="910.0" r="3" fill="#ebe51a" fill-opacity="0.35" stroke="#ebe51a" stroke-width="1"/><circle cx="859.1" cy="909.6" r="3" fill="#ebe51a" fill-opacity="0.35" stroke="#ebe51a" stroke-width="1"/><circle cx="872.1" cy="909.6" r="3" fill="#ebe51a" fill-opacity="0.35" stroke="#ebe51a" stroke-width="1"/><circle cx="885.0" cy="909.6" r="3" fill="#ebe51a" fill-opacity="0.35" stroke="#ebe51a" stroke-width="1"/><circle cx="897.9" cy="911.9" r="3" fill="#ebe51a" fill-opacity="0.35" stroke="#ebe51a" stroke-width="1"/><circle cx="910.9" cy="911.5" r="3" fill="#ebe51a" fill-opacity="0.35" stroke="#ebe51a" stroke-width="1"/><circle cx="923.8" cy="911.2" r="3" fill="#ebe51a" fill-opacity="0.35" stroke="#ebe51a" stroke-width="1"/><circle cx="936.8" cy="910.8" r="3" fill="#ebe51a" fill-opacity="0.35" stroke="#ebe51a" stroke-width="1"/><circle cx="949.7" cy="910.4" r="3" fill="#ebe51a" fill-opacity="0.35" stroke="#ebe51a" stroke-width="1"/><circle cx="962.7" cy="910.0" r="3" fill="#ebe51a" fill-opacity="0.35" stroke="#ebe51a" stroke-width="1"/><circle cx="975.6" cy="910.0" r="3" fill="#ebe51a" fill-opacity="0.35" stroke="#ebe51a" stroke-width="1"/><circle cx="988.5" cy="912.3" r="3" fill="#ebe51a" fill-opacity="0.35" stroke="#ebe51a" stroke-width="1"/><circle cx="1001.5" cy="911.9" r="3" fill="#ebe51a" fill-opacity="0.35" stroke="#ebe51a" stroke-width="1"/><circle cx="1014.4" cy="911.9" r="3" fill="#ebe51a" fill-opacity="0.35" stroke="#ebe51a" stroke-width="1"/><circle cx="1027.4" cy="911.5" r="3" fill="#ebe51a" fill-opacity="0.35" stroke="#ebe51a" stroke-width="1"/><circle cx="1040.3" cy="911.9" r="3" fill="#ebe51a" fill-opacity="0.35" stroke="#ebe51a" stroke-width="1"/><circle cx="1053.2" cy="911.9" r="3" fill="#ebe51a" fill-opacity="0.35" stroke="#ebe51a" stroke-width="1"/><circle cx="1066.2" cy="913.7" r="3" fill="#ebe51a" fill-opacity="0.35" stroke="#ebe51a" stroke-width="1"/><circle cx="1079.1" cy="915.2" r="3" fill="#ebe51a" fill-opacity="0.35" stroke="#ebe51a" stroke-width="1"/><circle cx="1092.1" cy="916.6" r="3" fill="#ebe51a" fill-opacity="0.35" stroke="#ebe51a" stroke-width="1"/><circle cx="1105.0" cy="917.8" r="3" fill="#ebe51a" fill-opacity="0.35" stroke="#ebe51a" stroke-width="1"/><circle cx="1117.9" cy="917.8" r="3" fill="#ebe51a" fill-opacity="0.35" stroke="#ebe51a" stroke-width="1"/><circle cx="1130.9" cy="917.8" r="3" fill="#ebe51a" fill-opacity="0.35" stroke="#ebe51a" stroke-width="1"/><circle cx="1143.8" cy="918.9" r="3" fill="#ebe51a" fill-opacity="0.35" stroke="#ebe51a" stroke-width="1"/><circle cx="1156.8" cy="918.9" r="3" fill="#ebe51a" fill-opacity="0.35" stroke="#ebe51a" stroke-width="1"/><circle cx="1169.7" cy="918.5" r="3" fill="#ebe51a" fill-opacity="0.35" stroke="#ebe51a" stroke-width="1"/><circle cx="1182.6" cy="918.5" r="3" fill="#ebe51a" fill-opacity="0.35" stroke="#ebe51a" stroke-width="1"/><circle cx="1195.6" cy="918.5" r="3" fill="#ebe51a" fill-opacity="0.35" stroke="#ebe51a" stroke-width="1"/><circle cx="1208.5" cy="918.9" r="3" fill="#ebe51a" fill-opacity="0.35" stroke="#ebe51a" stroke-width="1"/><circle cx="1221.5" cy="918.5" r="3" fill="#ebe51a" fill-opacity="0.35" stroke="#ebe51a" stroke-width="1"/><circle cx="1234.4" cy="918.2" r="3" fill="#ebe51a" fill-opacity="0.35" stroke="#ebe51a" stroke-width="1"/><circle cx="1247.3" cy="917.8" r="3" fill="#ebe51a" fill-opacity="0.35" stroke="#ebe51a" stroke-width="1"/><circle cx="1260.3" cy="918.2" r="3" fill="#ebe51a" fill-opacity="0.35" stroke="#ebe51a" stroke-width="1"/><circle cx="1273.2" cy="918.2" r="3" fill="#ebe51a" fill-opacity="0.35" stroke="#ebe51a" stroke-width="1"/><circle cx="1286.2" cy="918.2" r="3" fill="#ebe51a" fill-opacity="0.35" stroke="#ebe51a" stroke-width="1"/><circle cx="1299.1" cy="918.2" r="3" fill="#ebe51a" fill-opacity="0.35" stroke="#ebe51a" stroke-width="1"/><circle cx="1312.0" cy="918.2" r="3" fill="#ebe51a" fill-opacity="0.35" stroke="#ebe51a" stroke-width="1"/><circle cx="1325.0" cy="918.2" r="3" fill="#ebe51a" fill-opacity="0.35" stroke="#ebe51a" stroke-width="1"/><circle cx="1337.9" cy="918.2" r="3" fill="#ebe51a" fill-opacity="0.35" stroke="#ebe51a" stroke-width="1"/><circle cx="1350.9" cy="919.6" r="3" fill="#ebe51a" fill-opacity="0.35" stroke="#ebe51a" stroke-width="1"/><circle cx="1363.8" cy="921.5" r="3" fill="#ebe51a" fill-opacity="0.35" stroke="#ebe51a" stroke-width="1"/><circle cx="1376.7" cy="921.5" r="3" fill="#ebe51a" fill-opacity="0.35" stroke="#ebe51a" stroke-width="1"/><circle cx="1389.7" cy="921.5" r="3" fill="#ebe51a" fill-opacity="0.35" stroke="#ebe51a" stroke-width="1"/><circle cx="1402.6" cy="921.1" r="3" fill="#ebe51a" fill-opacity="0.35" stroke="#ebe51a" stroke-width="1"/><circle cx="1415.6" cy="921.1" r="3" fill="#ebe51a" fill-opacity="0.35" stroke="#ebe51a" stroke-width="1"/><circle cx="1428.5" cy="920.7" r="3" fill="#ebe51a" fill-opacity="0.35" stroke="#ebe51a" stroke-width="1"/><circle cx="1441.4" cy="921.9" r="3" fill="#ebe51a" fill-opacity="0.35" stroke="#ebe51a" stroke-width="1"/><circle cx="1454.4" cy="922.2" r="3" fill="#ebe51a" fill-opacity="0.35" stroke="#ebe51a" stroke-width="1"/><circle cx="1467.3" cy="922.2" r="3" fill="#ebe51a" fill-opacity="0.35" stroke="#ebe51a" stroke-width="1"/><circle cx="1480.3" cy="922.2" r="3" fill="#ebe51a" fill-opacity="0.35" stroke="#ebe51a" stroke-width="1"/><circle cx="1493.2" cy="922.2" r="3" fill="#ebe51a" fill-opacity="0.35" stroke="#ebe51a" stroke-width="1"/><circle cx="665.0" cy="917.7" r="3.2" fill="#8a9aa0"/><path d="M665.0 909.5V917.7" stroke="#8a9aa0" stroke-width="2.4"/><text x="356" y="715.4" text-anchor="end" font-size="12" fill="#666">1,800</text><text x="356" y="741.8" text-anchor="end" font-size="12" fill="#666">1,600</text><text x="356" y="768.1" text-anchor="end" font-size="12" fill="#666">1,400</text><text x="356" y="794.5" text-anchor="end" font-size="12" fill="#666">1,200</text><text x="356" y="820.8" text-anchor="end" font-size="12" fill="#666">1,000</text><text x="356" y="847.2" text-anchor="end" font-size="12" fill="#666">800</text><text x="356" y="873.6" text-anchor="end" font-size="12" fill="#666">600</text><text x="356" y="899.9" text-anchor="end" font-size="12" fill="#666">400</text><text x="356" y="926.3" text-anchor="end" font-size="12" fill="#666">200</text><text x="356" y="952.6" text-anchor="end" font-size="12" fill="#666">0</text><text x="356" y="979.0" text-anchor="end" font-size="12" fill="#666">-200</text><text transform="translate(365.9 990.4) rotate(-50)" text-anchor="end" font-size="12" fill="#666" dy="4">Oct 31</text><text transform="translate(391.8 990.4) rotate(-50)" text-anchor="end" font-size="12" fill="#666" dy="4">Nov 2</text><text transform="translate(417.7 990.4) rotate(-50)" text-anchor="end" font-size="12" fill="#666" dy="4">Nov 4</text><text transform="translate(443.5 990.4) rotate(-50)" text-anchor="end" font-size="12" fill="#666" dy="4">Nov 6</text><text transform="translate(469.4 990.4) rotate(-50)" text-anchor="end" font-size="12" fill="#666" dy="4">Nov 8</text><text transform="translate(495.3 990.4) rotate(-50)" text-anchor="end" font-size="12" fill="#666" dy="4">Nov 10</text><text transform="translate(521.2 990.4) rotate(-50)" text-anchor="end" font-size="12" fill="#666" dy="4">Nov 12</text><text transform="translate(547.1 990.4) rotate(-50)" text-anchor="end" font-size="12" fill="#666" dy="4">Nov 14</text><text transform="translate(572.9 990.4) rotate(-50)" text-anchor="end" font-size="12" fill="#666" dy="4">Nov 16</text><text transform="translate(598.8 990.4) rotate(-50)" text-anchor="end" font-size="12" fill="#666" dy="4">Nov 18</text><text transform="translate(624.7 990.4) rotate(-50)" text-anchor="end" font-size="12" fill="#666" dy="4">Nov 20</text><text transform="translate(650.6 990.4) rotate(-50)" text-anchor="end" font-size="12" fill="#666" dy="4">Nov 22</text><text transform="translate(676.5 990.4) rotate(-50)" text-anchor="end" font-size="12" fill="#666" dy="4">Nov 24</text><text transform="translate(702.3 990.4) rotate(-50)" text-anchor="end" font-size="12" fill="#666" dy="4">Nov 26</text><text transform="translate(728.2 990.4) rotate(-50)" text-anchor="end" font-size="12" fill="#666" dy="4">Nov 28</text><text transform="translate(754.1 990.4) rotate(-50)" text-anchor="end" font-size="12" fill="#666" dy="4">Nov 30</text><text transform="translate(780.0 990.4) rotate(-50)" text-anchor="end" font-size="12" fill="#666" dy="4">Dec 2</text><text transform="translate(805.9 990.4) rotate(-50)" text-anchor="end" font-size="12" fill="#666" dy="4">Dec 4</text><text transform="translate(831.7 990.4) rotate(-50)" text-anchor="end" font-size="12" fill="#666" dy="4">Dec 6</text><text transform="translate(857.6 990.4) rotate(-50)" text-anchor="end" font-size="12" fill="#666" dy="4">Dec 8</text><text transform="translate(883.5 990.4) rotate(-50)" text-anchor="end" font-size="12" fill="#666" dy="4">Dec 10</text><text transform="translate(909.4 990.4) rotate(-50)" text-anchor="end" font-size="12" fill="#666" dy="4">Dec 12</text><text transform="translate(935.3 990.4) rotate(-50)" text-anchor="end" font-size="12" fill="#666" dy="4">Dec 14</text><text transform="translate(961.2 990.4) rotate(-50)" text-anchor="end" font-size="12" fill="#666" dy="4">Dec 16</text><text transform="translate(987.0 990.4) rotate(-50)" text-anchor="end" font-size="12" fill="#666" dy="4">Dec 18</text><text transform="translate(1012.9 990.4) rotate(-50)" text-anchor="end" font-size="12" fill="#666" dy="4">Dec 20</text><text transform="translate(1038.8 990.4) rotate(-50)" text-anchor="end" font-size="12" fill="#666" dy="4">Dec 22</text><text transform="translate(1064.7 990.4) rotate(-50)" text-anchor="end" font-size="12" fill="#666" dy="4">Dec 24</text><text transform="translate(1090.6 990.4) rotate(-50)" text-anchor="end" font-size="12" fill="#666" dy="4">Dec 26</text><text transform="translate(1116.4 990.4) rotate(-50)" text-anchor="end" font-size="12" fill="#666" dy="4">Dec 28</text><text transform="translate(1142.3 990.4) rotate(-50)" text-anchor="end" font-size="12" fill="#666" dy="4">Dec 30</text><text transform="translate(1168.2 990.4) rotate(-50)" text-anchor="end" font-size="12" fill="#666" dy="4">Jan 1</text><text transform="translate(1194.1 990.4) rotate(-50)" text-anchor="end" font-size="12" fill="#666" dy="4">Jan 3</text><text transform="translate(1220.0 990.4) rotate(-50)" text-anchor="end" font-size="12" fill="#666" dy="4">Jan 5</text><text transform="translate(1245.8 990.4) rotate(-50)" text-anchor="end" font-size="12" fill="#666" dy="4">Jan 7</text><text transform="translate(1271.7 990.4) rotate(-50)" text-anchor="end" font-size="12" fill="#666" dy="4">Jan 9</text><text transform="translate(1297.6 990.4) rotate(-50)" text-anchor="end" font-size="12" fill="#666" dy="4">Jan 11</text><text transform="translate(1323.5 990.4) rotate(-50)" text-anchor="end" font-size="12" fill="#666" dy="4">Jan 13</text><text transform="translate(1349.4 990.4) rotate(-50)" text-anchor="end" font-size="12" fill="#666" dy="4">Jan 15</text><text transform="translate(1375.2 990.4) rotate(-50)" text-anchor="end" font-size="12" fill="#666" dy="4">Jan 17</text><text transform="translate(1401.1 990.4) rotate(-50)" text-anchor="end" font-size="12" fill="#666" dy="4">Jan 19</text><text transform="translate(1427.0 990.4) rotate(-50)" text-anchor="end" font-size="12" fill="#666" dy="4">Jan 21</text><text transform="translate(1452.9 990.4) rotate(-50)" text-anchor="end" font-size="12" fill="#666" dy="4">Jan 23</text><text transform="translate(1478.8 990.4) rotate(-50)" text-anchor="end" font-size="12" fill="#666" dy="4">Jan 25</text></svg><div class="b" style="left:366.4px;top:666.5px;width:42.8px;height:15.0px;background:#fdfde8;border:3px solid #ebe51a"></div><div class="t" style="left:414.3px;top:665px;font-size:12px;line-height:17px;font-weight:400;color:#666;letter-spacing:-0.023px;">Warning (lower bound)</div><div class="b" style="left:542.9px;top:666.5px;width:42.8px;height:15.0px;background:#ffddb0;border:3px solid #ff9a0f"></div><div class="t" style="left:591.2px;top:665px;font-size:12px;line-height:17px;font-weight:400;color:#666;letter-spacing:-0.032px;">Error (lower bound)</div><div class="b" style="left:702.1px;top:666.5px;width:42.8px;height:15.0px;background:#e3342f;border:3px solid #e3170a"></div><div class="t" style="left:750.4px;top:665px;font-size:12px;line-height:17px;font-weight:400;color:#666;letter-spacing:-0.011px;">Fatal (lower bound)</div><div class="b" style="left:861.7px;top:666.5px;width:42.8px;height:15.0px;background:#2f9fe8;border:3px solid #2f9fe8"></div><div class="t" style="left:909.6px;top:665px;font-size:12px;line-height:17px;font-weight:400;color:#666;letter-spacing:-0.043px;">Actual value</div><div class="b" style="left:983.2px;top:666.5px;width:42.8px;height:15.0px;background:#c9c9ce;border:3px solid #c9c9ce"></div><div class="t" style="left:1031.0px;top:665px;font-size:12px;line-height:17px;font-weight:400;color:#666;letter-spacing:-0.020px;">Expected value</div><div class="b" style="left:1121.1px;top:666.5px;width:42.8px;height:15.0px;background:#fdfde8;border:3px solid #ebe51a"></div><div class="t" style="left:1169.0px;top:665px;font-size:12px;line-height:17px;font-weight:400;color:#666;letter-spacing:-0.003px;">Warning (upper bound)</div><div class="b" style="left:1300.1px;top:666.5px;width:42.8px;height:15.0px;background:#ffddb0;border:3px solid #ff9a0f"></div><div class="t" style="left:1348.0px;top:665px;font-size:12px;line-height:17px;font-weight:400;color:#666;letter-spacing:0.017px;">Error (upper bound)</div><div class="b" style="left:832.8px;top:688.5px;width:42.8px;height:15.0px;background:#e3342f;border:3px solid #e3170a"></div><div class="t" style="left:881.1px;top:687px;font-size:12px;line-height:17px;font-weight:400;color:#666;letter-spacing:-0.028px;">Fatal (upper bound)</div></div></section></main>
</body></html>
